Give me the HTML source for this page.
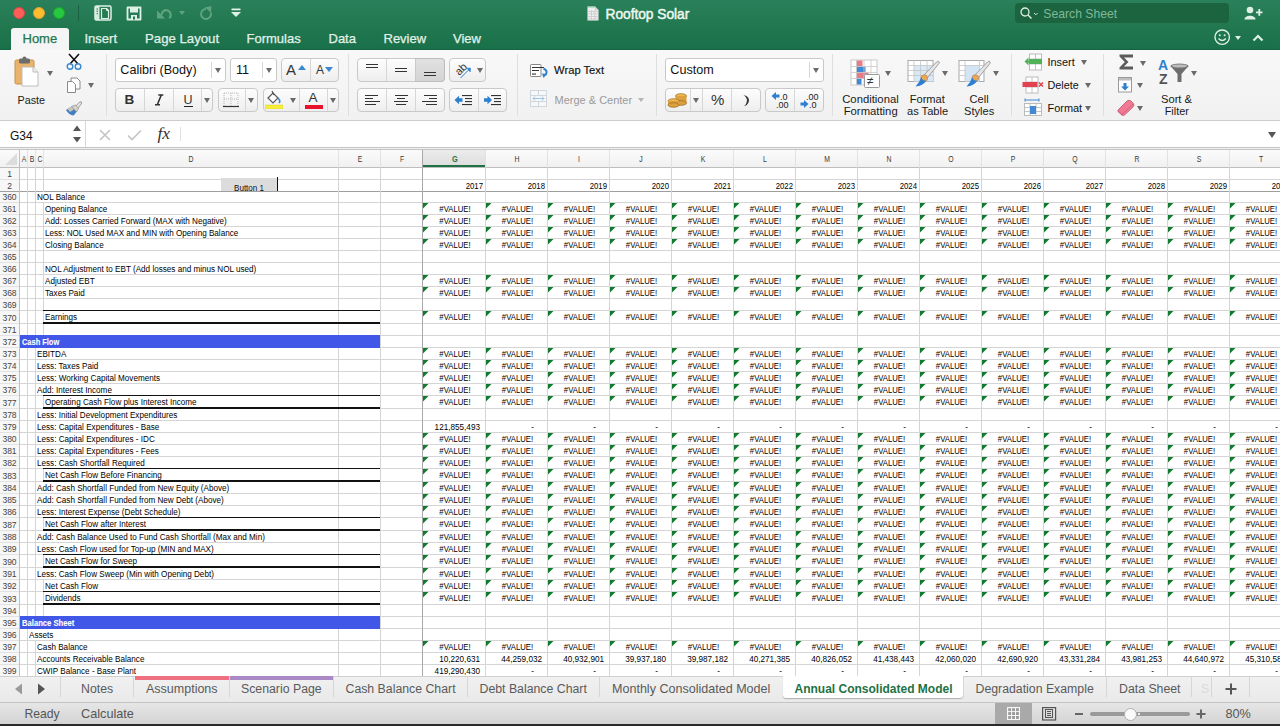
<!DOCTYPE html><html><head><meta charset="utf-8"><style>
html,body{margin:0;padding:0;}body{width:1280px;height:726px;overflow:hidden;position:relative;background:#fff;font-family:"Liberation Sans",sans-serif;}
div,svg{box-sizing:border-box;}
.g{position:absolute;background:#d4d4d4;}
.c{position:absolute;font-size:8.5px;line-height:12px;white-space:pre;color:#000;}
.grp{position:absolute;border:1px solid #c9c9c9;border-radius:4px;background:linear-gradient(#fdfdfd,#eeeeee);}
.dv{position:absolute;top:1px;bottom:1px;width:1px;background:#d6d6d6;}
.arr{position:absolute;width:0;height:0;border-left:3.5px solid transparent;border-right:3.5px solid transparent;border-top:5px solid #6a6a6a;}
.sep{position:absolute;top:54px;height:62px;width:1px;background:#dedede;}
.rl{position:absolute;font-size:12.5px;color:#1a1a1a;white-space:pre;}
</style></head><body>
<div style="position:absolute;left:0px;top:0px;width:1280px;height:50px;background:linear-gradient(#2a805a,#22784f 50%,#18704a);"></div>
<div style="position:absolute;left:0px;top:49px;width:1280px;height:1px;background:#176444;"></div>
<div style="position:absolute;left:12.5px;top:6.500000000000001px;width:12.6px;height:12.6px;border-radius:50%;background:#fc5f57;border:0.7px solid #df4744;box-sizing:border-box;"></div>
<div style="position:absolute;left:32.6px;top:6.500000000000001px;width:12.6px;height:12.6px;border-radius:50%;background:#fdbb2e;border:0.7px solid #de9f34;box-sizing:border-box;"></div>
<div style="position:absolute;left:52.6px;top:6.500000000000001px;width:12.6px;height:12.6px;border-radius:50%;background:#27c83f;border:0.7px solid #1aab29;box-sizing:border-box;"></div>
<div style="position:absolute;left:78px;top:5px;width:1px;height:16px;background:#1b6040;"></div>
<svg style="position:absolute;left:94px;top:5px;" width="18" height="16" viewBox="0 0 18 16"><rect x="1" y="1" width="16" height="14" rx="1.5" fill="none" stroke="#dff0e5" stroke-width="1.5"/><rect x="1" y="1" width="4.5" height="14" fill="#dff0e5" opacity="0.95"/><circle cx="3.2" cy="4" r="0.7" fill="#22784f"/><circle cx="3.2" cy="6.3" r="0.7" fill="#22784f"/><circle cx="3.2" cy="8.6" r="0.7" fill="#22784f"/><path d="M7.5 3.5h5l2 2v8h-7z" fill="none" stroke="#dff0e5" stroke-width="1.2" stroke-linejoin="round"/><path d="M12.5 3.5v2h2" fill="none" stroke="#dff0e5" stroke-width="1"/></svg>
<svg style="position:absolute;left:126px;top:6px;" width="16" height="15" viewBox="0 0 16 15"><path d="M1.5 1.5h13v12h-13z" fill="none" stroke="#dff0e5" stroke-width="1.8" stroke-linejoin="round"/><rect x="4" y="1.5" width="8" height="5" fill="#dff0e5"/><rect x="5" y="9" width="6" height="4.5" fill="#dff0e5"/><rect x="7" y="10.5" width="2" height="3" fill="#22784c"/></svg>
<svg style="position:absolute;left:156px;top:6px;" width="17" height="15" viewBox="0 0 17 15"><path d="M5.5 9 A4.6 4.6 0 1 1 13.2 12.2" fill="none" stroke="#5ea57e" stroke-width="2.2"/><path d="M1 4.5 L1 12.5 L9 12.5z" fill="#5ea57e"/></svg>
<div class="arr" style="left:179px;top:11px;border-top-color:#5ea57e;border-left-width:3px;border-right-width:3px;border-top-width:4px;"></div>
<svg style="position:absolute;left:199px;top:6px;" width="15" height="15" viewBox="0 0 15 15"><path d="M7 3 A5 5 0 1 0 11.8 6.5" fill="none" stroke="#5ea57e" stroke-width="2"/><path d="M6 1.2 L12.5 0.3 L11.8 6.8z" fill="#5ea57e"/></svg>
<svg style="position:absolute;left:231px;top:8px;" width="11" height="11" viewBox="0 0 11 11"><rect x="0.5" y="0.5" width="9" height="1.8" fill="#dff0e5"/><path d="M0 4h10l-5 5z" fill="#dff0e5"/></svg>
<svg style="position:absolute;left:587px;top:6px;" width="12" height="15" viewBox="0 0 12 15"><path d="M0.5 0.5h7.5l3.5 3.5v10.5h-11z" fill="#eeeeee"/><path d="M0.5 0.5h7.5l1 1h-8.5z" fill="#8fc79f"/><path d="M8 0.5v3.5h3.5z" fill="#cfcfcf"/><g fill="#c9c9c9"><rect x="0.5" y="5" width="11" height="0.8"/><rect x="0.5" y="7.5" width="11" height="0.8"/><rect x="0.5" y="10" width="11" height="0.8"/><rect x="0.5" y="12.5" width="11" height="0.8"/><rect x="4" y="4" width="0.8" height="10.5"/><rect x="7.5" y="4" width="0.8" height="10.5"/></g></svg>
<div style="position:absolute;left:605.5px;top:4.52px;white-space:pre;line-height:20px;font-size:13.8px;color:#eef8f1;-webkit-text-stroke:0.45px #eef8f1;letter-spacing:-0.05px;">Rooftop Solar</div>
<div style="position:absolute;left:1015px;top:3px;width:214px;height:20px;background:#1c6440;border-radius:4px;"></div>
<svg style="position:absolute;left:1020px;top:7px;" width="18" height="12" viewBox="0 0 18 12"><circle cx="5" cy="5" r="4" fill="none" stroke="#dcefe3" stroke-width="1.3"/><line x1="8" y1="8" x2="11.5" y2="11.5" stroke="#dcefe3" stroke-width="1.4"/><path d="M14 6 l1.8 1.8 l1.8 -1.8" fill="none" stroke="#dcefe3" stroke-width="1"/></svg>
<div style="position:absolute;left:1043.3px;top:3.57px;white-space:pre;line-height:20px;font-size:12.2px;color:#80b898;">Search Sheet</div>
<svg style="position:absolute;left:1244px;top:6px;" width="19" height="14" viewBox="0 0 19 14"><circle cx="6" cy="4" r="3.3" fill="#dff0e5"/><path d="M0.5 13.5 C0.5 8.5 11.5 8.5 11.5 13.5z" fill="#dff0e5"/><rect x="12" y="5.5" width="6.5" height="1.8" fill="#dff0e5"/><rect x="14.4" y="3" width="1.8" height="6.8" fill="#dff0e5"/></svg>
<svg style="position:absolute;left:1214px;top:29px;" width="17" height="17" viewBox="0 0 17 17"><circle cx="8.2" cy="8.2" r="7.2" fill="none" stroke="#dff0e5" stroke-width="1.4"/><circle cx="5.8" cy="6.3" r="1" fill="#dff0e5"/><circle cx="10.6" cy="6.3" r="1" fill="#dff0e5"/><path d="M4.5 9.5 Q8.2 13.5 11.9 9.5" fill="none" stroke="#dff0e5" stroke-width="1.3"/></svg>
<div class="arr" style="left:1234.5px;top:36px;border-top-color:#dff0e5;border-left-width:3px;border-right-width:3px;border-top-width:4px;"></div>
<svg style="position:absolute;left:1252px;top:33px;" width="12" height="9" viewBox="0 0 12 9"><path d="M1.5 7.5 L6 3 L10.5 7.5" fill="none" stroke="#dff0e5" stroke-width="2.2"/></svg>
<div style="position:absolute;left:11px;top:28px;width:58px;height:23px;background:#f5f5f5;border-radius:3px 3px 0 0;"></div>
<div style="position:absolute;left:22.5px;top:29.30px;white-space:pre;line-height:20px;font-size:13px;color:#22784c;-webkit-text-stroke:0.25px #22784c;">Home</div>
<div style="position:absolute;left:84.5px;top:29.30px;white-space:pre;line-height:20px;font-size:13px;color:#e2f1e8;-webkit-text-stroke:0.25px #e2f1e8;">Insert</div>
<div style="position:absolute;left:145px;top:29.23px;white-space:pre;line-height:20px;font-size:13.2px;color:#e2f1e8;-webkit-text-stroke:0.25px #e2f1e8;">Page Layout</div>
<div style="position:absolute;left:246.5px;top:29.30px;white-space:pre;line-height:20px;font-size:13px;color:#e2f1e8;-webkit-text-stroke:0.25px #e2f1e8;">Formulas</div>
<div style="position:absolute;left:328.5px;top:29.30px;white-space:pre;line-height:20px;font-size:13px;color:#e2f1e8;-webkit-text-stroke:0.25px #e2f1e8;">Data</div>
<div style="position:absolute;left:383.5px;top:29.30px;white-space:pre;line-height:20px;font-size:13px;color:#e2f1e8;-webkit-text-stroke:0.25px #e2f1e8;">Review</div>
<div style="position:absolute;left:453px;top:29.30px;white-space:pre;line-height:20px;font-size:13px;color:#e2f1e8;-webkit-text-stroke:0.25px #e2f1e8;">View</div>
<div style="position:absolute;left:0px;top:50px;width:1280px;height:70px;background:linear-gradient(#f8f8f8,#f1f1f1);"></div>
<div style="position:absolute;left:0px;top:120px;width:1280px;height:1px;background:#cdcdcd;"></div>
<div class="sep" style="left:106px;"></div>
<div class="sep" style="left:348px;"></div>
<div class="sep" style="left:517px;"></div>
<div class="sep" style="left:656px;"></div>
<div class="sep" style="left:832px;"></div>
<div class="sep" style="left:1011px;"></div>
<div class="sep" style="left:1103px;"></div>
<svg style="position:absolute;left:14px;top:56px;" width="28" height="32" viewBox="0 0 28 32"><rect x="1" y="4" width="19" height="24" rx="1.5" fill="#e9b36d" stroke="#c8914c" stroke-width="1"/><rect x="5" y="2.5" width="11" height="5" rx="1.5" fill="#6d6d6d"/><circle cx="10.5" cy="2.5" r="2" fill="#6d6d6d"/><path d="M8 11h11l5 5v14h-16z" fill="#fff" stroke="#bdbdbd" stroke-width="1"/><path d="M19 11v5h5" fill="#f0f0f0" stroke="#bdbdbd" stroke-width="1"/></svg>
<div class="arr" style="left:47px;top:71px;"></div>
<div style="position:absolute;left:17.5px;top:89.56px;white-space:pre;line-height:20px;font-size:10.8px;color:#1a1a1a;">Paste</div>
<svg style="position:absolute;left:66px;top:53px;" width="16" height="18" viewBox="0 0 16 18"><path d="M3 1 L12 11 M13 1 L4 11" stroke="#111" stroke-width="1.6"/><circle cx="4" cy="13.5" r="2.8" fill="none" stroke="#3a87d0" stroke-width="1.4"/><circle cx="12" cy="13.5" r="2.8" fill="none" stroke="#3a87d0" stroke-width="1.4"/></svg>
<svg style="position:absolute;left:66px;top:77px;" width="16" height="16" viewBox="0 0 16 16"><path d="M5 1h6l3 3v8h-9z" fill="#fff" stroke="#8a8a8a" stroke-width="1"/><path d="M1.5 4.5h5l3 3v8h-8z" fill="#fff" stroke="#8a8a8a" stroke-width="1"/></svg>
<div class="arr" style="left:88px;top:83px;"></div>
<svg style="position:absolute;left:65px;top:100px;" width="18" height="16" viewBox="0 0 18 16"><path d="M10.5 6.5 L14.5 2 Q16.5 1 16.8 3 L12.8 8.8z" fill="#e6e6e6" stroke="#8a8a8a" stroke-width="0.8"/><path d="M6.5 6.5 L10.5 5 L13.5 8.5 L11.5 12z" fill="#d9d3c8" stroke="#8a8a8a" stroke-width="0.7"/><path d="M1 10 L6.5 6.5 L11.5 12 L8.5 15.5 Q4 15 1 10z" fill="#3f7fc6"/><path d="M2.5 9 L6.5 6.5 L9 9.5 L5 12z" fill="#c9c2b5"/></svg>
<div class="grp" style="left:115px;top:58px;width:111px;height:24px;background:#fff;border-radius:3px;"></div>
<div class="dv" style="left:211px;top:62px;height:16px;"></div>
<div style="position:absolute;left:120.3px;top:60.23px;white-space:pre;line-height:20px;font-size:12.6px;color:#111;">Calibri (Body)</div>
<div class="arr" style="left:215px;top:68px;"></div>
<div class="grp" style="left:230px;top:58px;width:47px;height:24px;background:#fff;border-radius:3px;"></div>
<div class="dv" style="left:262px;top:62px;height:16px;"></div>
<div style="position:absolute;left:236px;top:60.23px;white-space:pre;line-height:20px;font-size:12.6px;color:#111;">11</div>
<div class="arr" style="left:266px;top:68px;"></div>
<div class="grp" style="left:281px;top:58px;width:58px;height:24px;"></div>
<div class="dv" style="left:310px;top:59px;height:22px;"></div>
<div style="position:absolute;left:286px;top:60px;white-space:pre;line-height:20px;font-size:15px;color:#333;">A</div>
<svg style="position:absolute;left:298px;top:65px;" width="8" height="5" viewBox="0 0 8 5"><path d="M0 5 L4 0 L8 5z" fill="#3a87d0"/></svg>
<div style="position:absolute;left:316px;top:62px;white-space:pre;line-height:16px;font-size:12px;color:#333;">A</div>
<svg style="position:absolute;left:325px;top:67px;" width="8" height="5" viewBox="0 0 8 5"><path d="M0 0 L4 5 L8 0z" fill="#3a87d0"/></svg>
<div class="grp" style="left:115px;top:88px;width:98px;height:24px;"></div>
<div class="dv" style="left:144px;top:89px;height:22px;"></div>
<div class="dv" style="left:173px;top:89px;height:22px;"></div>
<div class="dv" style="left:201px;top:89px;height:22px;"></div>
<div style="position:absolute;left:124.5px;top:89.82px;white-space:pre;line-height:20px;font-size:13.5px;font-weight:bold;color:#333;">B</div>
<svg style="position:absolute;left:153px;top:93px;" width="12" height="14" viewBox="0 0 12 14"><path d="M5.3 2 H10.3 M2 11.7 H7 M8.3 2 L4.3 11.7" fill="none" stroke="#333" stroke-width="1.6"/></svg>
<div style="position:absolute;left:183.5px;top:89.67px;white-space:pre;line-height:20px;font-size:12.5px;color:#333;">U</div>
<div style="position:absolute;left:183.5px;top:106px;width:9.5px;height:1.2px;background:#222;"></div>
<div class="arr" style="left:204px;top:98px;"></div>
<div class="grp" style="left:218px;top:88px;width:40px;height:24px;"></div>
<div class="dv" style="left:245px;top:89px;height:22px;"></div>
<svg style="position:absolute;left:223px;top:92px;" width="16" height="16" viewBox="0 0 16 16"><g stroke="#aaa" stroke-width="0.8" stroke-dasharray="1 1"><line x1="1" y1="1" x2="15" y2="1"/><line x1="1" y1="7" x2="15" y2="7"/><line x1="1" y1="1" x2="1" y2="14"/><line x1="8" y1="1" x2="8" y2="14"/><line x1="15" y1="1" x2="15" y2="14"/></g><line x1="0" y1="14.5" x2="16" y2="14.5" stroke="#333" stroke-width="1.2"/></svg>
<div class="arr" style="left:248px;top:98px;"></div>
<div class="grp" style="left:263px;top:88px;width:76px;height:24px;"></div>
<div class="dv" style="left:299px;top:89px;height:22px;"></div>
<div class="dv" style="left:327px;top:89px;height:22px;"></div>
<svg style="position:absolute;left:265px;top:90px;" width="18" height="19" viewBox="0 0 18 19"><path d="M3 8 L8 3 L13 8 L8 13z" fill="#fff" stroke="#555" stroke-width="1.2"/><path d="M7 1 L9 5" stroke="#555" stroke-width="1.2"/><path d="M13 8 Q16 11 14 13" fill="none" stroke="#3a87d0" stroke-width="1.6"/><rect x="0" y="15" width="18" height="4" fill="#f6ee3a" stroke="#d9cc2a" stroke-width="0.5"/></svg>
<div class="arr" style="left:290px;top:98px;"></div>
<div style="position:absolute;left:308.5px;top:87.82px;white-space:pre;line-height:20px;font-size:13.5px;color:#333;">A</div>
<div style="position:absolute;left:305px;top:105px;width:18px;height:4px;background:#e8132b;"></div>
<div class="arr" style="left:330px;top:98px;"></div>
<div class="grp" style="left:357px;top:58px;width:88px;height:24px;"></div>
<div style="position:absolute;left:415px;top:58px;width:30px;height:24px;border:1px solid #bdbdbd;border-left:none;border-radius:0 4px 4px 0;background:linear-gradient(#e1e1e1,#d4d4d4);box-sizing:border-box;"></div>
<div class="dv" style="left:386px;top:59px;height:22px;"></div>
<div style="position:absolute;left:415px;top:59px;width:1px;height:22px;background:#c9c9c9;"></div>
<div style="position:absolute;left:366px;top:64px;width:12px;height:1.3px;background:#333;"></div>
<div style="position:absolute;left:366px;top:67px;width:12px;height:1.3px;background:#333;"></div>
<div style="position:absolute;left:395px;top:68px;width:12px;height:1.3px;background:#333;"></div>
<div style="position:absolute;left:395px;top:71px;width:12px;height:1.3px;background:#333;"></div>
<div style="position:absolute;left:424px;top:72px;width:12px;height:1.3px;background:#333;"></div>
<div style="position:absolute;left:424px;top:75px;width:12px;height:1.3px;background:#333;"></div>
<div class="grp" style="left:449px;top:58px;width:37px;height:24px;"></div>
<svg style="position:absolute;left:453px;top:60px;" width="22" height="20" viewBox="0 0 22 20"><g transform="rotate(-45 9 9)"><text x="2" y="12" font-size="11" fill="#333" font-family="Liberation Sans">ab</text></g><path d="M7.5 18 L17 8.5" stroke="#2f7fd0" stroke-width="1"/><path d="M13.5 8.3 L17.3 8.2 L17.2 12" fill="#2f7fd0" stroke="#2f7fd0" stroke-width="0.8"/></svg>
<div class="arr" style="left:477px;top:68px;"></div>
<div class="grp" style="left:357px;top:88px;width:88px;height:24px;"></div>
<div class="dv" style="left:386px;top:89px;height:22px;"></div>
<div class="dv" style="left:415px;top:89px;height:22px;"></div>
<div style="position:absolute;left:365px;top:95px;width:13px;height:1.3px;background:#333;"></div><div style="position:absolute;left:365px;top:98px;width:8px;height:1.3px;background:#333;"></div><div style="position:absolute;left:365px;top:101px;width:15px;height:1.3px;background:#333;"></div><div style="position:absolute;left:365px;top:104px;width:11px;height:1.3px;background:#333;"></div>
<div style="position:absolute;left:394.5px;top:95px;width:13px;height:1.3px;background:#333;"></div><div style="position:absolute;left:397.0px;top:98px;width:8px;height:1.3px;background:#333;"></div><div style="position:absolute;left:394.0px;top:101px;width:14px;height:1.3px;background:#333;"></div><div style="position:absolute;left:396.0px;top:104px;width:10px;height:1.3px;background:#333;"></div>
<div style="position:absolute;left:424px;top:95px;width:13px;height:1.3px;background:#333;"></div><div style="position:absolute;left:429px;top:98px;width:8px;height:1.3px;background:#333;"></div><div style="position:absolute;left:422px;top:101px;width:15px;height:1.3px;background:#333;"></div><div style="position:absolute;left:426px;top:104px;width:11px;height:1.3px;background:#333;"></div>
<div class="grp" style="left:449px;top:88px;width:58px;height:24px;"></div>
<div class="dv" style="left:478px;top:89px;height:22px;"></div>
<svg style="position:absolute;left:454px;top:93px;" width="20" height="14" viewBox="0 0 20 14"><path d="M0.5 7 L5 2.8 L5 5.3 L8.5 5.3 L8.5 8.7 L5 8.7 L5 11.2z" fill="#2f7fd0"/><g fill="#333"><rect x="8" y="2" width="10" height="1.1"/><rect x="11" y="5" width="7" height="1.1"/><rect x="11" y="8" width="7" height="1.1"/><rect x="8" y="11" width="10" height="1.1"/></g></svg>
<svg style="position:absolute;left:483px;top:93px;" width="20" height="14" viewBox="0 0 20 14"><path d="M9 7 L4.5 2.8 L4.5 5.3 L1 5.3 L1 8.7 L4.5 8.7 L4.5 11.2z" fill="#2f7fd0"/><g fill="#333"><rect x="8" y="2" width="10" height="1.1"/><rect x="11" y="5" width="7" height="1.1"/><rect x="11" y="8" width="7" height="1.1"/><rect x="8" y="11" width="10" height="1.1"/></g></svg>
<svg style="position:absolute;left:529px;top:63px;" width="22" height="16" viewBox="0 0 22 16"><rect x="1.5" y="1.5" width="10.5" height="12" rx="0.8" fill="#fff" stroke="#888" stroke-width="1"/><g fill="#333"><rect x="3" y="4" width="12" height="1"/><rect x="3" y="7" width="7" height="1"/><rect x="3" y="10.5" width="4" height="1.1"/></g><path d="M14.5 5.5 Q19.5 7.5 16.5 12" fill="none" stroke="#2f7fd0" stroke-width="2"/><path d="M13 10.5 L18 11 L14.5 15z" fill="#2f7fd0"/></svg>
<div style="position:absolute;left:554.1px;top:60.12px;white-space:pre;line-height:20px;font-size:11.2px;color:#111;-webkit-text-stroke:0.15px #111;">Wrap Text</div>
<svg style="position:absolute;left:530px;top:90px;" width="18" height="18" viewBox="0 0 18 18"><rect x="0.5" y="0.5" width="16" height="16" fill="#f7f7f7" stroke="#cfd6dc" stroke-width="1"/><g stroke="#cfd6dc" stroke-width="1"><line x1="0.5" y1="5.5" x2="16.5" y2="5.5"/><line x1="0.5" y1="11.5" x2="16.5" y2="11.5"/><line x1="8.5" y1="0.5" x2="8.5" y2="5.5"/><line x1="8.5" y1="11.5" x2="8.5" y2="16.5"/></g><path d="M3 8.5h11M3 8.5l2-2M3 8.5l2 2M14 8.5l-2-2M14 8.5l-2 2" fill="none" stroke="#9cc6e8" stroke-width="1"/></svg>
<div style="position:absolute;left:554.5px;top:90.09px;white-space:pre;line-height:20px;font-size:11px;color:#9a9a9a;">Merge &amp; Center</div>
<div class="arr" style="left:638px;top:98px;border-top-color:#b5b5b5;border-left-width:3px;border-right-width:3px;border-top-width:4px;"></div>
<div class="grp" style="left:665px;top:58px;width:159px;height:24px;background:#fff;border-radius:3px;"></div>
<div class="dv" style="left:809px;top:62px;height:16px;"></div>
<div style="position:absolute;left:670.3px;top:59.73px;white-space:pre;line-height:20px;font-size:12.6px;color:#111;">Custom</div>
<div class="arr" style="left:813px;top:68px;"></div>
<div class="grp" style="left:665px;top:88px;width:96px;height:24px;"></div>
<div class="dv" style="left:690px;top:89px;height:22px;"></div>
<div class="dv" style="left:702px;top:89px;height:22px;"></div>
<div class="dv" style="left:731px;top:89px;height:22px;"></div>
<svg style="position:absolute;left:667px;top:93px;" width="21" height="15" viewBox="0 0 21 15"><g stroke="#9b6a1c" stroke-width="0.7"><ellipse cx="14" cy="3" rx="5.5" ry="2.3" fill="#f0b94e"/><rect x="8.5" y="3" width="11" height="7" fill="#dca040" stroke="none"/><ellipse cx="14" cy="10" rx="5.5" ry="2.3" fill="#dca040"/><ellipse cx="6.5" cy="8" rx="5.5" ry="2.3" fill="#f0b94e"/><rect x="1" y="8" width="11" height="4" fill="#dca040" stroke="none"/><ellipse cx="6.5" cy="12" rx="5.5" ry="2.3" fill="#dca040"/></g></svg>
<div class="arr" style="left:693px;top:98px;"></div>
<div style="position:absolute;left:711px;top:90.30px;white-space:pre;line-height:20px;font-size:15px;color:#333;">%</div>
<svg style="position:absolute;left:741px;top:94px;" width="10" height="13" viewBox="0 0 10 13"><path d="M2.5 1 Q9.5 2.5 7.5 8.5 Q6.5 11.5 3 12.2 Q5.8 10 6 6.5 Q6 3.5 2.5 1z" fill="#333"/></svg>
<div class="grp" style="left:765px;top:88px;width:59px;height:24px;"></div>
<div class="dv" style="left:794px;top:89px;height:22px;"></div>
<svg style="position:absolute;left:771px;top:91px;" width="22" height="18" viewBox="0 0 22 18"><path d="M0.5 5 L5 1 L5 3.5 L8.5 3.5 L8.5 6.5 L5 6.5 L5 9z" fill="#2f7fd0"/><text x="9" y="9" font-size="9" fill="#222" font-family="Liberation Sans">.0</text><text x="5" y="16.5" font-size="9" fill="#222" font-family="Liberation Sans">.00</text></svg>
<svg style="position:absolute;left:799px;top:91px;" width="22" height="18" viewBox="0 0 22 18"><text x="7" y="9" font-size="9" fill="#222" font-family="Liberation Sans">.00</text><path d="M9.5 13 L5 9 L5 11.5 L1.5 11.5 L1.5 14.5 L5 14.5 L5 17z" fill="#2f7fd0"/><text x="10" y="16.5" font-size="9" fill="#222" font-family="Liberation Sans">.0</text></svg>
<svg style="position:absolute;left:850px;top:59px;" width="32" height="30" viewBox="0 0 32 30"><g stroke="#c9c9c9" stroke-width="1" fill="#fff"><rect x="1" y="1" width="26" height="25"/></g><rect x="6.5" y="1.5" width="6" height="6" fill="#e77b86"/><rect x="6.5" y="7.5" width="9" height="6" fill="#3f8ad6"/><rect x="6.5" y="13.5" width="12" height="6" fill="#e77b86"/><rect x="6.5" y="19.5" width="5" height="6" fill="#3f8ad6"/><g stroke="#c9c9c9" stroke-width="0.8"><line x1="1" y1="7.5" x2="27" y2="7.5"/><line x1="1" y1="13.5" x2="27" y2="13.5"/><line x1="1" y1="19.5" x2="27" y2="19.5"/><line x1="6.5" y1="1" x2="6.5" y2="26"/><line x1="14" y1="1" x2="14" y2="26"/><line x1="21" y1="1" x2="21" y2="26"/></g><rect x="14.5" y="15.5" width="15" height="13" rx="1" fill="#fff" stroke="#9a9a9a" stroke-width="1"/><text x="17" y="26" font-size="12" fill="#333" font-family="Liberation Sans">≠</text></svg>
<div class="arr" style="left:885px;top:71px;"></div>
<div style="position:absolute;left:842.2px;top:89.28px;white-space:pre;line-height:20px;font-size:11.3px;color:#1a1a1a;">Conditional</div>
<div style="position:absolute;left:843.7px;top:100.88px;white-space:pre;line-height:20px;font-size:11.3px;color:#1a1a1a;">Formatting</div>
<svg style="position:absolute;left:907px;top:59px;" width="34" height="30" viewBox="0 0 34 30"><rect x="1" y="1.5" width="25" height="21" fill="#fff" stroke="#a9a9a9" stroke-width="1"/><rect x="7" y="6.5" width="19" height="16" fill="#d9e8f7"/><g stroke="#c4c4c4" stroke-width="0.8"><line x1="1" y1="6.5" x2="26" y2="6.5"/><line x1="1" y1="11.5" x2="26" y2="11.5"/><line x1="1" y1="16.5" x2="26" y2="16.5"/><line x1="7" y1="1.5" x2="7" y2="22.5"/><line x1="13.5" y1="1.5" x2="13.5" y2="22.5"/><line x1="20" y1="1.5" x2="20" y2="22.5"/></g><path d="M16.5 16.5 L29.5 3 Q32.5 1.2 32.2 4.2 L19.8 19.5z" fill="#e4e4e4" stroke="#8f8f8f" stroke-width="0.8"/><circle cx="17.3" cy="19" r="3.3" fill="#e7a85c" stroke="#b9813e" stroke-width="0.6"/><path d="M14.2 18.2 Q16 22.5 19.5 21.5 Q16 27 8.5 27.5 Q12.5 23.5 14.2 18.2z" fill="#2f7fd0"/></svg>
<div class="arr" style="left:942px;top:71px;"></div>
<div style="position:absolute;left:909.7px;top:89.35px;white-space:pre;line-height:20px;font-size:11.1px;color:#1a1a1a;">Format</div>
<div style="position:absolute;left:907px;top:100.95px;white-space:pre;line-height:20px;font-size:11.1px;color:#1a1a1a;">as Table</div>
<svg style="position:absolute;left:958px;top:59px;" width="34" height="30" viewBox="0 0 34 30"><rect x="1" y="1.5" width="25" height="21" fill="#fff" stroke="#a9a9a9" stroke-width="1"/><rect x="7" y="6.5" width="14.5" height="16" fill="#d3e4f5"/><g stroke="#c4c4c4" stroke-width="0.8"><line x1="1" y1="6.5" x2="26" y2="6.5"/><line x1="1" y1="11.5" x2="7" y2="11.5"/><line x1="1" y1="16.5" x2="7" y2="16.5"/><line x1="7" y1="1.5" x2="7" y2="22.5"/><line x1="21.5" y1="1.5" x2="21.5" y2="22.5"/></g><path d="M16.5 16.5 L29.5 3 Q32.5 1.2 32.2 4.2 L19.8 19.5z" fill="#e4e4e4" stroke="#8f8f8f" stroke-width="0.8"/><circle cx="17.3" cy="19" r="3.3" fill="#e7a85c" stroke="#b9813e" stroke-width="0.6"/><path d="M14.2 18.2 Q16 22.5 19.5 21.5 Q16 27 8.5 27.5 Q12.5 23.5 14.2 18.2z" fill="#2f7fd0"/></svg>
<div class="arr" style="left:993px;top:71px;"></div>
<div style="position:absolute;left:969.5px;top:89.35px;white-space:pre;line-height:20px;font-size:11.1px;color:#1a1a1a;">Cell</div>
<div style="position:absolute;left:964px;top:100.95px;white-space:pre;line-height:20px;font-size:11.1px;color:#1a1a1a;">Styles</div>
<svg style="position:absolute;left:1024px;top:53px;" width="20" height="18" viewBox="0 0 20 18"><g fill="#fff" stroke="#b5b5b5" stroke-width="0.9"><rect x="5.5" y="1" width="12" height="16"/></g><g stroke="#b5b5b5" stroke-width="0.8"><line x1="5.5" y1="6" x2="17.5" y2="6"/><line x1="5.5" y1="11" x2="17.5" y2="11"/><line x1="11.5" y1="1" x2="11.5" y2="17"/></g><rect x="5" y="6" width="13" height="5" fill="#4fb256"/><path d="M0.5 8.5 L4.5 4.5 L4.5 12.5z" fill="#4fb256"/><rect x="3" y="7.5" width="3" height="2" fill="#4fb256"/></svg>
<div style="position:absolute;left:1047.5px;top:52.12px;white-space:pre;line-height:20px;font-size:10.9px;color:#111;">Insert</div>
<div class="arr" style="left:1081px;top:60px;"></div>
<svg style="position:absolute;left:1022px;top:76px;" width="22" height="18" viewBox="0 0 22 18"><g fill="#fff" stroke="#b5b5b5" stroke-width="0.9"><rect x="4" y="1" width="12" height="16"/></g><g stroke="#b5b5b5" stroke-width="0.8"><line x1="4" y1="6" x2="16" y2="6"/><line x1="4" y1="11" x2="16" y2="11"/><line x1="10" y1="1" x2="10" y2="17"/></g><rect x="0.5" y="6" width="15" height="5" fill="#e0434d"/><path d="M17 6.5 L21 10.5 M21 6.5 L17 10.5" stroke="#e0434d" stroke-width="1.5"/></svg>
<div style="position:absolute;left:1047.5px;top:74.86px;white-space:pre;line-height:20px;font-size:10.8px;color:#111;">Delete</div>
<div class="arr" style="left:1085px;top:83px;"></div>
<svg style="position:absolute;left:1024px;top:98px;" width="19" height="19" viewBox="0 0 19 19"><g stroke="#2f7fd0" stroke-width="0.9"><line x1="1" y1="2" x2="15" y2="2"/><line x1="1" y1="0.5" x2="1" y2="3.5"/><line x1="15" y1="0.5" x2="15" y2="3.5"/></g><rect x="0.5" y="5.5" width="17" height="12" fill="#fff" stroke="#b5b5b5" stroke-width="0.9"/><g stroke="#b5b5b5" stroke-width="0.8"><line x1="0.5" y1="9.5" x2="17.5" y2="9.5"/><line x1="0.5" y1="13.5" x2="17.5" y2="13.5"/><line x1="6" y1="5.5" x2="6" y2="17.5"/><line x1="12" y1="5.5" x2="12" y2="17.5"/></g><rect x="6" y="8" width="6" height="8" fill="#3f8ad6"/></svg>
<div style="position:absolute;left:1047.5px;top:98.21px;white-space:pre;line-height:20px;font-size:10.95px;color:#111;">Format</div>
<div class="arr" style="left:1085px;top:106px;"></div>
<svg style="position:absolute;left:1119px;top:54px;" width="15" height="16" viewBox="0 0 15 16"><path d="M0.5 0.5 H14 V3.5 H5 L9.5 8 L5 12.5 H14 V15.5 H0.5 V13.5 L5.8 8 L0.5 2.5z" fill="#5c5c5c"/></svg>
<div class="arr" style="left:1140px;top:61px;"></div>
<svg style="position:absolute;left:1118px;top:77px;" width="15" height="16" viewBox="0 0 15 16"><rect x="0.5" y="0.5" width="13" height="14.5" fill="#fff" stroke="#9a9a9a" stroke-width="1"/><rect x="1" y="1" width="12" height="2.5" fill="#bdbdbd"/><path d="M5.5 6h3v3.5h2.5l-4 4l-4-4h2.5z" fill="#2f7fd0"/></svg>
<div class="arr" style="left:1137px;top:83px;"></div>
<svg style="position:absolute;left:1117px;top:99px;" width="18" height="17" viewBox="0 0 18 17"><path d="M1 11 L10 2 Q12 0.5 14 2 L16.5 4.5 Q17.5 6.5 16 8 L7.5 16 Q5.5 17 4 15.5 L1.5 13 Q0.5 12 1 11z" fill="#f07a94" stroke="#c0566c" stroke-width="0.8"/><path d="M1.5 12 L5 15.5 L16 5" fill="none" stroke="#c0566c" stroke-width="0.6"/></svg>
<div class="arr" style="left:1137px;top:106px;"></div>
<div style="position:absolute;left:1158px;top:58px;white-space:pre;line-height:14px;font-size:14px;font-weight:bold;color:#2f7fd0;">A</div>
<div style="position:absolute;left:1159px;top:72px;white-space:pre;line-height:14px;font-size:14px;font-weight:bold;color:#555;">Z</div>
<svg style="position:absolute;left:1170px;top:63px;" width="20" height="20" viewBox="0 0 20 20"><ellipse cx="9.5" cy="3" rx="9" ry="2.5" fill="#7b7b7b"/><path d="M0.5 3 L7.5 11 L7.5 19 L11.5 19 L11.5 11 L18.5 3z" fill="#6e6e6e"/><ellipse cx="9.5" cy="3" rx="7.5" ry="1.6" fill="#bdbdbd"/></svg>
<div class="arr" style="left:1191px;top:71px;"></div>
<div style="position:absolute;left:1161px;top:89.34px;white-space:pre;line-height:20px;font-size:11.15px;color:#1a1a1a;">Sort &amp;</div>
<div style="position:absolute;left:1164.7px;top:101.02px;white-space:pre;line-height:20px;font-size:10.9px;color:#1a1a1a;">Filter</div>
<div style="position:absolute;left:0px;top:121px;width:1280px;height:26px;background:#fff;"></div>
<div style="position:absolute;left:85px;top:121px;width:1px;height:26px;background:#d8d8d8;"></div>
<div style="position:absolute;left:10px;top:126.14px;white-space:pre;line-height:20px;font-size:12px;color:#111;">G34</div>
<svg style="position:absolute;left:72px;top:125px;" width="10" height="19" viewBox="0 0 10 19"><path d="M1 6 L5 0.5 L9 6z M1 12 L5 17.5 L9 12z" fill="#555"/></svg>
<svg style="position:absolute;left:99px;top:129px;" width="13" height="12" viewBox="0 0 13 12"><path d="M1 1 L11 11 M11 1 L1 11" stroke="#c4c4c4" stroke-width="1.6"/></svg>
<svg style="position:absolute;left:127px;top:129px;" width="15" height="12" viewBox="0 0 15 12"><path d="M1 6.5 L5 10.5 L14 1.5" fill="none" stroke="#c4c4c4" stroke-width="1.6"/></svg>
<div style="position:absolute;left:157.5px;top:123px;white-space:pre;line-height:20px;font-size:17.5px;color:#333;font-family:'Liberation Serif';"><i>fx</i></div>
<div style="position:absolute;left:180px;top:127px;width:1px;height:14px;background:#e0e0e0;"></div>
<div class="arr" style="left:1268px;top:132px;border-top-color:#555;border-left-width:4px;border-right-width:4px;border-top-width:6px;"></div>
<div style="position:absolute;left:0px;top:147px;width:1280px;height:1px;background:#c4c4c4;"></div>
<div style="position:absolute;left:0px;top:148px;width:1280px;height:1px;background:#f0f0f0;"></div>
<div style="position:absolute;left:0px;top:149px;width:1280px;height:1px;background:#c4c4c4;"></div>
<div style="position:absolute;left:0px;top:150px;width:1280px;height:17px;background:linear-gradient(#fbfbfb,#f1f1f1);"></div>
<div style="position:absolute;left:0px;top:167px;width:19px;height:509px;background:#f7f7f7;"></div>
<div style="position:absolute;left:423px;top:150px;width:62px;height:17px;background:linear-gradient(#ececec,#dcdcdc);"></div>
<div style="position:absolute;left:423px;top:165px;width:62px;height:2px;background:#1f7244;"></div>
<div style="position:absolute;left:0px;top:179px;width:1280px;height:1px;background:#d5d5d5;"></div>
<div style="position:absolute;left:0px;top:179px;width:19px;height:1px;background:#e2e2e2;"></div>
<div style="position:absolute;left:0px;top:191px;width:1280px;height:1px;background:#9f9f9f;"></div>
<div style="position:absolute;left:0px;top:202px;width:1280px;height:1px;background:#d5d5d5;"></div>
<div style="position:absolute;left:0px;top:202px;width:19px;height:1px;background:#e2e2e2;"></div>
<div style="position:absolute;left:0px;top:214px;width:1280px;height:1px;background:#d5d5d5;"></div>
<div style="position:absolute;left:0px;top:214px;width:19px;height:1px;background:#e2e2e2;"></div>
<div style="position:absolute;left:0px;top:226px;width:1280px;height:1px;background:#d5d5d5;"></div>
<div style="position:absolute;left:0px;top:226px;width:19px;height:1px;background:#e2e2e2;"></div>
<div style="position:absolute;left:0px;top:238px;width:1280px;height:1px;background:#d5d5d5;"></div>
<div style="position:absolute;left:0px;top:238px;width:19px;height:1px;background:#e2e2e2;"></div>
<div style="position:absolute;left:0px;top:250px;width:1280px;height:1px;background:#d5d5d5;"></div>
<div style="position:absolute;left:0px;top:250px;width:19px;height:1px;background:#e2e2e2;"></div>
<div style="position:absolute;left:0px;top:262px;width:1280px;height:1px;background:#d5d5d5;"></div>
<div style="position:absolute;left:0px;top:262px;width:19px;height:1px;background:#e2e2e2;"></div>
<div style="position:absolute;left:0px;top:274px;width:1280px;height:1px;background:#d5d5d5;"></div>
<div style="position:absolute;left:0px;top:274px;width:19px;height:1px;background:#e2e2e2;"></div>
<div style="position:absolute;left:0px;top:286px;width:1280px;height:1px;background:#d5d5d5;"></div>
<div style="position:absolute;left:0px;top:286px;width:19px;height:1px;background:#e2e2e2;"></div>
<div style="position:absolute;left:0px;top:298px;width:1280px;height:1px;background:#d5d5d5;"></div>
<div style="position:absolute;left:0px;top:298px;width:19px;height:1px;background:#e2e2e2;"></div>
<div style="position:absolute;left:0px;top:310px;width:1280px;height:1px;background:#d5d5d5;"></div>
<div style="position:absolute;left:0px;top:310px;width:19px;height:1px;background:#e2e2e2;"></div>
<div style="position:absolute;left:0px;top:323px;width:1280px;height:1px;background:#d5d5d5;"></div>
<div style="position:absolute;left:0px;top:323px;width:19px;height:1px;background:#e2e2e2;"></div>
<div style="position:absolute;left:0px;top:335px;width:1280px;height:1px;background:#d5d5d5;"></div>
<div style="position:absolute;left:0px;top:335px;width:19px;height:1px;background:#e2e2e2;"></div>
<div style="position:absolute;left:0px;top:347px;width:1280px;height:1px;background:#d5d5d5;"></div>
<div style="position:absolute;left:0px;top:347px;width:19px;height:1px;background:#e2e2e2;"></div>
<div style="position:absolute;left:0px;top:359px;width:1280px;height:1px;background:#d5d5d5;"></div>
<div style="position:absolute;left:0px;top:359px;width:19px;height:1px;background:#e2e2e2;"></div>
<div style="position:absolute;left:0px;top:371px;width:1280px;height:1px;background:#d5d5d5;"></div>
<div style="position:absolute;left:0px;top:371px;width:19px;height:1px;background:#e2e2e2;"></div>
<div style="position:absolute;left:0px;top:383px;width:1280px;height:1px;background:#d5d5d5;"></div>
<div style="position:absolute;left:0px;top:383px;width:19px;height:1px;background:#e2e2e2;"></div>
<div style="position:absolute;left:0px;top:395px;width:1280px;height:1px;background:#d5d5d5;"></div>
<div style="position:absolute;left:0px;top:395px;width:19px;height:1px;background:#e2e2e2;"></div>
<div style="position:absolute;left:0px;top:408px;width:1280px;height:1px;background:#d5d5d5;"></div>
<div style="position:absolute;left:0px;top:408px;width:19px;height:1px;background:#e2e2e2;"></div>
<div style="position:absolute;left:0px;top:420px;width:1280px;height:1px;background:#d5d5d5;"></div>
<div style="position:absolute;left:0px;top:420px;width:19px;height:1px;background:#e2e2e2;"></div>
<div style="position:absolute;left:0px;top:432px;width:1280px;height:1px;background:#d5d5d5;"></div>
<div style="position:absolute;left:0px;top:432px;width:19px;height:1px;background:#e2e2e2;"></div>
<div style="position:absolute;left:0px;top:444px;width:1280px;height:1px;background:#d5d5d5;"></div>
<div style="position:absolute;left:0px;top:444px;width:19px;height:1px;background:#e2e2e2;"></div>
<div style="position:absolute;left:0px;top:456px;width:1280px;height:1px;background:#d5d5d5;"></div>
<div style="position:absolute;left:0px;top:456px;width:19px;height:1px;background:#e2e2e2;"></div>
<div style="position:absolute;left:0px;top:468px;width:1280px;height:1px;background:#d5d5d5;"></div>
<div style="position:absolute;left:0px;top:468px;width:19px;height:1px;background:#e2e2e2;"></div>
<div style="position:absolute;left:0px;top:481px;width:1280px;height:1px;background:#d5d5d5;"></div>
<div style="position:absolute;left:0px;top:481px;width:19px;height:1px;background:#e2e2e2;"></div>
<div style="position:absolute;left:0px;top:493px;width:1280px;height:1px;background:#d5d5d5;"></div>
<div style="position:absolute;left:0px;top:493px;width:19px;height:1px;background:#e2e2e2;"></div>
<div style="position:absolute;left:0px;top:505px;width:1280px;height:1px;background:#d5d5d5;"></div>
<div style="position:absolute;left:0px;top:505px;width:19px;height:1px;background:#e2e2e2;"></div>
<div style="position:absolute;left:0px;top:517px;width:1280px;height:1px;background:#d5d5d5;"></div>
<div style="position:absolute;left:0px;top:517px;width:19px;height:1px;background:#e2e2e2;"></div>
<div style="position:absolute;left:0px;top:530px;width:1280px;height:1px;background:#d5d5d5;"></div>
<div style="position:absolute;left:0px;top:530px;width:19px;height:1px;background:#e2e2e2;"></div>
<div style="position:absolute;left:0px;top:542px;width:1280px;height:1px;background:#d5d5d5;"></div>
<div style="position:absolute;left:0px;top:542px;width:19px;height:1px;background:#e2e2e2;"></div>
<div style="position:absolute;left:0px;top:554px;width:1280px;height:1px;background:#d5d5d5;"></div>
<div style="position:absolute;left:0px;top:554px;width:19px;height:1px;background:#e2e2e2;"></div>
<div style="position:absolute;left:0px;top:567px;width:1280px;height:1px;background:#d5d5d5;"></div>
<div style="position:absolute;left:0px;top:567px;width:19px;height:1px;background:#e2e2e2;"></div>
<div style="position:absolute;left:0px;top:579px;width:1280px;height:1px;background:#d5d5d5;"></div>
<div style="position:absolute;left:0px;top:579px;width:19px;height:1px;background:#e2e2e2;"></div>
<div style="position:absolute;left:0px;top:591px;width:1280px;height:1px;background:#d5d5d5;"></div>
<div style="position:absolute;left:0px;top:591px;width:19px;height:1px;background:#e2e2e2;"></div>
<div style="position:absolute;left:0px;top:604px;width:1280px;height:1px;background:#d5d5d5;"></div>
<div style="position:absolute;left:0px;top:604px;width:19px;height:1px;background:#e2e2e2;"></div>
<div style="position:absolute;left:0px;top:616px;width:1280px;height:1px;background:#d5d5d5;"></div>
<div style="position:absolute;left:0px;top:616px;width:19px;height:1px;background:#e2e2e2;"></div>
<div style="position:absolute;left:0px;top:628px;width:1280px;height:1px;background:#d5d5d5;"></div>
<div style="position:absolute;left:0px;top:628px;width:19px;height:1px;background:#e2e2e2;"></div>
<div style="position:absolute;left:0px;top:640px;width:1280px;height:1px;background:#d5d5d5;"></div>
<div style="position:absolute;left:0px;top:640px;width:19px;height:1px;background:#e2e2e2;"></div>
<div style="position:absolute;left:0px;top:652px;width:1280px;height:1px;background:#d5d5d5;"></div>
<div style="position:absolute;left:0px;top:652px;width:19px;height:1px;background:#e2e2e2;"></div>
<div style="position:absolute;left:0px;top:664px;width:1280px;height:1px;background:#d5d5d5;"></div>
<div style="position:absolute;left:0px;top:664px;width:19px;height:1px;background:#e2e2e2;"></div>
<div style="position:absolute;left:0px;top:676px;width:1280px;height:1px;background:#d5d5d5;"></div>
<div style="position:absolute;left:0px;top:676px;width:19px;height:1px;background:#e2e2e2;"></div>
<div style="position:absolute;left:0px;top:167px;width:1280px;height:1px;background:#bdbdbd;"></div>
<div style="position:absolute;left:27px;top:150px;width:1px;height:17px;background:#e2e2e2;"></div>
<div style="position:absolute;left:35px;top:150px;width:1px;height:17px;background:#e2e2e2;"></div>
<div style="position:absolute;left:43px;top:150px;width:1px;height:17px;background:#e2e2e2;"></div>
<div style="position:absolute;left:338px;top:150px;width:1px;height:17px;background:#e2e2e2;"></div>
<div style="position:absolute;left:380px;top:150px;width:1px;height:17px;background:#e2e2e2;"></div>
<div style="position:absolute;left:485px;top:150px;width:1px;height:17px;background:#e2e2e2;"></div>
<div style="position:absolute;left:547px;top:150px;width:1px;height:17px;background:#e2e2e2;"></div>
<div style="position:absolute;left:609px;top:150px;width:1px;height:17px;background:#e2e2e2;"></div>
<div style="position:absolute;left:671px;top:150px;width:1px;height:17px;background:#e2e2e2;"></div>
<div style="position:absolute;left:733px;top:150px;width:1px;height:17px;background:#e2e2e2;"></div>
<div style="position:absolute;left:795px;top:150px;width:1px;height:17px;background:#e2e2e2;"></div>
<div style="position:absolute;left:857px;top:150px;width:1px;height:17px;background:#e2e2e2;"></div>
<div style="position:absolute;left:919px;top:150px;width:1px;height:17px;background:#e2e2e2;"></div>
<div style="position:absolute;left:981px;top:150px;width:1px;height:17px;background:#e2e2e2;"></div>
<div style="position:absolute;left:1043px;top:150px;width:1px;height:17px;background:#e2e2e2;"></div>
<div style="position:absolute;left:1105px;top:150px;width:1px;height:17px;background:#e2e2e2;"></div>
<div style="position:absolute;left:1167px;top:150px;width:1px;height:17px;background:#e2e2e2;"></div>
<div style="position:absolute;left:1229px;top:150px;width:1px;height:17px;background:#e2e2e2;"></div>
<div style="position:absolute;left:1291px;top:150px;width:1px;height:17px;background:#e2e2e2;"></div>
<div style="position:absolute;left:27px;top:167px;width:1px;height:509px;background:#d5d5d5;"></div>
<div style="position:absolute;left:35px;top:167px;width:1px;height:509px;background:#d5d5d5;"></div>
<div style="position:absolute;left:338px;top:167px;width:1px;height:509px;background:#d5d5d5;"></div>
<div style="position:absolute;left:380px;top:167px;width:1px;height:509px;background:#d5d5d5;"></div>
<div style="position:absolute;left:485px;top:167px;width:1px;height:509px;background:#d5d5d5;"></div>
<div style="position:absolute;left:547px;top:167px;width:1px;height:509px;background:#d5d5d5;"></div>
<div style="position:absolute;left:609px;top:167px;width:1px;height:509px;background:#d5d5d5;"></div>
<div style="position:absolute;left:671px;top:167px;width:1px;height:509px;background:#d5d5d5;"></div>
<div style="position:absolute;left:733px;top:167px;width:1px;height:509px;background:#d5d5d5;"></div>
<div style="position:absolute;left:795px;top:167px;width:1px;height:509px;background:#d5d5d5;"></div>
<div style="position:absolute;left:857px;top:167px;width:1px;height:509px;background:#d5d5d5;"></div>
<div style="position:absolute;left:919px;top:167px;width:1px;height:509px;background:#d5d5d5;"></div>
<div style="position:absolute;left:981px;top:167px;width:1px;height:509px;background:#d5d5d5;"></div>
<div style="position:absolute;left:1043px;top:167px;width:1px;height:509px;background:#d5d5d5;"></div>
<div style="position:absolute;left:1105px;top:167px;width:1px;height:509px;background:#d5d5d5;"></div>
<div style="position:absolute;left:1167px;top:167px;width:1px;height:509px;background:#d5d5d5;"></div>
<div style="position:absolute;left:1229px;top:167px;width:1px;height:509px;background:#d5d5d5;"></div>
<div style="position:absolute;left:1291px;top:167px;width:1px;height:509px;background:#d5d5d5;"></div>
<div style="position:absolute;left:43px;top:167px;width:1px;height:509px;background:#d5d5d5;"></div>
<div style="position:absolute;left:19px;top:150px;width:1px;height:526px;background:#c0c0c0;"></div>
<div style="position:absolute;left:422px;top:150px;width:1.3px;height:526px;background:#a8a8a8;"></div>
<svg style="position:absolute;left:4px;top:152px;" width="14" height="14" viewBox="0 0 14 14"><path d="M13 1 L13 13 L1 13z" fill="#dcdcdc"/></svg>
<div style="position:absolute;left:9.3px;top:153px;width:30px;text-align:center;font-size:8.8px;line-height:12px;color:#3a3a3a;transform:scaleX(0.78);">A</div>
<div style="position:absolute;left:17.3px;top:153px;width:30px;text-align:center;font-size:8.8px;line-height:12px;color:#3a3a3a;transform:scaleX(0.78);">B</div>
<div style="position:absolute;left:25.3px;top:153px;width:30px;text-align:center;font-size:8.8px;line-height:12px;color:#3a3a3a;transform:scaleX(0.78);">C</div>
<div style="position:absolute;left:176.3px;top:153px;width:30px;text-align:center;font-size:8.8px;line-height:12px;color:#3a3a3a;transform:scaleX(0.78);">D</div>
<div style="position:absolute;left:345.3px;top:153px;width:30px;text-align:center;font-size:8.8px;line-height:12px;color:#3a3a3a;transform:scaleX(0.78);">E</div>
<div style="position:absolute;left:387.3px;top:153px;width:30px;text-align:center;font-size:8.8px;line-height:12px;color:#3a3a3a;transform:scaleX(0.78);">F</div>
<div style="position:absolute;left:440.3px;top:153px;width:30px;text-align:center;font-size:8.8px;line-height:12px;color:#3a3a3a;transform:scaleX(0.78);font-weight:bold;color:#1f7244;font-size:9.5px;">G</div>
<div style="position:absolute;left:502.3px;top:153px;width:30px;text-align:center;font-size:8.8px;line-height:12px;color:#3a3a3a;transform:scaleX(0.78);">H</div>
<div style="position:absolute;left:564.3px;top:153px;width:30px;text-align:center;font-size:8.8px;line-height:12px;color:#3a3a3a;transform:scaleX(0.78);">I</div>
<div style="position:absolute;left:626.3px;top:153px;width:30px;text-align:center;font-size:8.8px;line-height:12px;color:#3a3a3a;transform:scaleX(0.78);">J</div>
<div style="position:absolute;left:688.3px;top:153px;width:30px;text-align:center;font-size:8.8px;line-height:12px;color:#3a3a3a;transform:scaleX(0.78);">K</div>
<div style="position:absolute;left:750.3px;top:153px;width:30px;text-align:center;font-size:8.8px;line-height:12px;color:#3a3a3a;transform:scaleX(0.78);">L</div>
<div style="position:absolute;left:812.3px;top:153px;width:30px;text-align:center;font-size:8.8px;line-height:12px;color:#3a3a3a;transform:scaleX(0.78);">M</div>
<div style="position:absolute;left:874.3px;top:153px;width:30px;text-align:center;font-size:8.8px;line-height:12px;color:#3a3a3a;transform:scaleX(0.78);">N</div>
<div style="position:absolute;left:936.3px;top:153px;width:30px;text-align:center;font-size:8.8px;line-height:12px;color:#3a3a3a;transform:scaleX(0.78);">O</div>
<div style="position:absolute;left:998.3px;top:153px;width:30px;text-align:center;font-size:8.8px;line-height:12px;color:#3a3a3a;transform:scaleX(0.78);">P</div>
<div style="position:absolute;left:1060.3px;top:153px;width:30px;text-align:center;font-size:8.8px;line-height:12px;color:#3a3a3a;transform:scaleX(0.78);">Q</div>
<div style="position:absolute;left:1122.3px;top:153px;width:30px;text-align:center;font-size:8.8px;line-height:12px;color:#3a3a3a;transform:scaleX(0.78);">R</div>
<div style="position:absolute;left:1184.3px;top:153px;width:30px;text-align:center;font-size:8.8px;line-height:12px;color:#3a3a3a;transform:scaleX(0.78);">S</div>
<div style="position:absolute;left:1246.3px;top:153px;width:30px;text-align:center;font-size:8.8px;line-height:12px;color:#3a3a3a;transform:scaleX(0.78);">T</div>
<div style="position:absolute;left:0px;top:168px;width:19px;text-align:center;font-size:8.5px;line-height:12px;color:#444;">1</div>
<div style="position:absolute;left:0px;top:180px;width:19px;text-align:center;font-size:8.5px;line-height:12px;color:#444;">2</div>
<div style="position:absolute;left:0px;top:191px;width:19px;text-align:center;font-size:8.5px;line-height:12px;color:#444;">360</div>
<div style="position:absolute;left:0px;top:203px;width:19px;text-align:center;font-size:8.5px;line-height:12px;color:#444;">361</div>
<div style="position:absolute;left:0px;top:215px;width:19px;text-align:center;font-size:8.5px;line-height:12px;color:#444;">362</div>
<div style="position:absolute;left:0px;top:227px;width:19px;text-align:center;font-size:8.5px;line-height:12px;color:#444;">363</div>
<div style="position:absolute;left:0px;top:239px;width:19px;text-align:center;font-size:8.5px;line-height:12px;color:#444;">364</div>
<div style="position:absolute;left:0px;top:251px;width:19px;text-align:center;font-size:8.5px;line-height:12px;color:#444;">365</div>
<div style="position:absolute;left:0px;top:263px;width:19px;text-align:center;font-size:8.5px;line-height:12px;color:#444;">366</div>
<div style="position:absolute;left:0px;top:275px;width:19px;text-align:center;font-size:8.5px;line-height:12px;color:#444;">367</div>
<div style="position:absolute;left:0px;top:287px;width:19px;text-align:center;font-size:8.5px;line-height:12px;color:#444;">368</div>
<div style="position:absolute;left:0px;top:299px;width:19px;text-align:center;font-size:8.5px;line-height:12px;color:#444;">369</div>
<div style="position:absolute;left:0px;top:312px;width:19px;text-align:center;font-size:8.5px;line-height:12px;color:#444;">370</div>
<div style="position:absolute;left:0px;top:324px;width:19px;text-align:center;font-size:8.5px;line-height:12px;color:#444;">371</div>
<div style="position:absolute;left:0px;top:336px;width:19px;text-align:center;font-size:8.5px;line-height:12px;color:#444;">372</div>
<div style="position:absolute;left:0px;top:348px;width:19px;text-align:center;font-size:8.5px;line-height:12px;color:#444;">373</div>
<div style="position:absolute;left:0px;top:360px;width:19px;text-align:center;font-size:8.5px;line-height:12px;color:#444;">374</div>
<div style="position:absolute;left:0px;top:372px;width:19px;text-align:center;font-size:8.5px;line-height:12px;color:#444;">375</div>
<div style="position:absolute;left:0px;top:384px;width:19px;text-align:center;font-size:8.5px;line-height:12px;color:#444;">376</div>
<div style="position:absolute;left:0px;top:397px;width:19px;text-align:center;font-size:8.5px;line-height:12px;color:#444;">377</div>
<div style="position:absolute;left:0px;top:409px;width:19px;text-align:center;font-size:8.5px;line-height:12px;color:#444;">378</div>
<div style="position:absolute;left:0px;top:421px;width:19px;text-align:center;font-size:8.5px;line-height:12px;color:#444;">379</div>
<div style="position:absolute;left:0px;top:433px;width:19px;text-align:center;font-size:8.5px;line-height:12px;color:#444;">380</div>
<div style="position:absolute;left:0px;top:445px;width:19px;text-align:center;font-size:8.5px;line-height:12px;color:#444;">381</div>
<div style="position:absolute;left:0px;top:457px;width:19px;text-align:center;font-size:8.5px;line-height:12px;color:#444;">382</div>
<div style="position:absolute;left:0px;top:470px;width:19px;text-align:center;font-size:8.5px;line-height:12px;color:#444;">383</div>
<div style="position:absolute;left:0px;top:482px;width:19px;text-align:center;font-size:8.5px;line-height:12px;color:#444;">384</div>
<div style="position:absolute;left:0px;top:494px;width:19px;text-align:center;font-size:8.5px;line-height:12px;color:#444;">385</div>
<div style="position:absolute;left:0px;top:506px;width:19px;text-align:center;font-size:8.5px;line-height:12px;color:#444;">386</div>
<div style="position:absolute;left:0px;top:519px;width:19px;text-align:center;font-size:8.5px;line-height:12px;color:#444;">387</div>
<div style="position:absolute;left:0px;top:531px;width:19px;text-align:center;font-size:8.5px;line-height:12px;color:#444;">388</div>
<div style="position:absolute;left:0px;top:543px;width:19px;text-align:center;font-size:8.5px;line-height:12px;color:#444;">389</div>
<div style="position:absolute;left:0px;top:556px;width:19px;text-align:center;font-size:8.5px;line-height:12px;color:#444;">390</div>
<div style="position:absolute;left:0px;top:568px;width:19px;text-align:center;font-size:8.5px;line-height:12px;color:#444;">391</div>
<div style="position:absolute;left:0px;top:580px;width:19px;text-align:center;font-size:8.5px;line-height:12px;color:#444;">392</div>
<div style="position:absolute;left:0px;top:593px;width:19px;text-align:center;font-size:8.5px;line-height:12px;color:#444;">393</div>
<div style="position:absolute;left:0px;top:605px;width:19px;text-align:center;font-size:8.5px;line-height:12px;color:#444;">394</div>
<div style="position:absolute;left:0px;top:617px;width:19px;text-align:center;font-size:8.5px;line-height:12px;color:#444;">395</div>
<div style="position:absolute;left:0px;top:629px;width:19px;text-align:center;font-size:8.5px;line-height:12px;color:#444;">396</div>
<div style="position:absolute;left:0px;top:641px;width:19px;text-align:center;font-size:8.5px;line-height:12px;color:#444;">397</div>
<div style="position:absolute;left:0px;top:653px;width:19px;text-align:center;font-size:8.5px;line-height:12px;color:#444;">398</div>
<div style="position:absolute;left:0px;top:665px;width:19px;text-align:center;font-size:8.5px;line-height:12px;color:#444;">399</div>
<div style="position:absolute;left:43px;top:192px;width:1px;height:10px;background:#fff;"></div>
<div class="c" style="left:37px;top:190.5px;transform:scaleX(0.955);transform-origin:0 50%;">NOL Balance</div>
<div class="c" style="left:45px;top:202.5px;transform:scaleX(0.955);transform-origin:0 50%;">Opening Balance</div>
<div class="c" style="left:45px;top:214.5px;transform:scaleX(0.955);transform-origin:0 50%;">Add: Losses Carried Forward (MAX with Negative)</div>
<div class="c" style="left:45px;top:226.5px;transform:scaleX(0.955);transform-origin:0 50%;">Less: NOL Used MAX and MIN with Opening Balance</div>
<div class="c" style="left:45px;top:238.5px;transform:scaleX(0.955);transform-origin:0 50%;">Closing Balance</div>
<div class="c" style="left:45px;top:262.5px;transform:scaleX(0.955);transform-origin:0 50%;">NOL Adjustment to EBT (Add losses and minus NOL used)</div>
<div class="c" style="left:45px;top:274.5px;transform:scaleX(0.955);transform-origin:0 50%;">Adjusted EBT</div>
<div class="c" style="left:45px;top:286.5px;transform:scaleX(0.955);transform-origin:0 50%;">Taxes Paid</div>
<div class="c" style="left:45px;top:310.5px;transform:scaleX(0.955);transform-origin:0 50%;">Earnings</div>
<div style="position:absolute;left:20px;top:335px;width:360px;height:13px;background:#4157e8;"></div>
<div class="c" style="left:21.5px;top:335.7px;color:#fff;font-weight:bold;-webkit-text-stroke:0.1px #fff;transform:scaleX(0.875);transform-origin:0 50%;">Cash Flow</div>
<div style="position:absolute;left:43px;top:348px;width:1px;height:11px;background:#fff;"></div>
<div class="c" style="left:37px;top:347.5px;transform:scaleX(0.955);transform-origin:0 50%;">EBITDA</div>
<div style="position:absolute;left:43px;top:360px;width:1px;height:11px;background:#fff;"></div>
<div class="c" style="left:37px;top:359.5px;transform:scaleX(0.955);transform-origin:0 50%;">Less: Taxes Paid</div>
<div style="position:absolute;left:43px;top:372px;width:1px;height:11px;background:#fff;"></div>
<div class="c" style="left:37px;top:371.5px;transform:scaleX(0.955);transform-origin:0 50%;">Less: Working Capital Movements</div>
<div style="position:absolute;left:43px;top:384px;width:1px;height:11px;background:#fff;"></div>
<div class="c" style="left:37px;top:383.5px;transform:scaleX(0.955);transform-origin:0 50%;">Add: Interest Income</div>
<div class="c" style="left:45px;top:395.5px;transform:scaleX(0.955);transform-origin:0 50%;">Operating Cash Flow plus Interest Income</div>
<div style="position:absolute;left:43px;top:409px;width:1px;height:11px;background:#fff;"></div>
<div class="c" style="left:37px;top:408.5px;transform:scaleX(0.955);transform-origin:0 50%;">Less: Initial Development Expenditures</div>
<div style="position:absolute;left:43px;top:421px;width:1px;height:11px;background:#fff;"></div>
<div class="c" style="left:37px;top:420.5px;transform:scaleX(0.955);transform-origin:0 50%;">Less: Capital Expenditures - Base</div>
<div style="position:absolute;left:43px;top:433px;width:1px;height:11px;background:#fff;"></div>
<div class="c" style="left:37px;top:432.5px;transform:scaleX(0.955);transform-origin:0 50%;">Less: Capital Expenditures - IDC</div>
<div style="position:absolute;left:43px;top:445px;width:1px;height:11px;background:#fff;"></div>
<div class="c" style="left:37px;top:444.5px;transform:scaleX(0.955);transform-origin:0 50%;">Less: Capital Expenditures - Fees</div>
<div style="position:absolute;left:43px;top:457px;width:1px;height:11px;background:#fff;"></div>
<div class="c" style="left:37px;top:456.5px;transform:scaleX(0.955);transform-origin:0 50%;">Less: Cash Shortfall Required</div>
<div class="c" style="left:45px;top:468.5px;transform:scaleX(0.955);transform-origin:0 50%;">Net Cash Flow Before Financing</div>
<div style="position:absolute;left:43px;top:482px;width:1px;height:11px;background:#fff;"></div>
<div class="c" style="left:37px;top:481.5px;transform:scaleX(0.955);transform-origin:0 50%;">Add: Cash Shortfall Funded from New Equity (Above)</div>
<div style="position:absolute;left:43px;top:494px;width:1px;height:11px;background:#fff;"></div>
<div class="c" style="left:37px;top:493.5px;transform:scaleX(0.955);transform-origin:0 50%;">Add: Cash Shortfall Funded from New Debt (Above)</div>
<div style="position:absolute;left:43px;top:506px;width:1px;height:11px;background:#fff;"></div>
<div class="c" style="left:37px;top:505.5px;transform:scaleX(0.955);transform-origin:0 50%;">Less: Interest Expense (Debt Schedule)</div>
<div class="c" style="left:45px;top:517.5px;transform:scaleX(0.955);transform-origin:0 50%;">Net Cash Flow after Interest</div>
<div style="position:absolute;left:43px;top:531px;width:1px;height:11px;background:#fff;"></div>
<div class="c" style="left:37px;top:530.5px;transform:scaleX(0.955);transform-origin:0 50%;">Add: Cash Balance Used to Fund Cash Shortfall (Max and Min)</div>
<div style="position:absolute;left:43px;top:543px;width:1px;height:11px;background:#fff;"></div>
<div class="c" style="left:37px;top:542.5px;transform:scaleX(0.955);transform-origin:0 50%;">Less: Cash Flow used for Top-up (MIN and MAX)</div>
<div class="c" style="left:45px;top:554.5px;transform:scaleX(0.955);transform-origin:0 50%;">Net Cash Flow for Sweep</div>
<div style="position:absolute;left:43px;top:568px;width:1px;height:11px;background:#fff;"></div>
<div class="c" style="left:37px;top:567.5px;transform:scaleX(0.955);transform-origin:0 50%;">Less: Cash Flow Sweep (Min with Opening Debt)</div>
<div class="c" style="left:45px;top:579.5px;transform:scaleX(0.955);transform-origin:0 50%;">Net Cash Flow</div>
<div class="c" style="left:45px;top:591.5px;transform:scaleX(0.955);transform-origin:0 50%;">Dividends</div>
<div style="position:absolute;left:20px;top:616px;width:360px;height:13px;background:#4157e8;"></div>
<div class="c" style="left:21.5px;top:616.7px;color:#fff;font-weight:bold;-webkit-text-stroke:0.1px #fff;transform:scaleX(0.9);transform-origin:0 50%;">Balance Sheet</div>
<div style="position:absolute;left:35px;top:629px;width:1px;height:11px;background:#fff;"></div>
<div style="position:absolute;left:43px;top:629px;width:1px;height:11px;background:#fff;"></div>
<div class="c" style="left:29px;top:628.5px;transform:scaleX(0.955);transform-origin:0 50%;">Assets</div>
<div style="position:absolute;left:43px;top:641px;width:1px;height:11px;background:#fff;"></div>
<div class="c" style="left:37px;top:640.5px;transform:scaleX(0.955);transform-origin:0 50%;">Cash Balance</div>
<div style="position:absolute;left:43px;top:653px;width:1px;height:11px;background:#fff;"></div>
<div class="c" style="left:37px;top:652.5px;transform:scaleX(0.955);transform-origin:0 50%;">Accounts Receivable Balance</div>
<div style="position:absolute;left:43px;top:665px;width:1px;height:11px;background:#fff;"></div>
<div class="c" style="left:37px;top:664.5px;transform:scaleX(0.955);transform-origin:0 50%;">CWIP Balance - Base Plant</div>
<div style="position:absolute;left:43px;top:310px;width:337px;height:1px;background:#111;"></div>
<div style="position:absolute;left:43px;top:322px;width:337px;height:2px;background:#111;"></div>
<div style="position:absolute;left:43px;top:395px;width:337px;height:1px;background:#111;"></div>
<div style="position:absolute;left:43px;top:407px;width:337px;height:2px;background:#111;"></div>
<div style="position:absolute;left:43px;top:468px;width:337px;height:1px;background:#111;"></div>
<div style="position:absolute;left:43px;top:480px;width:337px;height:2px;background:#111;"></div>
<div style="position:absolute;left:43px;top:517px;width:337px;height:1px;background:#111;"></div>
<div style="position:absolute;left:43px;top:529px;width:337px;height:2px;background:#111;"></div>
<div style="position:absolute;left:43px;top:554px;width:337px;height:1px;background:#111;"></div>
<div style="position:absolute;left:43px;top:566px;width:337px;height:2px;background:#111;"></div>
<div style="position:absolute;left:43px;top:591px;width:337px;height:1px;background:#111;"></div>
<div style="position:absolute;left:43px;top:603px;width:337px;height:2px;background:#111;"></div>
<div style="position:absolute;left:221px;top:178px;width:56px;height:13px;background:#dcdcdc;"></div>
<div style="position:absolute;left:221px;top:178px;width:56px;height:13px;overflow:hidden;"><div class="c" style="left:12.5px;top:4.3px;color:#111;transform:scaleX(0.95);transform-origin:0 50%;">Button 1</div></div>
<div style="position:absolute;left:276.5px;top:177px;width:1.6px;height:14px;background:#111;"></div>
<div class="c" style="left:402.5px;width:80px;text-align:right;top:179.5px;transform:scaleX(0.915);transform-origin:100% 50%;">2017</div>
<div class="c" style="left:464.5px;width:80px;text-align:right;top:179.5px;transform:scaleX(0.915);transform-origin:100% 50%;">2018</div>
<div class="c" style="left:526.5px;width:80px;text-align:right;top:179.5px;transform:scaleX(0.915);transform-origin:100% 50%;">2019</div>
<div class="c" style="left:588.5px;width:80px;text-align:right;top:179.5px;transform:scaleX(0.915);transform-origin:100% 50%;">2020</div>
<div class="c" style="left:650.5px;width:80px;text-align:right;top:179.5px;transform:scaleX(0.915);transform-origin:100% 50%;">2021</div>
<div class="c" style="left:712.5px;width:80px;text-align:right;top:179.5px;transform:scaleX(0.915);transform-origin:100% 50%;">2022</div>
<div class="c" style="left:774.5px;width:80px;text-align:right;top:179.5px;transform:scaleX(0.915);transform-origin:100% 50%;">2023</div>
<div class="c" style="left:836.5px;width:80px;text-align:right;top:179.5px;transform:scaleX(0.915);transform-origin:100% 50%;">2024</div>
<div class="c" style="left:898.5px;width:80px;text-align:right;top:179.5px;transform:scaleX(0.915);transform-origin:100% 50%;">2025</div>
<div class="c" style="left:960.5px;width:80px;text-align:right;top:179.5px;transform:scaleX(0.915);transform-origin:100% 50%;">2026</div>
<div class="c" style="left:1022.5px;width:80px;text-align:right;top:179.5px;transform:scaleX(0.915);transform-origin:100% 50%;">2027</div>
<div class="c" style="left:1084.5px;width:80px;text-align:right;top:179.5px;transform:scaleX(0.915);transform-origin:100% 50%;">2028</div>
<div class="c" style="left:1146.5px;width:80px;text-align:right;top:179.5px;transform:scaleX(0.915);transform-origin:100% 50%;">2029</div>
<div class="c" style="left:1208.5px;width:80px;text-align:right;top:179.5px;transform:scaleX(0.915);transform-origin:100% 50%;">2030</div>
<svg style="position:absolute;left:423px;top:203px;" width="6" height="6" viewBox="0 0 6 6"><path d="M0 0 L5.5 0 L0 5.5z" fill="#127a2e"/></svg>
<div class="c" style="left:423.8px;width:62px;text-align:center;top:202.5px;transform:scaleX(0.91);">#VALUE!</div>
<svg style="position:absolute;left:486px;top:203px;" width="6" height="6" viewBox="0 0 6 6"><path d="M0 0 L5.5 0 L0 5.5z" fill="#127a2e"/></svg>
<div class="c" style="left:486.8px;width:61px;text-align:center;top:202.5px;transform:scaleX(0.91);">#VALUE!</div>
<svg style="position:absolute;left:548px;top:203px;" width="6" height="6" viewBox="0 0 6 6"><path d="M0 0 L5.5 0 L0 5.5z" fill="#127a2e"/></svg>
<div class="c" style="left:548.8px;width:61px;text-align:center;top:202.5px;transform:scaleX(0.91);">#VALUE!</div>
<svg style="position:absolute;left:610px;top:203px;" width="6" height="6" viewBox="0 0 6 6"><path d="M0 0 L5.5 0 L0 5.5z" fill="#127a2e"/></svg>
<div class="c" style="left:610.8px;width:61px;text-align:center;top:202.5px;transform:scaleX(0.91);">#VALUE!</div>
<svg style="position:absolute;left:672px;top:203px;" width="6" height="6" viewBox="0 0 6 6"><path d="M0 0 L5.5 0 L0 5.5z" fill="#127a2e"/></svg>
<div class="c" style="left:672.8px;width:61px;text-align:center;top:202.5px;transform:scaleX(0.91);">#VALUE!</div>
<svg style="position:absolute;left:734px;top:203px;" width="6" height="6" viewBox="0 0 6 6"><path d="M0 0 L5.5 0 L0 5.5z" fill="#127a2e"/></svg>
<div class="c" style="left:734.8px;width:61px;text-align:center;top:202.5px;transform:scaleX(0.91);">#VALUE!</div>
<svg style="position:absolute;left:796px;top:203px;" width="6" height="6" viewBox="0 0 6 6"><path d="M0 0 L5.5 0 L0 5.5z" fill="#127a2e"/></svg>
<div class="c" style="left:796.8px;width:61px;text-align:center;top:202.5px;transform:scaleX(0.91);">#VALUE!</div>
<svg style="position:absolute;left:858px;top:203px;" width="6" height="6" viewBox="0 0 6 6"><path d="M0 0 L5.5 0 L0 5.5z" fill="#127a2e"/></svg>
<div class="c" style="left:858.8px;width:61px;text-align:center;top:202.5px;transform:scaleX(0.91);">#VALUE!</div>
<svg style="position:absolute;left:920px;top:203px;" width="6" height="6" viewBox="0 0 6 6"><path d="M0 0 L5.5 0 L0 5.5z" fill="#127a2e"/></svg>
<div class="c" style="left:920.8px;width:61px;text-align:center;top:202.5px;transform:scaleX(0.91);">#VALUE!</div>
<svg style="position:absolute;left:982px;top:203px;" width="6" height="6" viewBox="0 0 6 6"><path d="M0 0 L5.5 0 L0 5.5z" fill="#127a2e"/></svg>
<div class="c" style="left:982.8px;width:61px;text-align:center;top:202.5px;transform:scaleX(0.91);">#VALUE!</div>
<svg style="position:absolute;left:1044px;top:203px;" width="6" height="6" viewBox="0 0 6 6"><path d="M0 0 L5.5 0 L0 5.5z" fill="#127a2e"/></svg>
<div class="c" style="left:1044.8px;width:61px;text-align:center;top:202.5px;transform:scaleX(0.91);">#VALUE!</div>
<svg style="position:absolute;left:1106px;top:203px;" width="6" height="6" viewBox="0 0 6 6"><path d="M0 0 L5.5 0 L0 5.5z" fill="#127a2e"/></svg>
<div class="c" style="left:1106.8px;width:61px;text-align:center;top:202.5px;transform:scaleX(0.91);">#VALUE!</div>
<svg style="position:absolute;left:1168px;top:203px;" width="6" height="6" viewBox="0 0 6 6"><path d="M0 0 L5.5 0 L0 5.5z" fill="#127a2e"/></svg>
<div class="c" style="left:1168.8px;width:61px;text-align:center;top:202.5px;transform:scaleX(0.91);">#VALUE!</div>
<svg style="position:absolute;left:1230px;top:203px;" width="6" height="6" viewBox="0 0 6 6"><path d="M0 0 L5.5 0 L0 5.5z" fill="#127a2e"/></svg>
<div class="c" style="left:1230.8px;width:61px;text-align:center;top:202.5px;transform:scaleX(0.91);">#VALUE!</div>
<svg style="position:absolute;left:423px;top:215px;" width="6" height="6" viewBox="0 0 6 6"><path d="M0 0 L5.5 0 L0 5.5z" fill="#127a2e"/></svg>
<div class="c" style="left:423.8px;width:62px;text-align:center;top:214.5px;transform:scaleX(0.91);">#VALUE!</div>
<svg style="position:absolute;left:486px;top:215px;" width="6" height="6" viewBox="0 0 6 6"><path d="M0 0 L5.5 0 L0 5.5z" fill="#127a2e"/></svg>
<div class="c" style="left:486.8px;width:61px;text-align:center;top:214.5px;transform:scaleX(0.91);">#VALUE!</div>
<svg style="position:absolute;left:548px;top:215px;" width="6" height="6" viewBox="0 0 6 6"><path d="M0 0 L5.5 0 L0 5.5z" fill="#127a2e"/></svg>
<div class="c" style="left:548.8px;width:61px;text-align:center;top:214.5px;transform:scaleX(0.91);">#VALUE!</div>
<svg style="position:absolute;left:610px;top:215px;" width="6" height="6" viewBox="0 0 6 6"><path d="M0 0 L5.5 0 L0 5.5z" fill="#127a2e"/></svg>
<div class="c" style="left:610.8px;width:61px;text-align:center;top:214.5px;transform:scaleX(0.91);">#VALUE!</div>
<svg style="position:absolute;left:672px;top:215px;" width="6" height="6" viewBox="0 0 6 6"><path d="M0 0 L5.5 0 L0 5.5z" fill="#127a2e"/></svg>
<div class="c" style="left:672.8px;width:61px;text-align:center;top:214.5px;transform:scaleX(0.91);">#VALUE!</div>
<svg style="position:absolute;left:734px;top:215px;" width="6" height="6" viewBox="0 0 6 6"><path d="M0 0 L5.5 0 L0 5.5z" fill="#127a2e"/></svg>
<div class="c" style="left:734.8px;width:61px;text-align:center;top:214.5px;transform:scaleX(0.91);">#VALUE!</div>
<svg style="position:absolute;left:796px;top:215px;" width="6" height="6" viewBox="0 0 6 6"><path d="M0 0 L5.5 0 L0 5.5z" fill="#127a2e"/></svg>
<div class="c" style="left:796.8px;width:61px;text-align:center;top:214.5px;transform:scaleX(0.91);">#VALUE!</div>
<svg style="position:absolute;left:858px;top:215px;" width="6" height="6" viewBox="0 0 6 6"><path d="M0 0 L5.5 0 L0 5.5z" fill="#127a2e"/></svg>
<div class="c" style="left:858.8px;width:61px;text-align:center;top:214.5px;transform:scaleX(0.91);">#VALUE!</div>
<svg style="position:absolute;left:920px;top:215px;" width="6" height="6" viewBox="0 0 6 6"><path d="M0 0 L5.5 0 L0 5.5z" fill="#127a2e"/></svg>
<div class="c" style="left:920.8px;width:61px;text-align:center;top:214.5px;transform:scaleX(0.91);">#VALUE!</div>
<svg style="position:absolute;left:982px;top:215px;" width="6" height="6" viewBox="0 0 6 6"><path d="M0 0 L5.5 0 L0 5.5z" fill="#127a2e"/></svg>
<div class="c" style="left:982.8px;width:61px;text-align:center;top:214.5px;transform:scaleX(0.91);">#VALUE!</div>
<svg style="position:absolute;left:1044px;top:215px;" width="6" height="6" viewBox="0 0 6 6"><path d="M0 0 L5.5 0 L0 5.5z" fill="#127a2e"/></svg>
<div class="c" style="left:1044.8px;width:61px;text-align:center;top:214.5px;transform:scaleX(0.91);">#VALUE!</div>
<svg style="position:absolute;left:1106px;top:215px;" width="6" height="6" viewBox="0 0 6 6"><path d="M0 0 L5.5 0 L0 5.5z" fill="#127a2e"/></svg>
<div class="c" style="left:1106.8px;width:61px;text-align:center;top:214.5px;transform:scaleX(0.91);">#VALUE!</div>
<svg style="position:absolute;left:1168px;top:215px;" width="6" height="6" viewBox="0 0 6 6"><path d="M0 0 L5.5 0 L0 5.5z" fill="#127a2e"/></svg>
<div class="c" style="left:1168.8px;width:61px;text-align:center;top:214.5px;transform:scaleX(0.91);">#VALUE!</div>
<svg style="position:absolute;left:1230px;top:215px;" width="6" height="6" viewBox="0 0 6 6"><path d="M0 0 L5.5 0 L0 5.5z" fill="#127a2e"/></svg>
<div class="c" style="left:1230.8px;width:61px;text-align:center;top:214.5px;transform:scaleX(0.91);">#VALUE!</div>
<svg style="position:absolute;left:423px;top:227px;" width="6" height="6" viewBox="0 0 6 6"><path d="M0 0 L5.5 0 L0 5.5z" fill="#127a2e"/></svg>
<div class="c" style="left:423.8px;width:62px;text-align:center;top:226.5px;transform:scaleX(0.91);">#VALUE!</div>
<svg style="position:absolute;left:486px;top:227px;" width="6" height="6" viewBox="0 0 6 6"><path d="M0 0 L5.5 0 L0 5.5z" fill="#127a2e"/></svg>
<div class="c" style="left:486.8px;width:61px;text-align:center;top:226.5px;transform:scaleX(0.91);">#VALUE!</div>
<svg style="position:absolute;left:548px;top:227px;" width="6" height="6" viewBox="0 0 6 6"><path d="M0 0 L5.5 0 L0 5.5z" fill="#127a2e"/></svg>
<div class="c" style="left:548.8px;width:61px;text-align:center;top:226.5px;transform:scaleX(0.91);">#VALUE!</div>
<svg style="position:absolute;left:610px;top:227px;" width="6" height="6" viewBox="0 0 6 6"><path d="M0 0 L5.5 0 L0 5.5z" fill="#127a2e"/></svg>
<div class="c" style="left:610.8px;width:61px;text-align:center;top:226.5px;transform:scaleX(0.91);">#VALUE!</div>
<svg style="position:absolute;left:672px;top:227px;" width="6" height="6" viewBox="0 0 6 6"><path d="M0 0 L5.5 0 L0 5.5z" fill="#127a2e"/></svg>
<div class="c" style="left:672.8px;width:61px;text-align:center;top:226.5px;transform:scaleX(0.91);">#VALUE!</div>
<svg style="position:absolute;left:734px;top:227px;" width="6" height="6" viewBox="0 0 6 6"><path d="M0 0 L5.5 0 L0 5.5z" fill="#127a2e"/></svg>
<div class="c" style="left:734.8px;width:61px;text-align:center;top:226.5px;transform:scaleX(0.91);">#VALUE!</div>
<svg style="position:absolute;left:796px;top:227px;" width="6" height="6" viewBox="0 0 6 6"><path d="M0 0 L5.5 0 L0 5.5z" fill="#127a2e"/></svg>
<div class="c" style="left:796.8px;width:61px;text-align:center;top:226.5px;transform:scaleX(0.91);">#VALUE!</div>
<svg style="position:absolute;left:858px;top:227px;" width="6" height="6" viewBox="0 0 6 6"><path d="M0 0 L5.5 0 L0 5.5z" fill="#127a2e"/></svg>
<div class="c" style="left:858.8px;width:61px;text-align:center;top:226.5px;transform:scaleX(0.91);">#VALUE!</div>
<svg style="position:absolute;left:920px;top:227px;" width="6" height="6" viewBox="0 0 6 6"><path d="M0 0 L5.5 0 L0 5.5z" fill="#127a2e"/></svg>
<div class="c" style="left:920.8px;width:61px;text-align:center;top:226.5px;transform:scaleX(0.91);">#VALUE!</div>
<svg style="position:absolute;left:982px;top:227px;" width="6" height="6" viewBox="0 0 6 6"><path d="M0 0 L5.5 0 L0 5.5z" fill="#127a2e"/></svg>
<div class="c" style="left:982.8px;width:61px;text-align:center;top:226.5px;transform:scaleX(0.91);">#VALUE!</div>
<svg style="position:absolute;left:1044px;top:227px;" width="6" height="6" viewBox="0 0 6 6"><path d="M0 0 L5.5 0 L0 5.5z" fill="#127a2e"/></svg>
<div class="c" style="left:1044.8px;width:61px;text-align:center;top:226.5px;transform:scaleX(0.91);">#VALUE!</div>
<svg style="position:absolute;left:1106px;top:227px;" width="6" height="6" viewBox="0 0 6 6"><path d="M0 0 L5.5 0 L0 5.5z" fill="#127a2e"/></svg>
<div class="c" style="left:1106.8px;width:61px;text-align:center;top:226.5px;transform:scaleX(0.91);">#VALUE!</div>
<svg style="position:absolute;left:1168px;top:227px;" width="6" height="6" viewBox="0 0 6 6"><path d="M0 0 L5.5 0 L0 5.5z" fill="#127a2e"/></svg>
<div class="c" style="left:1168.8px;width:61px;text-align:center;top:226.5px;transform:scaleX(0.91);">#VALUE!</div>
<svg style="position:absolute;left:1230px;top:227px;" width="6" height="6" viewBox="0 0 6 6"><path d="M0 0 L5.5 0 L0 5.5z" fill="#127a2e"/></svg>
<div class="c" style="left:1230.8px;width:61px;text-align:center;top:226.5px;transform:scaleX(0.91);">#VALUE!</div>
<svg style="position:absolute;left:423px;top:239px;" width="6" height="6" viewBox="0 0 6 6"><path d="M0 0 L5.5 0 L0 5.5z" fill="#127a2e"/></svg>
<div class="c" style="left:423.8px;width:62px;text-align:center;top:238.5px;transform:scaleX(0.91);">#VALUE!</div>
<svg style="position:absolute;left:486px;top:239px;" width="6" height="6" viewBox="0 0 6 6"><path d="M0 0 L5.5 0 L0 5.5z" fill="#127a2e"/></svg>
<div class="c" style="left:486.8px;width:61px;text-align:center;top:238.5px;transform:scaleX(0.91);">#VALUE!</div>
<svg style="position:absolute;left:548px;top:239px;" width="6" height="6" viewBox="0 0 6 6"><path d="M0 0 L5.5 0 L0 5.5z" fill="#127a2e"/></svg>
<div class="c" style="left:548.8px;width:61px;text-align:center;top:238.5px;transform:scaleX(0.91);">#VALUE!</div>
<svg style="position:absolute;left:610px;top:239px;" width="6" height="6" viewBox="0 0 6 6"><path d="M0 0 L5.5 0 L0 5.5z" fill="#127a2e"/></svg>
<div class="c" style="left:610.8px;width:61px;text-align:center;top:238.5px;transform:scaleX(0.91);">#VALUE!</div>
<svg style="position:absolute;left:672px;top:239px;" width="6" height="6" viewBox="0 0 6 6"><path d="M0 0 L5.5 0 L0 5.5z" fill="#127a2e"/></svg>
<div class="c" style="left:672.8px;width:61px;text-align:center;top:238.5px;transform:scaleX(0.91);">#VALUE!</div>
<svg style="position:absolute;left:734px;top:239px;" width="6" height="6" viewBox="0 0 6 6"><path d="M0 0 L5.5 0 L0 5.5z" fill="#127a2e"/></svg>
<div class="c" style="left:734.8px;width:61px;text-align:center;top:238.5px;transform:scaleX(0.91);">#VALUE!</div>
<svg style="position:absolute;left:796px;top:239px;" width="6" height="6" viewBox="0 0 6 6"><path d="M0 0 L5.5 0 L0 5.5z" fill="#127a2e"/></svg>
<div class="c" style="left:796.8px;width:61px;text-align:center;top:238.5px;transform:scaleX(0.91);">#VALUE!</div>
<svg style="position:absolute;left:858px;top:239px;" width="6" height="6" viewBox="0 0 6 6"><path d="M0 0 L5.5 0 L0 5.5z" fill="#127a2e"/></svg>
<div class="c" style="left:858.8px;width:61px;text-align:center;top:238.5px;transform:scaleX(0.91);">#VALUE!</div>
<svg style="position:absolute;left:920px;top:239px;" width="6" height="6" viewBox="0 0 6 6"><path d="M0 0 L5.5 0 L0 5.5z" fill="#127a2e"/></svg>
<div class="c" style="left:920.8px;width:61px;text-align:center;top:238.5px;transform:scaleX(0.91);">#VALUE!</div>
<svg style="position:absolute;left:982px;top:239px;" width="6" height="6" viewBox="0 0 6 6"><path d="M0 0 L5.5 0 L0 5.5z" fill="#127a2e"/></svg>
<div class="c" style="left:982.8px;width:61px;text-align:center;top:238.5px;transform:scaleX(0.91);">#VALUE!</div>
<svg style="position:absolute;left:1044px;top:239px;" width="6" height="6" viewBox="0 0 6 6"><path d="M0 0 L5.5 0 L0 5.5z" fill="#127a2e"/></svg>
<div class="c" style="left:1044.8px;width:61px;text-align:center;top:238.5px;transform:scaleX(0.91);">#VALUE!</div>
<svg style="position:absolute;left:1106px;top:239px;" width="6" height="6" viewBox="0 0 6 6"><path d="M0 0 L5.5 0 L0 5.5z" fill="#127a2e"/></svg>
<div class="c" style="left:1106.8px;width:61px;text-align:center;top:238.5px;transform:scaleX(0.91);">#VALUE!</div>
<svg style="position:absolute;left:1168px;top:239px;" width="6" height="6" viewBox="0 0 6 6"><path d="M0 0 L5.5 0 L0 5.5z" fill="#127a2e"/></svg>
<div class="c" style="left:1168.8px;width:61px;text-align:center;top:238.5px;transform:scaleX(0.91);">#VALUE!</div>
<svg style="position:absolute;left:1230px;top:239px;" width="6" height="6" viewBox="0 0 6 6"><path d="M0 0 L5.5 0 L0 5.5z" fill="#127a2e"/></svg>
<div class="c" style="left:1230.8px;width:61px;text-align:center;top:238.5px;transform:scaleX(0.91);">#VALUE!</div>
<svg style="position:absolute;left:423px;top:275px;" width="6" height="6" viewBox="0 0 6 6"><path d="M0 0 L5.5 0 L0 5.5z" fill="#127a2e"/></svg>
<div class="c" style="left:423.8px;width:62px;text-align:center;top:274.5px;transform:scaleX(0.91);">#VALUE!</div>
<svg style="position:absolute;left:486px;top:275px;" width="6" height="6" viewBox="0 0 6 6"><path d="M0 0 L5.5 0 L0 5.5z" fill="#127a2e"/></svg>
<div class="c" style="left:486.8px;width:61px;text-align:center;top:274.5px;transform:scaleX(0.91);">#VALUE!</div>
<svg style="position:absolute;left:548px;top:275px;" width="6" height="6" viewBox="0 0 6 6"><path d="M0 0 L5.5 0 L0 5.5z" fill="#127a2e"/></svg>
<div class="c" style="left:548.8px;width:61px;text-align:center;top:274.5px;transform:scaleX(0.91);">#VALUE!</div>
<svg style="position:absolute;left:610px;top:275px;" width="6" height="6" viewBox="0 0 6 6"><path d="M0 0 L5.5 0 L0 5.5z" fill="#127a2e"/></svg>
<div class="c" style="left:610.8px;width:61px;text-align:center;top:274.5px;transform:scaleX(0.91);">#VALUE!</div>
<svg style="position:absolute;left:672px;top:275px;" width="6" height="6" viewBox="0 0 6 6"><path d="M0 0 L5.5 0 L0 5.5z" fill="#127a2e"/></svg>
<div class="c" style="left:672.8px;width:61px;text-align:center;top:274.5px;transform:scaleX(0.91);">#VALUE!</div>
<svg style="position:absolute;left:734px;top:275px;" width="6" height="6" viewBox="0 0 6 6"><path d="M0 0 L5.5 0 L0 5.5z" fill="#127a2e"/></svg>
<div class="c" style="left:734.8px;width:61px;text-align:center;top:274.5px;transform:scaleX(0.91);">#VALUE!</div>
<svg style="position:absolute;left:796px;top:275px;" width="6" height="6" viewBox="0 0 6 6"><path d="M0 0 L5.5 0 L0 5.5z" fill="#127a2e"/></svg>
<div class="c" style="left:796.8px;width:61px;text-align:center;top:274.5px;transform:scaleX(0.91);">#VALUE!</div>
<svg style="position:absolute;left:858px;top:275px;" width="6" height="6" viewBox="0 0 6 6"><path d="M0 0 L5.5 0 L0 5.5z" fill="#127a2e"/></svg>
<div class="c" style="left:858.8px;width:61px;text-align:center;top:274.5px;transform:scaleX(0.91);">#VALUE!</div>
<svg style="position:absolute;left:920px;top:275px;" width="6" height="6" viewBox="0 0 6 6"><path d="M0 0 L5.5 0 L0 5.5z" fill="#127a2e"/></svg>
<div class="c" style="left:920.8px;width:61px;text-align:center;top:274.5px;transform:scaleX(0.91);">#VALUE!</div>
<svg style="position:absolute;left:982px;top:275px;" width="6" height="6" viewBox="0 0 6 6"><path d="M0 0 L5.5 0 L0 5.5z" fill="#127a2e"/></svg>
<div class="c" style="left:982.8px;width:61px;text-align:center;top:274.5px;transform:scaleX(0.91);">#VALUE!</div>
<svg style="position:absolute;left:1044px;top:275px;" width="6" height="6" viewBox="0 0 6 6"><path d="M0 0 L5.5 0 L0 5.5z" fill="#127a2e"/></svg>
<div class="c" style="left:1044.8px;width:61px;text-align:center;top:274.5px;transform:scaleX(0.91);">#VALUE!</div>
<svg style="position:absolute;left:1106px;top:275px;" width="6" height="6" viewBox="0 0 6 6"><path d="M0 0 L5.5 0 L0 5.5z" fill="#127a2e"/></svg>
<div class="c" style="left:1106.8px;width:61px;text-align:center;top:274.5px;transform:scaleX(0.91);">#VALUE!</div>
<svg style="position:absolute;left:1168px;top:275px;" width="6" height="6" viewBox="0 0 6 6"><path d="M0 0 L5.5 0 L0 5.5z" fill="#127a2e"/></svg>
<div class="c" style="left:1168.8px;width:61px;text-align:center;top:274.5px;transform:scaleX(0.91);">#VALUE!</div>
<svg style="position:absolute;left:1230px;top:275px;" width="6" height="6" viewBox="0 0 6 6"><path d="M0 0 L5.5 0 L0 5.5z" fill="#127a2e"/></svg>
<div class="c" style="left:1230.8px;width:61px;text-align:center;top:274.5px;transform:scaleX(0.91);">#VALUE!</div>
<svg style="position:absolute;left:423px;top:287px;" width="6" height="6" viewBox="0 0 6 6"><path d="M0 0 L5.5 0 L0 5.5z" fill="#127a2e"/></svg>
<div class="c" style="left:423.8px;width:62px;text-align:center;top:286.5px;transform:scaleX(0.91);">#VALUE!</div>
<svg style="position:absolute;left:486px;top:287px;" width="6" height="6" viewBox="0 0 6 6"><path d="M0 0 L5.5 0 L0 5.5z" fill="#127a2e"/></svg>
<div class="c" style="left:486.8px;width:61px;text-align:center;top:286.5px;transform:scaleX(0.91);">#VALUE!</div>
<svg style="position:absolute;left:548px;top:287px;" width="6" height="6" viewBox="0 0 6 6"><path d="M0 0 L5.5 0 L0 5.5z" fill="#127a2e"/></svg>
<div class="c" style="left:548.8px;width:61px;text-align:center;top:286.5px;transform:scaleX(0.91);">#VALUE!</div>
<svg style="position:absolute;left:610px;top:287px;" width="6" height="6" viewBox="0 0 6 6"><path d="M0 0 L5.5 0 L0 5.5z" fill="#127a2e"/></svg>
<div class="c" style="left:610.8px;width:61px;text-align:center;top:286.5px;transform:scaleX(0.91);">#VALUE!</div>
<svg style="position:absolute;left:672px;top:287px;" width="6" height="6" viewBox="0 0 6 6"><path d="M0 0 L5.5 0 L0 5.5z" fill="#127a2e"/></svg>
<div class="c" style="left:672.8px;width:61px;text-align:center;top:286.5px;transform:scaleX(0.91);">#VALUE!</div>
<svg style="position:absolute;left:734px;top:287px;" width="6" height="6" viewBox="0 0 6 6"><path d="M0 0 L5.5 0 L0 5.5z" fill="#127a2e"/></svg>
<div class="c" style="left:734.8px;width:61px;text-align:center;top:286.5px;transform:scaleX(0.91);">#VALUE!</div>
<svg style="position:absolute;left:796px;top:287px;" width="6" height="6" viewBox="0 0 6 6"><path d="M0 0 L5.5 0 L0 5.5z" fill="#127a2e"/></svg>
<div class="c" style="left:796.8px;width:61px;text-align:center;top:286.5px;transform:scaleX(0.91);">#VALUE!</div>
<svg style="position:absolute;left:858px;top:287px;" width="6" height="6" viewBox="0 0 6 6"><path d="M0 0 L5.5 0 L0 5.5z" fill="#127a2e"/></svg>
<div class="c" style="left:858.8px;width:61px;text-align:center;top:286.5px;transform:scaleX(0.91);">#VALUE!</div>
<svg style="position:absolute;left:920px;top:287px;" width="6" height="6" viewBox="0 0 6 6"><path d="M0 0 L5.5 0 L0 5.5z" fill="#127a2e"/></svg>
<div class="c" style="left:920.8px;width:61px;text-align:center;top:286.5px;transform:scaleX(0.91);">#VALUE!</div>
<svg style="position:absolute;left:982px;top:287px;" width="6" height="6" viewBox="0 0 6 6"><path d="M0 0 L5.5 0 L0 5.5z" fill="#127a2e"/></svg>
<div class="c" style="left:982.8px;width:61px;text-align:center;top:286.5px;transform:scaleX(0.91);">#VALUE!</div>
<svg style="position:absolute;left:1044px;top:287px;" width="6" height="6" viewBox="0 0 6 6"><path d="M0 0 L5.5 0 L0 5.5z" fill="#127a2e"/></svg>
<div class="c" style="left:1044.8px;width:61px;text-align:center;top:286.5px;transform:scaleX(0.91);">#VALUE!</div>
<svg style="position:absolute;left:1106px;top:287px;" width="6" height="6" viewBox="0 0 6 6"><path d="M0 0 L5.5 0 L0 5.5z" fill="#127a2e"/></svg>
<div class="c" style="left:1106.8px;width:61px;text-align:center;top:286.5px;transform:scaleX(0.91);">#VALUE!</div>
<svg style="position:absolute;left:1168px;top:287px;" width="6" height="6" viewBox="0 0 6 6"><path d="M0 0 L5.5 0 L0 5.5z" fill="#127a2e"/></svg>
<div class="c" style="left:1168.8px;width:61px;text-align:center;top:286.5px;transform:scaleX(0.91);">#VALUE!</div>
<svg style="position:absolute;left:1230px;top:287px;" width="6" height="6" viewBox="0 0 6 6"><path d="M0 0 L5.5 0 L0 5.5z" fill="#127a2e"/></svg>
<div class="c" style="left:1230.8px;width:61px;text-align:center;top:286.5px;transform:scaleX(0.91);">#VALUE!</div>
<svg style="position:absolute;left:423px;top:311px;" width="6" height="6" viewBox="0 0 6 6"><path d="M0 0 L5.5 0 L0 5.5z" fill="#127a2e"/></svg>
<div class="c" style="left:423.8px;width:62px;text-align:center;top:310.5px;transform:scaleX(0.91);">#VALUE!</div>
<svg style="position:absolute;left:486px;top:311px;" width="6" height="6" viewBox="0 0 6 6"><path d="M0 0 L5.5 0 L0 5.5z" fill="#127a2e"/></svg>
<div class="c" style="left:486.8px;width:61px;text-align:center;top:310.5px;transform:scaleX(0.91);">#VALUE!</div>
<svg style="position:absolute;left:548px;top:311px;" width="6" height="6" viewBox="0 0 6 6"><path d="M0 0 L5.5 0 L0 5.5z" fill="#127a2e"/></svg>
<div class="c" style="left:548.8px;width:61px;text-align:center;top:310.5px;transform:scaleX(0.91);">#VALUE!</div>
<svg style="position:absolute;left:610px;top:311px;" width="6" height="6" viewBox="0 0 6 6"><path d="M0 0 L5.5 0 L0 5.5z" fill="#127a2e"/></svg>
<div class="c" style="left:610.8px;width:61px;text-align:center;top:310.5px;transform:scaleX(0.91);">#VALUE!</div>
<svg style="position:absolute;left:672px;top:311px;" width="6" height="6" viewBox="0 0 6 6"><path d="M0 0 L5.5 0 L0 5.5z" fill="#127a2e"/></svg>
<div class="c" style="left:672.8px;width:61px;text-align:center;top:310.5px;transform:scaleX(0.91);">#VALUE!</div>
<svg style="position:absolute;left:734px;top:311px;" width="6" height="6" viewBox="0 0 6 6"><path d="M0 0 L5.5 0 L0 5.5z" fill="#127a2e"/></svg>
<div class="c" style="left:734.8px;width:61px;text-align:center;top:310.5px;transform:scaleX(0.91);">#VALUE!</div>
<svg style="position:absolute;left:796px;top:311px;" width="6" height="6" viewBox="0 0 6 6"><path d="M0 0 L5.5 0 L0 5.5z" fill="#127a2e"/></svg>
<div class="c" style="left:796.8px;width:61px;text-align:center;top:310.5px;transform:scaleX(0.91);">#VALUE!</div>
<svg style="position:absolute;left:858px;top:311px;" width="6" height="6" viewBox="0 0 6 6"><path d="M0 0 L5.5 0 L0 5.5z" fill="#127a2e"/></svg>
<div class="c" style="left:858.8px;width:61px;text-align:center;top:310.5px;transform:scaleX(0.91);">#VALUE!</div>
<svg style="position:absolute;left:920px;top:311px;" width="6" height="6" viewBox="0 0 6 6"><path d="M0 0 L5.5 0 L0 5.5z" fill="#127a2e"/></svg>
<div class="c" style="left:920.8px;width:61px;text-align:center;top:310.5px;transform:scaleX(0.91);">#VALUE!</div>
<svg style="position:absolute;left:982px;top:311px;" width="6" height="6" viewBox="0 0 6 6"><path d="M0 0 L5.5 0 L0 5.5z" fill="#127a2e"/></svg>
<div class="c" style="left:982.8px;width:61px;text-align:center;top:310.5px;transform:scaleX(0.91);">#VALUE!</div>
<svg style="position:absolute;left:1044px;top:311px;" width="6" height="6" viewBox="0 0 6 6"><path d="M0 0 L5.5 0 L0 5.5z" fill="#127a2e"/></svg>
<div class="c" style="left:1044.8px;width:61px;text-align:center;top:310.5px;transform:scaleX(0.91);">#VALUE!</div>
<svg style="position:absolute;left:1106px;top:311px;" width="6" height="6" viewBox="0 0 6 6"><path d="M0 0 L5.5 0 L0 5.5z" fill="#127a2e"/></svg>
<div class="c" style="left:1106.8px;width:61px;text-align:center;top:310.5px;transform:scaleX(0.91);">#VALUE!</div>
<svg style="position:absolute;left:1168px;top:311px;" width="6" height="6" viewBox="0 0 6 6"><path d="M0 0 L5.5 0 L0 5.5z" fill="#127a2e"/></svg>
<div class="c" style="left:1168.8px;width:61px;text-align:center;top:310.5px;transform:scaleX(0.91);">#VALUE!</div>
<svg style="position:absolute;left:1230px;top:311px;" width="6" height="6" viewBox="0 0 6 6"><path d="M0 0 L5.5 0 L0 5.5z" fill="#127a2e"/></svg>
<div class="c" style="left:1230.8px;width:61px;text-align:center;top:310.5px;transform:scaleX(0.91);">#VALUE!</div>
<svg style="position:absolute;left:423px;top:348px;" width="6" height="6" viewBox="0 0 6 6"><path d="M0 0 L5.5 0 L0 5.5z" fill="#127a2e"/></svg>
<div class="c" style="left:423.8px;width:62px;text-align:center;top:347.5px;transform:scaleX(0.91);">#VALUE!</div>
<svg style="position:absolute;left:486px;top:348px;" width="6" height="6" viewBox="0 0 6 6"><path d="M0 0 L5.5 0 L0 5.5z" fill="#127a2e"/></svg>
<div class="c" style="left:486.8px;width:61px;text-align:center;top:347.5px;transform:scaleX(0.91);">#VALUE!</div>
<svg style="position:absolute;left:548px;top:348px;" width="6" height="6" viewBox="0 0 6 6"><path d="M0 0 L5.5 0 L0 5.5z" fill="#127a2e"/></svg>
<div class="c" style="left:548.8px;width:61px;text-align:center;top:347.5px;transform:scaleX(0.91);">#VALUE!</div>
<svg style="position:absolute;left:610px;top:348px;" width="6" height="6" viewBox="0 0 6 6"><path d="M0 0 L5.5 0 L0 5.5z" fill="#127a2e"/></svg>
<div class="c" style="left:610.8px;width:61px;text-align:center;top:347.5px;transform:scaleX(0.91);">#VALUE!</div>
<svg style="position:absolute;left:672px;top:348px;" width="6" height="6" viewBox="0 0 6 6"><path d="M0 0 L5.5 0 L0 5.5z" fill="#127a2e"/></svg>
<div class="c" style="left:672.8px;width:61px;text-align:center;top:347.5px;transform:scaleX(0.91);">#VALUE!</div>
<svg style="position:absolute;left:734px;top:348px;" width="6" height="6" viewBox="0 0 6 6"><path d="M0 0 L5.5 0 L0 5.5z" fill="#127a2e"/></svg>
<div class="c" style="left:734.8px;width:61px;text-align:center;top:347.5px;transform:scaleX(0.91);">#VALUE!</div>
<svg style="position:absolute;left:796px;top:348px;" width="6" height="6" viewBox="0 0 6 6"><path d="M0 0 L5.5 0 L0 5.5z" fill="#127a2e"/></svg>
<div class="c" style="left:796.8px;width:61px;text-align:center;top:347.5px;transform:scaleX(0.91);">#VALUE!</div>
<svg style="position:absolute;left:858px;top:348px;" width="6" height="6" viewBox="0 0 6 6"><path d="M0 0 L5.5 0 L0 5.5z" fill="#127a2e"/></svg>
<div class="c" style="left:858.8px;width:61px;text-align:center;top:347.5px;transform:scaleX(0.91);">#VALUE!</div>
<svg style="position:absolute;left:920px;top:348px;" width="6" height="6" viewBox="0 0 6 6"><path d="M0 0 L5.5 0 L0 5.5z" fill="#127a2e"/></svg>
<div class="c" style="left:920.8px;width:61px;text-align:center;top:347.5px;transform:scaleX(0.91);">#VALUE!</div>
<svg style="position:absolute;left:982px;top:348px;" width="6" height="6" viewBox="0 0 6 6"><path d="M0 0 L5.5 0 L0 5.5z" fill="#127a2e"/></svg>
<div class="c" style="left:982.8px;width:61px;text-align:center;top:347.5px;transform:scaleX(0.91);">#VALUE!</div>
<svg style="position:absolute;left:1044px;top:348px;" width="6" height="6" viewBox="0 0 6 6"><path d="M0 0 L5.5 0 L0 5.5z" fill="#127a2e"/></svg>
<div class="c" style="left:1044.8px;width:61px;text-align:center;top:347.5px;transform:scaleX(0.91);">#VALUE!</div>
<svg style="position:absolute;left:1106px;top:348px;" width="6" height="6" viewBox="0 0 6 6"><path d="M0 0 L5.5 0 L0 5.5z" fill="#127a2e"/></svg>
<div class="c" style="left:1106.8px;width:61px;text-align:center;top:347.5px;transform:scaleX(0.91);">#VALUE!</div>
<svg style="position:absolute;left:1168px;top:348px;" width="6" height="6" viewBox="0 0 6 6"><path d="M0 0 L5.5 0 L0 5.5z" fill="#127a2e"/></svg>
<div class="c" style="left:1168.8px;width:61px;text-align:center;top:347.5px;transform:scaleX(0.91);">#VALUE!</div>
<svg style="position:absolute;left:1230px;top:348px;" width="6" height="6" viewBox="0 0 6 6"><path d="M0 0 L5.5 0 L0 5.5z" fill="#127a2e"/></svg>
<div class="c" style="left:1230.8px;width:61px;text-align:center;top:347.5px;transform:scaleX(0.91);">#VALUE!</div>
<svg style="position:absolute;left:423px;top:360px;" width="6" height="6" viewBox="0 0 6 6"><path d="M0 0 L5.5 0 L0 5.5z" fill="#127a2e"/></svg>
<div class="c" style="left:423.8px;width:62px;text-align:center;top:359.5px;transform:scaleX(0.91);">#VALUE!</div>
<svg style="position:absolute;left:486px;top:360px;" width="6" height="6" viewBox="0 0 6 6"><path d="M0 0 L5.5 0 L0 5.5z" fill="#127a2e"/></svg>
<div class="c" style="left:486.8px;width:61px;text-align:center;top:359.5px;transform:scaleX(0.91);">#VALUE!</div>
<svg style="position:absolute;left:548px;top:360px;" width="6" height="6" viewBox="0 0 6 6"><path d="M0 0 L5.5 0 L0 5.5z" fill="#127a2e"/></svg>
<div class="c" style="left:548.8px;width:61px;text-align:center;top:359.5px;transform:scaleX(0.91);">#VALUE!</div>
<svg style="position:absolute;left:610px;top:360px;" width="6" height="6" viewBox="0 0 6 6"><path d="M0 0 L5.5 0 L0 5.5z" fill="#127a2e"/></svg>
<div class="c" style="left:610.8px;width:61px;text-align:center;top:359.5px;transform:scaleX(0.91);">#VALUE!</div>
<svg style="position:absolute;left:672px;top:360px;" width="6" height="6" viewBox="0 0 6 6"><path d="M0 0 L5.5 0 L0 5.5z" fill="#127a2e"/></svg>
<div class="c" style="left:672.8px;width:61px;text-align:center;top:359.5px;transform:scaleX(0.91);">#VALUE!</div>
<svg style="position:absolute;left:734px;top:360px;" width="6" height="6" viewBox="0 0 6 6"><path d="M0 0 L5.5 0 L0 5.5z" fill="#127a2e"/></svg>
<div class="c" style="left:734.8px;width:61px;text-align:center;top:359.5px;transform:scaleX(0.91);">#VALUE!</div>
<svg style="position:absolute;left:796px;top:360px;" width="6" height="6" viewBox="0 0 6 6"><path d="M0 0 L5.5 0 L0 5.5z" fill="#127a2e"/></svg>
<div class="c" style="left:796.8px;width:61px;text-align:center;top:359.5px;transform:scaleX(0.91);">#VALUE!</div>
<svg style="position:absolute;left:858px;top:360px;" width="6" height="6" viewBox="0 0 6 6"><path d="M0 0 L5.5 0 L0 5.5z" fill="#127a2e"/></svg>
<div class="c" style="left:858.8px;width:61px;text-align:center;top:359.5px;transform:scaleX(0.91);">#VALUE!</div>
<svg style="position:absolute;left:920px;top:360px;" width="6" height="6" viewBox="0 0 6 6"><path d="M0 0 L5.5 0 L0 5.5z" fill="#127a2e"/></svg>
<div class="c" style="left:920.8px;width:61px;text-align:center;top:359.5px;transform:scaleX(0.91);">#VALUE!</div>
<svg style="position:absolute;left:982px;top:360px;" width="6" height="6" viewBox="0 0 6 6"><path d="M0 0 L5.5 0 L0 5.5z" fill="#127a2e"/></svg>
<div class="c" style="left:982.8px;width:61px;text-align:center;top:359.5px;transform:scaleX(0.91);">#VALUE!</div>
<svg style="position:absolute;left:1044px;top:360px;" width="6" height="6" viewBox="0 0 6 6"><path d="M0 0 L5.5 0 L0 5.5z" fill="#127a2e"/></svg>
<div class="c" style="left:1044.8px;width:61px;text-align:center;top:359.5px;transform:scaleX(0.91);">#VALUE!</div>
<svg style="position:absolute;left:1106px;top:360px;" width="6" height="6" viewBox="0 0 6 6"><path d="M0 0 L5.5 0 L0 5.5z" fill="#127a2e"/></svg>
<div class="c" style="left:1106.8px;width:61px;text-align:center;top:359.5px;transform:scaleX(0.91);">#VALUE!</div>
<svg style="position:absolute;left:1168px;top:360px;" width="6" height="6" viewBox="0 0 6 6"><path d="M0 0 L5.5 0 L0 5.5z" fill="#127a2e"/></svg>
<div class="c" style="left:1168.8px;width:61px;text-align:center;top:359.5px;transform:scaleX(0.91);">#VALUE!</div>
<svg style="position:absolute;left:1230px;top:360px;" width="6" height="6" viewBox="0 0 6 6"><path d="M0 0 L5.5 0 L0 5.5z" fill="#127a2e"/></svg>
<div class="c" style="left:1230.8px;width:61px;text-align:center;top:359.5px;transform:scaleX(0.91);">#VALUE!</div>
<svg style="position:absolute;left:423px;top:372px;" width="6" height="6" viewBox="0 0 6 6"><path d="M0 0 L5.5 0 L0 5.5z" fill="#127a2e"/></svg>
<div class="c" style="left:423.8px;width:62px;text-align:center;top:371.5px;transform:scaleX(0.91);">#VALUE!</div>
<svg style="position:absolute;left:486px;top:372px;" width="6" height="6" viewBox="0 0 6 6"><path d="M0 0 L5.5 0 L0 5.5z" fill="#127a2e"/></svg>
<div class="c" style="left:486.8px;width:61px;text-align:center;top:371.5px;transform:scaleX(0.91);">#VALUE!</div>
<svg style="position:absolute;left:548px;top:372px;" width="6" height="6" viewBox="0 0 6 6"><path d="M0 0 L5.5 0 L0 5.5z" fill="#127a2e"/></svg>
<div class="c" style="left:548.8px;width:61px;text-align:center;top:371.5px;transform:scaleX(0.91);">#VALUE!</div>
<svg style="position:absolute;left:610px;top:372px;" width="6" height="6" viewBox="0 0 6 6"><path d="M0 0 L5.5 0 L0 5.5z" fill="#127a2e"/></svg>
<div class="c" style="left:610.8px;width:61px;text-align:center;top:371.5px;transform:scaleX(0.91);">#VALUE!</div>
<svg style="position:absolute;left:672px;top:372px;" width="6" height="6" viewBox="0 0 6 6"><path d="M0 0 L5.5 0 L0 5.5z" fill="#127a2e"/></svg>
<div class="c" style="left:672.8px;width:61px;text-align:center;top:371.5px;transform:scaleX(0.91);">#VALUE!</div>
<svg style="position:absolute;left:734px;top:372px;" width="6" height="6" viewBox="0 0 6 6"><path d="M0 0 L5.5 0 L0 5.5z" fill="#127a2e"/></svg>
<div class="c" style="left:734.8px;width:61px;text-align:center;top:371.5px;transform:scaleX(0.91);">#VALUE!</div>
<svg style="position:absolute;left:796px;top:372px;" width="6" height="6" viewBox="0 0 6 6"><path d="M0 0 L5.5 0 L0 5.5z" fill="#127a2e"/></svg>
<div class="c" style="left:796.8px;width:61px;text-align:center;top:371.5px;transform:scaleX(0.91);">#VALUE!</div>
<svg style="position:absolute;left:858px;top:372px;" width="6" height="6" viewBox="0 0 6 6"><path d="M0 0 L5.5 0 L0 5.5z" fill="#127a2e"/></svg>
<div class="c" style="left:858.8px;width:61px;text-align:center;top:371.5px;transform:scaleX(0.91);">#VALUE!</div>
<svg style="position:absolute;left:920px;top:372px;" width="6" height="6" viewBox="0 0 6 6"><path d="M0 0 L5.5 0 L0 5.5z" fill="#127a2e"/></svg>
<div class="c" style="left:920.8px;width:61px;text-align:center;top:371.5px;transform:scaleX(0.91);">#VALUE!</div>
<svg style="position:absolute;left:982px;top:372px;" width="6" height="6" viewBox="0 0 6 6"><path d="M0 0 L5.5 0 L0 5.5z" fill="#127a2e"/></svg>
<div class="c" style="left:982.8px;width:61px;text-align:center;top:371.5px;transform:scaleX(0.91);">#VALUE!</div>
<svg style="position:absolute;left:1044px;top:372px;" width="6" height="6" viewBox="0 0 6 6"><path d="M0 0 L5.5 0 L0 5.5z" fill="#127a2e"/></svg>
<div class="c" style="left:1044.8px;width:61px;text-align:center;top:371.5px;transform:scaleX(0.91);">#VALUE!</div>
<svg style="position:absolute;left:1106px;top:372px;" width="6" height="6" viewBox="0 0 6 6"><path d="M0 0 L5.5 0 L0 5.5z" fill="#127a2e"/></svg>
<div class="c" style="left:1106.8px;width:61px;text-align:center;top:371.5px;transform:scaleX(0.91);">#VALUE!</div>
<svg style="position:absolute;left:1168px;top:372px;" width="6" height="6" viewBox="0 0 6 6"><path d="M0 0 L5.5 0 L0 5.5z" fill="#127a2e"/></svg>
<div class="c" style="left:1168.8px;width:61px;text-align:center;top:371.5px;transform:scaleX(0.91);">#VALUE!</div>
<svg style="position:absolute;left:1230px;top:372px;" width="6" height="6" viewBox="0 0 6 6"><path d="M0 0 L5.5 0 L0 5.5z" fill="#127a2e"/></svg>
<div class="c" style="left:1230.8px;width:61px;text-align:center;top:371.5px;transform:scaleX(0.91);">#VALUE!</div>
<svg style="position:absolute;left:423px;top:384px;" width="6" height="6" viewBox="0 0 6 6"><path d="M0 0 L5.5 0 L0 5.5z" fill="#127a2e"/></svg>
<div class="c" style="left:423.8px;width:62px;text-align:center;top:383.5px;transform:scaleX(0.91);">#VALUE!</div>
<svg style="position:absolute;left:486px;top:384px;" width="6" height="6" viewBox="0 0 6 6"><path d="M0 0 L5.5 0 L0 5.5z" fill="#127a2e"/></svg>
<div class="c" style="left:486.8px;width:61px;text-align:center;top:383.5px;transform:scaleX(0.91);">#VALUE!</div>
<svg style="position:absolute;left:548px;top:384px;" width="6" height="6" viewBox="0 0 6 6"><path d="M0 0 L5.5 0 L0 5.5z" fill="#127a2e"/></svg>
<div class="c" style="left:548.8px;width:61px;text-align:center;top:383.5px;transform:scaleX(0.91);">#VALUE!</div>
<svg style="position:absolute;left:610px;top:384px;" width="6" height="6" viewBox="0 0 6 6"><path d="M0 0 L5.5 0 L0 5.5z" fill="#127a2e"/></svg>
<div class="c" style="left:610.8px;width:61px;text-align:center;top:383.5px;transform:scaleX(0.91);">#VALUE!</div>
<svg style="position:absolute;left:672px;top:384px;" width="6" height="6" viewBox="0 0 6 6"><path d="M0 0 L5.5 0 L0 5.5z" fill="#127a2e"/></svg>
<div class="c" style="left:672.8px;width:61px;text-align:center;top:383.5px;transform:scaleX(0.91);">#VALUE!</div>
<svg style="position:absolute;left:734px;top:384px;" width="6" height="6" viewBox="0 0 6 6"><path d="M0 0 L5.5 0 L0 5.5z" fill="#127a2e"/></svg>
<div class="c" style="left:734.8px;width:61px;text-align:center;top:383.5px;transform:scaleX(0.91);">#VALUE!</div>
<svg style="position:absolute;left:796px;top:384px;" width="6" height="6" viewBox="0 0 6 6"><path d="M0 0 L5.5 0 L0 5.5z" fill="#127a2e"/></svg>
<div class="c" style="left:796.8px;width:61px;text-align:center;top:383.5px;transform:scaleX(0.91);">#VALUE!</div>
<svg style="position:absolute;left:858px;top:384px;" width="6" height="6" viewBox="0 0 6 6"><path d="M0 0 L5.5 0 L0 5.5z" fill="#127a2e"/></svg>
<div class="c" style="left:858.8px;width:61px;text-align:center;top:383.5px;transform:scaleX(0.91);">#VALUE!</div>
<svg style="position:absolute;left:920px;top:384px;" width="6" height="6" viewBox="0 0 6 6"><path d="M0 0 L5.5 0 L0 5.5z" fill="#127a2e"/></svg>
<div class="c" style="left:920.8px;width:61px;text-align:center;top:383.5px;transform:scaleX(0.91);">#VALUE!</div>
<svg style="position:absolute;left:982px;top:384px;" width="6" height="6" viewBox="0 0 6 6"><path d="M0 0 L5.5 0 L0 5.5z" fill="#127a2e"/></svg>
<div class="c" style="left:982.8px;width:61px;text-align:center;top:383.5px;transform:scaleX(0.91);">#VALUE!</div>
<svg style="position:absolute;left:1044px;top:384px;" width="6" height="6" viewBox="0 0 6 6"><path d="M0 0 L5.5 0 L0 5.5z" fill="#127a2e"/></svg>
<div class="c" style="left:1044.8px;width:61px;text-align:center;top:383.5px;transform:scaleX(0.91);">#VALUE!</div>
<svg style="position:absolute;left:1106px;top:384px;" width="6" height="6" viewBox="0 0 6 6"><path d="M0 0 L5.5 0 L0 5.5z" fill="#127a2e"/></svg>
<div class="c" style="left:1106.8px;width:61px;text-align:center;top:383.5px;transform:scaleX(0.91);">#VALUE!</div>
<svg style="position:absolute;left:1168px;top:384px;" width="6" height="6" viewBox="0 0 6 6"><path d="M0 0 L5.5 0 L0 5.5z" fill="#127a2e"/></svg>
<div class="c" style="left:1168.8px;width:61px;text-align:center;top:383.5px;transform:scaleX(0.91);">#VALUE!</div>
<svg style="position:absolute;left:1230px;top:384px;" width="6" height="6" viewBox="0 0 6 6"><path d="M0 0 L5.5 0 L0 5.5z" fill="#127a2e"/></svg>
<div class="c" style="left:1230.8px;width:61px;text-align:center;top:383.5px;transform:scaleX(0.91);">#VALUE!</div>
<svg style="position:absolute;left:423px;top:396px;" width="6" height="6" viewBox="0 0 6 6"><path d="M0 0 L5.5 0 L0 5.5z" fill="#127a2e"/></svg>
<div class="c" style="left:423.8px;width:62px;text-align:center;top:395.5px;transform:scaleX(0.91);">#VALUE!</div>
<svg style="position:absolute;left:486px;top:396px;" width="6" height="6" viewBox="0 0 6 6"><path d="M0 0 L5.5 0 L0 5.5z" fill="#127a2e"/></svg>
<div class="c" style="left:486.8px;width:61px;text-align:center;top:395.5px;transform:scaleX(0.91);">#VALUE!</div>
<svg style="position:absolute;left:548px;top:396px;" width="6" height="6" viewBox="0 0 6 6"><path d="M0 0 L5.5 0 L0 5.5z" fill="#127a2e"/></svg>
<div class="c" style="left:548.8px;width:61px;text-align:center;top:395.5px;transform:scaleX(0.91);">#VALUE!</div>
<svg style="position:absolute;left:610px;top:396px;" width="6" height="6" viewBox="0 0 6 6"><path d="M0 0 L5.5 0 L0 5.5z" fill="#127a2e"/></svg>
<div class="c" style="left:610.8px;width:61px;text-align:center;top:395.5px;transform:scaleX(0.91);">#VALUE!</div>
<svg style="position:absolute;left:672px;top:396px;" width="6" height="6" viewBox="0 0 6 6"><path d="M0 0 L5.5 0 L0 5.5z" fill="#127a2e"/></svg>
<div class="c" style="left:672.8px;width:61px;text-align:center;top:395.5px;transform:scaleX(0.91);">#VALUE!</div>
<svg style="position:absolute;left:734px;top:396px;" width="6" height="6" viewBox="0 0 6 6"><path d="M0 0 L5.5 0 L0 5.5z" fill="#127a2e"/></svg>
<div class="c" style="left:734.8px;width:61px;text-align:center;top:395.5px;transform:scaleX(0.91);">#VALUE!</div>
<svg style="position:absolute;left:796px;top:396px;" width="6" height="6" viewBox="0 0 6 6"><path d="M0 0 L5.5 0 L0 5.5z" fill="#127a2e"/></svg>
<div class="c" style="left:796.8px;width:61px;text-align:center;top:395.5px;transform:scaleX(0.91);">#VALUE!</div>
<svg style="position:absolute;left:858px;top:396px;" width="6" height="6" viewBox="0 0 6 6"><path d="M0 0 L5.5 0 L0 5.5z" fill="#127a2e"/></svg>
<div class="c" style="left:858.8px;width:61px;text-align:center;top:395.5px;transform:scaleX(0.91);">#VALUE!</div>
<svg style="position:absolute;left:920px;top:396px;" width="6" height="6" viewBox="0 0 6 6"><path d="M0 0 L5.5 0 L0 5.5z" fill="#127a2e"/></svg>
<div class="c" style="left:920.8px;width:61px;text-align:center;top:395.5px;transform:scaleX(0.91);">#VALUE!</div>
<svg style="position:absolute;left:982px;top:396px;" width="6" height="6" viewBox="0 0 6 6"><path d="M0 0 L5.5 0 L0 5.5z" fill="#127a2e"/></svg>
<div class="c" style="left:982.8px;width:61px;text-align:center;top:395.5px;transform:scaleX(0.91);">#VALUE!</div>
<svg style="position:absolute;left:1044px;top:396px;" width="6" height="6" viewBox="0 0 6 6"><path d="M0 0 L5.5 0 L0 5.5z" fill="#127a2e"/></svg>
<div class="c" style="left:1044.8px;width:61px;text-align:center;top:395.5px;transform:scaleX(0.91);">#VALUE!</div>
<svg style="position:absolute;left:1106px;top:396px;" width="6" height="6" viewBox="0 0 6 6"><path d="M0 0 L5.5 0 L0 5.5z" fill="#127a2e"/></svg>
<div class="c" style="left:1106.8px;width:61px;text-align:center;top:395.5px;transform:scaleX(0.91);">#VALUE!</div>
<svg style="position:absolute;left:1168px;top:396px;" width="6" height="6" viewBox="0 0 6 6"><path d="M0 0 L5.5 0 L0 5.5z" fill="#127a2e"/></svg>
<div class="c" style="left:1168.8px;width:61px;text-align:center;top:395.5px;transform:scaleX(0.91);">#VALUE!</div>
<svg style="position:absolute;left:1230px;top:396px;" width="6" height="6" viewBox="0 0 6 6"><path d="M0 0 L5.5 0 L0 5.5z" fill="#127a2e"/></svg>
<div class="c" style="left:1230.8px;width:61px;text-align:center;top:395.5px;transform:scaleX(0.91);">#VALUE!</div>
<svg style="position:absolute;left:423px;top:433px;" width="6" height="6" viewBox="0 0 6 6"><path d="M0 0 L5.5 0 L0 5.5z" fill="#127a2e"/></svg>
<div class="c" style="left:423.8px;width:62px;text-align:center;top:432.5px;transform:scaleX(0.91);">#VALUE!</div>
<svg style="position:absolute;left:486px;top:433px;" width="6" height="6" viewBox="0 0 6 6"><path d="M0 0 L5.5 0 L0 5.5z" fill="#127a2e"/></svg>
<div class="c" style="left:486.8px;width:61px;text-align:center;top:432.5px;transform:scaleX(0.91);">#VALUE!</div>
<svg style="position:absolute;left:548px;top:433px;" width="6" height="6" viewBox="0 0 6 6"><path d="M0 0 L5.5 0 L0 5.5z" fill="#127a2e"/></svg>
<div class="c" style="left:548.8px;width:61px;text-align:center;top:432.5px;transform:scaleX(0.91);">#VALUE!</div>
<svg style="position:absolute;left:610px;top:433px;" width="6" height="6" viewBox="0 0 6 6"><path d="M0 0 L5.5 0 L0 5.5z" fill="#127a2e"/></svg>
<div class="c" style="left:610.8px;width:61px;text-align:center;top:432.5px;transform:scaleX(0.91);">#VALUE!</div>
<svg style="position:absolute;left:672px;top:433px;" width="6" height="6" viewBox="0 0 6 6"><path d="M0 0 L5.5 0 L0 5.5z" fill="#127a2e"/></svg>
<div class="c" style="left:672.8px;width:61px;text-align:center;top:432.5px;transform:scaleX(0.91);">#VALUE!</div>
<svg style="position:absolute;left:734px;top:433px;" width="6" height="6" viewBox="0 0 6 6"><path d="M0 0 L5.5 0 L0 5.5z" fill="#127a2e"/></svg>
<div class="c" style="left:734.8px;width:61px;text-align:center;top:432.5px;transform:scaleX(0.91);">#VALUE!</div>
<svg style="position:absolute;left:796px;top:433px;" width="6" height="6" viewBox="0 0 6 6"><path d="M0 0 L5.5 0 L0 5.5z" fill="#127a2e"/></svg>
<div class="c" style="left:796.8px;width:61px;text-align:center;top:432.5px;transform:scaleX(0.91);">#VALUE!</div>
<svg style="position:absolute;left:858px;top:433px;" width="6" height="6" viewBox="0 0 6 6"><path d="M0 0 L5.5 0 L0 5.5z" fill="#127a2e"/></svg>
<div class="c" style="left:858.8px;width:61px;text-align:center;top:432.5px;transform:scaleX(0.91);">#VALUE!</div>
<svg style="position:absolute;left:920px;top:433px;" width="6" height="6" viewBox="0 0 6 6"><path d="M0 0 L5.5 0 L0 5.5z" fill="#127a2e"/></svg>
<div class="c" style="left:920.8px;width:61px;text-align:center;top:432.5px;transform:scaleX(0.91);">#VALUE!</div>
<svg style="position:absolute;left:982px;top:433px;" width="6" height="6" viewBox="0 0 6 6"><path d="M0 0 L5.5 0 L0 5.5z" fill="#127a2e"/></svg>
<div class="c" style="left:982.8px;width:61px;text-align:center;top:432.5px;transform:scaleX(0.91);">#VALUE!</div>
<svg style="position:absolute;left:1044px;top:433px;" width="6" height="6" viewBox="0 0 6 6"><path d="M0 0 L5.5 0 L0 5.5z" fill="#127a2e"/></svg>
<div class="c" style="left:1044.8px;width:61px;text-align:center;top:432.5px;transform:scaleX(0.91);">#VALUE!</div>
<svg style="position:absolute;left:1106px;top:433px;" width="6" height="6" viewBox="0 0 6 6"><path d="M0 0 L5.5 0 L0 5.5z" fill="#127a2e"/></svg>
<div class="c" style="left:1106.8px;width:61px;text-align:center;top:432.5px;transform:scaleX(0.91);">#VALUE!</div>
<svg style="position:absolute;left:1168px;top:433px;" width="6" height="6" viewBox="0 0 6 6"><path d="M0 0 L5.5 0 L0 5.5z" fill="#127a2e"/></svg>
<div class="c" style="left:1168.8px;width:61px;text-align:center;top:432.5px;transform:scaleX(0.91);">#VALUE!</div>
<svg style="position:absolute;left:1230px;top:433px;" width="6" height="6" viewBox="0 0 6 6"><path d="M0 0 L5.5 0 L0 5.5z" fill="#127a2e"/></svg>
<div class="c" style="left:1230.8px;width:61px;text-align:center;top:432.5px;transform:scaleX(0.91);">#VALUE!</div>
<svg style="position:absolute;left:423px;top:445px;" width="6" height="6" viewBox="0 0 6 6"><path d="M0 0 L5.5 0 L0 5.5z" fill="#127a2e"/></svg>
<div class="c" style="left:423.8px;width:62px;text-align:center;top:444.5px;transform:scaleX(0.91);">#VALUE!</div>
<svg style="position:absolute;left:486px;top:445px;" width="6" height="6" viewBox="0 0 6 6"><path d="M0 0 L5.5 0 L0 5.5z" fill="#127a2e"/></svg>
<div class="c" style="left:486.8px;width:61px;text-align:center;top:444.5px;transform:scaleX(0.91);">#VALUE!</div>
<svg style="position:absolute;left:548px;top:445px;" width="6" height="6" viewBox="0 0 6 6"><path d="M0 0 L5.5 0 L0 5.5z" fill="#127a2e"/></svg>
<div class="c" style="left:548.8px;width:61px;text-align:center;top:444.5px;transform:scaleX(0.91);">#VALUE!</div>
<svg style="position:absolute;left:610px;top:445px;" width="6" height="6" viewBox="0 0 6 6"><path d="M0 0 L5.5 0 L0 5.5z" fill="#127a2e"/></svg>
<div class="c" style="left:610.8px;width:61px;text-align:center;top:444.5px;transform:scaleX(0.91);">#VALUE!</div>
<svg style="position:absolute;left:672px;top:445px;" width="6" height="6" viewBox="0 0 6 6"><path d="M0 0 L5.5 0 L0 5.5z" fill="#127a2e"/></svg>
<div class="c" style="left:672.8px;width:61px;text-align:center;top:444.5px;transform:scaleX(0.91);">#VALUE!</div>
<svg style="position:absolute;left:734px;top:445px;" width="6" height="6" viewBox="0 0 6 6"><path d="M0 0 L5.5 0 L0 5.5z" fill="#127a2e"/></svg>
<div class="c" style="left:734.8px;width:61px;text-align:center;top:444.5px;transform:scaleX(0.91);">#VALUE!</div>
<svg style="position:absolute;left:796px;top:445px;" width="6" height="6" viewBox="0 0 6 6"><path d="M0 0 L5.5 0 L0 5.5z" fill="#127a2e"/></svg>
<div class="c" style="left:796.8px;width:61px;text-align:center;top:444.5px;transform:scaleX(0.91);">#VALUE!</div>
<svg style="position:absolute;left:858px;top:445px;" width="6" height="6" viewBox="0 0 6 6"><path d="M0 0 L5.5 0 L0 5.5z" fill="#127a2e"/></svg>
<div class="c" style="left:858.8px;width:61px;text-align:center;top:444.5px;transform:scaleX(0.91);">#VALUE!</div>
<svg style="position:absolute;left:920px;top:445px;" width="6" height="6" viewBox="0 0 6 6"><path d="M0 0 L5.5 0 L0 5.5z" fill="#127a2e"/></svg>
<div class="c" style="left:920.8px;width:61px;text-align:center;top:444.5px;transform:scaleX(0.91);">#VALUE!</div>
<svg style="position:absolute;left:982px;top:445px;" width="6" height="6" viewBox="0 0 6 6"><path d="M0 0 L5.5 0 L0 5.5z" fill="#127a2e"/></svg>
<div class="c" style="left:982.8px;width:61px;text-align:center;top:444.5px;transform:scaleX(0.91);">#VALUE!</div>
<svg style="position:absolute;left:1044px;top:445px;" width="6" height="6" viewBox="0 0 6 6"><path d="M0 0 L5.5 0 L0 5.5z" fill="#127a2e"/></svg>
<div class="c" style="left:1044.8px;width:61px;text-align:center;top:444.5px;transform:scaleX(0.91);">#VALUE!</div>
<svg style="position:absolute;left:1106px;top:445px;" width="6" height="6" viewBox="0 0 6 6"><path d="M0 0 L5.5 0 L0 5.5z" fill="#127a2e"/></svg>
<div class="c" style="left:1106.8px;width:61px;text-align:center;top:444.5px;transform:scaleX(0.91);">#VALUE!</div>
<svg style="position:absolute;left:1168px;top:445px;" width="6" height="6" viewBox="0 0 6 6"><path d="M0 0 L5.5 0 L0 5.5z" fill="#127a2e"/></svg>
<div class="c" style="left:1168.8px;width:61px;text-align:center;top:444.5px;transform:scaleX(0.91);">#VALUE!</div>
<svg style="position:absolute;left:1230px;top:445px;" width="6" height="6" viewBox="0 0 6 6"><path d="M0 0 L5.5 0 L0 5.5z" fill="#127a2e"/></svg>
<div class="c" style="left:1230.8px;width:61px;text-align:center;top:444.5px;transform:scaleX(0.91);">#VALUE!</div>
<svg style="position:absolute;left:423px;top:457px;" width="6" height="6" viewBox="0 0 6 6"><path d="M0 0 L5.5 0 L0 5.5z" fill="#127a2e"/></svg>
<div class="c" style="left:423.8px;width:62px;text-align:center;top:456.5px;transform:scaleX(0.91);">#VALUE!</div>
<svg style="position:absolute;left:486px;top:457px;" width="6" height="6" viewBox="0 0 6 6"><path d="M0 0 L5.5 0 L0 5.5z" fill="#127a2e"/></svg>
<div class="c" style="left:486.8px;width:61px;text-align:center;top:456.5px;transform:scaleX(0.91);">#VALUE!</div>
<svg style="position:absolute;left:548px;top:457px;" width="6" height="6" viewBox="0 0 6 6"><path d="M0 0 L5.5 0 L0 5.5z" fill="#127a2e"/></svg>
<div class="c" style="left:548.8px;width:61px;text-align:center;top:456.5px;transform:scaleX(0.91);">#VALUE!</div>
<svg style="position:absolute;left:610px;top:457px;" width="6" height="6" viewBox="0 0 6 6"><path d="M0 0 L5.5 0 L0 5.5z" fill="#127a2e"/></svg>
<div class="c" style="left:610.8px;width:61px;text-align:center;top:456.5px;transform:scaleX(0.91);">#VALUE!</div>
<svg style="position:absolute;left:672px;top:457px;" width="6" height="6" viewBox="0 0 6 6"><path d="M0 0 L5.5 0 L0 5.5z" fill="#127a2e"/></svg>
<div class="c" style="left:672.8px;width:61px;text-align:center;top:456.5px;transform:scaleX(0.91);">#VALUE!</div>
<svg style="position:absolute;left:734px;top:457px;" width="6" height="6" viewBox="0 0 6 6"><path d="M0 0 L5.5 0 L0 5.5z" fill="#127a2e"/></svg>
<div class="c" style="left:734.8px;width:61px;text-align:center;top:456.5px;transform:scaleX(0.91);">#VALUE!</div>
<svg style="position:absolute;left:796px;top:457px;" width="6" height="6" viewBox="0 0 6 6"><path d="M0 0 L5.5 0 L0 5.5z" fill="#127a2e"/></svg>
<div class="c" style="left:796.8px;width:61px;text-align:center;top:456.5px;transform:scaleX(0.91);">#VALUE!</div>
<svg style="position:absolute;left:858px;top:457px;" width="6" height="6" viewBox="0 0 6 6"><path d="M0 0 L5.5 0 L0 5.5z" fill="#127a2e"/></svg>
<div class="c" style="left:858.8px;width:61px;text-align:center;top:456.5px;transform:scaleX(0.91);">#VALUE!</div>
<svg style="position:absolute;left:920px;top:457px;" width="6" height="6" viewBox="0 0 6 6"><path d="M0 0 L5.5 0 L0 5.5z" fill="#127a2e"/></svg>
<div class="c" style="left:920.8px;width:61px;text-align:center;top:456.5px;transform:scaleX(0.91);">#VALUE!</div>
<svg style="position:absolute;left:982px;top:457px;" width="6" height="6" viewBox="0 0 6 6"><path d="M0 0 L5.5 0 L0 5.5z" fill="#127a2e"/></svg>
<div class="c" style="left:982.8px;width:61px;text-align:center;top:456.5px;transform:scaleX(0.91);">#VALUE!</div>
<svg style="position:absolute;left:1044px;top:457px;" width="6" height="6" viewBox="0 0 6 6"><path d="M0 0 L5.5 0 L0 5.5z" fill="#127a2e"/></svg>
<div class="c" style="left:1044.8px;width:61px;text-align:center;top:456.5px;transform:scaleX(0.91);">#VALUE!</div>
<svg style="position:absolute;left:1106px;top:457px;" width="6" height="6" viewBox="0 0 6 6"><path d="M0 0 L5.5 0 L0 5.5z" fill="#127a2e"/></svg>
<div class="c" style="left:1106.8px;width:61px;text-align:center;top:456.5px;transform:scaleX(0.91);">#VALUE!</div>
<svg style="position:absolute;left:1168px;top:457px;" width="6" height="6" viewBox="0 0 6 6"><path d="M0 0 L5.5 0 L0 5.5z" fill="#127a2e"/></svg>
<div class="c" style="left:1168.8px;width:61px;text-align:center;top:456.5px;transform:scaleX(0.91);">#VALUE!</div>
<svg style="position:absolute;left:1230px;top:457px;" width="6" height="6" viewBox="0 0 6 6"><path d="M0 0 L5.5 0 L0 5.5z" fill="#127a2e"/></svg>
<div class="c" style="left:1230.8px;width:61px;text-align:center;top:456.5px;transform:scaleX(0.91);">#VALUE!</div>
<svg style="position:absolute;left:423px;top:469px;" width="6" height="6" viewBox="0 0 6 6"><path d="M0 0 L5.5 0 L0 5.5z" fill="#127a2e"/></svg>
<div class="c" style="left:423.8px;width:62px;text-align:center;top:468.5px;transform:scaleX(0.91);">#VALUE!</div>
<svg style="position:absolute;left:486px;top:469px;" width="6" height="6" viewBox="0 0 6 6"><path d="M0 0 L5.5 0 L0 5.5z" fill="#127a2e"/></svg>
<div class="c" style="left:486.8px;width:61px;text-align:center;top:468.5px;transform:scaleX(0.91);">#VALUE!</div>
<svg style="position:absolute;left:548px;top:469px;" width="6" height="6" viewBox="0 0 6 6"><path d="M0 0 L5.5 0 L0 5.5z" fill="#127a2e"/></svg>
<div class="c" style="left:548.8px;width:61px;text-align:center;top:468.5px;transform:scaleX(0.91);">#VALUE!</div>
<svg style="position:absolute;left:610px;top:469px;" width="6" height="6" viewBox="0 0 6 6"><path d="M0 0 L5.5 0 L0 5.5z" fill="#127a2e"/></svg>
<div class="c" style="left:610.8px;width:61px;text-align:center;top:468.5px;transform:scaleX(0.91);">#VALUE!</div>
<svg style="position:absolute;left:672px;top:469px;" width="6" height="6" viewBox="0 0 6 6"><path d="M0 0 L5.5 0 L0 5.5z" fill="#127a2e"/></svg>
<div class="c" style="left:672.8px;width:61px;text-align:center;top:468.5px;transform:scaleX(0.91);">#VALUE!</div>
<svg style="position:absolute;left:734px;top:469px;" width="6" height="6" viewBox="0 0 6 6"><path d="M0 0 L5.5 0 L0 5.5z" fill="#127a2e"/></svg>
<div class="c" style="left:734.8px;width:61px;text-align:center;top:468.5px;transform:scaleX(0.91);">#VALUE!</div>
<svg style="position:absolute;left:796px;top:469px;" width="6" height="6" viewBox="0 0 6 6"><path d="M0 0 L5.5 0 L0 5.5z" fill="#127a2e"/></svg>
<div class="c" style="left:796.8px;width:61px;text-align:center;top:468.5px;transform:scaleX(0.91);">#VALUE!</div>
<svg style="position:absolute;left:858px;top:469px;" width="6" height="6" viewBox="0 0 6 6"><path d="M0 0 L5.5 0 L0 5.5z" fill="#127a2e"/></svg>
<div class="c" style="left:858.8px;width:61px;text-align:center;top:468.5px;transform:scaleX(0.91);">#VALUE!</div>
<svg style="position:absolute;left:920px;top:469px;" width="6" height="6" viewBox="0 0 6 6"><path d="M0 0 L5.5 0 L0 5.5z" fill="#127a2e"/></svg>
<div class="c" style="left:920.8px;width:61px;text-align:center;top:468.5px;transform:scaleX(0.91);">#VALUE!</div>
<svg style="position:absolute;left:982px;top:469px;" width="6" height="6" viewBox="0 0 6 6"><path d="M0 0 L5.5 0 L0 5.5z" fill="#127a2e"/></svg>
<div class="c" style="left:982.8px;width:61px;text-align:center;top:468.5px;transform:scaleX(0.91);">#VALUE!</div>
<svg style="position:absolute;left:1044px;top:469px;" width="6" height="6" viewBox="0 0 6 6"><path d="M0 0 L5.5 0 L0 5.5z" fill="#127a2e"/></svg>
<div class="c" style="left:1044.8px;width:61px;text-align:center;top:468.5px;transform:scaleX(0.91);">#VALUE!</div>
<svg style="position:absolute;left:1106px;top:469px;" width="6" height="6" viewBox="0 0 6 6"><path d="M0 0 L5.5 0 L0 5.5z" fill="#127a2e"/></svg>
<div class="c" style="left:1106.8px;width:61px;text-align:center;top:468.5px;transform:scaleX(0.91);">#VALUE!</div>
<svg style="position:absolute;left:1168px;top:469px;" width="6" height="6" viewBox="0 0 6 6"><path d="M0 0 L5.5 0 L0 5.5z" fill="#127a2e"/></svg>
<div class="c" style="left:1168.8px;width:61px;text-align:center;top:468.5px;transform:scaleX(0.91);">#VALUE!</div>
<svg style="position:absolute;left:1230px;top:469px;" width="6" height="6" viewBox="0 0 6 6"><path d="M0 0 L5.5 0 L0 5.5z" fill="#127a2e"/></svg>
<div class="c" style="left:1230.8px;width:61px;text-align:center;top:468.5px;transform:scaleX(0.91);">#VALUE!</div>
<svg style="position:absolute;left:423px;top:482px;" width="6" height="6" viewBox="0 0 6 6"><path d="M0 0 L5.5 0 L0 5.5z" fill="#127a2e"/></svg>
<div class="c" style="left:423.8px;width:62px;text-align:center;top:481.5px;transform:scaleX(0.91);">#VALUE!</div>
<svg style="position:absolute;left:486px;top:482px;" width="6" height="6" viewBox="0 0 6 6"><path d="M0 0 L5.5 0 L0 5.5z" fill="#127a2e"/></svg>
<div class="c" style="left:486.8px;width:61px;text-align:center;top:481.5px;transform:scaleX(0.91);">#VALUE!</div>
<svg style="position:absolute;left:548px;top:482px;" width="6" height="6" viewBox="0 0 6 6"><path d="M0 0 L5.5 0 L0 5.5z" fill="#127a2e"/></svg>
<div class="c" style="left:548.8px;width:61px;text-align:center;top:481.5px;transform:scaleX(0.91);">#VALUE!</div>
<svg style="position:absolute;left:610px;top:482px;" width="6" height="6" viewBox="0 0 6 6"><path d="M0 0 L5.5 0 L0 5.5z" fill="#127a2e"/></svg>
<div class="c" style="left:610.8px;width:61px;text-align:center;top:481.5px;transform:scaleX(0.91);">#VALUE!</div>
<svg style="position:absolute;left:672px;top:482px;" width="6" height="6" viewBox="0 0 6 6"><path d="M0 0 L5.5 0 L0 5.5z" fill="#127a2e"/></svg>
<div class="c" style="left:672.8px;width:61px;text-align:center;top:481.5px;transform:scaleX(0.91);">#VALUE!</div>
<svg style="position:absolute;left:734px;top:482px;" width="6" height="6" viewBox="0 0 6 6"><path d="M0 0 L5.5 0 L0 5.5z" fill="#127a2e"/></svg>
<div class="c" style="left:734.8px;width:61px;text-align:center;top:481.5px;transform:scaleX(0.91);">#VALUE!</div>
<svg style="position:absolute;left:796px;top:482px;" width="6" height="6" viewBox="0 0 6 6"><path d="M0 0 L5.5 0 L0 5.5z" fill="#127a2e"/></svg>
<div class="c" style="left:796.8px;width:61px;text-align:center;top:481.5px;transform:scaleX(0.91);">#VALUE!</div>
<svg style="position:absolute;left:858px;top:482px;" width="6" height="6" viewBox="0 0 6 6"><path d="M0 0 L5.5 0 L0 5.5z" fill="#127a2e"/></svg>
<div class="c" style="left:858.8px;width:61px;text-align:center;top:481.5px;transform:scaleX(0.91);">#VALUE!</div>
<svg style="position:absolute;left:920px;top:482px;" width="6" height="6" viewBox="0 0 6 6"><path d="M0 0 L5.5 0 L0 5.5z" fill="#127a2e"/></svg>
<div class="c" style="left:920.8px;width:61px;text-align:center;top:481.5px;transform:scaleX(0.91);">#VALUE!</div>
<svg style="position:absolute;left:982px;top:482px;" width="6" height="6" viewBox="0 0 6 6"><path d="M0 0 L5.5 0 L0 5.5z" fill="#127a2e"/></svg>
<div class="c" style="left:982.8px;width:61px;text-align:center;top:481.5px;transform:scaleX(0.91);">#VALUE!</div>
<svg style="position:absolute;left:1044px;top:482px;" width="6" height="6" viewBox="0 0 6 6"><path d="M0 0 L5.5 0 L0 5.5z" fill="#127a2e"/></svg>
<div class="c" style="left:1044.8px;width:61px;text-align:center;top:481.5px;transform:scaleX(0.91);">#VALUE!</div>
<svg style="position:absolute;left:1106px;top:482px;" width="6" height="6" viewBox="0 0 6 6"><path d="M0 0 L5.5 0 L0 5.5z" fill="#127a2e"/></svg>
<div class="c" style="left:1106.8px;width:61px;text-align:center;top:481.5px;transform:scaleX(0.91);">#VALUE!</div>
<svg style="position:absolute;left:1168px;top:482px;" width="6" height="6" viewBox="0 0 6 6"><path d="M0 0 L5.5 0 L0 5.5z" fill="#127a2e"/></svg>
<div class="c" style="left:1168.8px;width:61px;text-align:center;top:481.5px;transform:scaleX(0.91);">#VALUE!</div>
<svg style="position:absolute;left:1230px;top:482px;" width="6" height="6" viewBox="0 0 6 6"><path d="M0 0 L5.5 0 L0 5.5z" fill="#127a2e"/></svg>
<div class="c" style="left:1230.8px;width:61px;text-align:center;top:481.5px;transform:scaleX(0.91);">#VALUE!</div>
<svg style="position:absolute;left:423px;top:494px;" width="6" height="6" viewBox="0 0 6 6"><path d="M0 0 L5.5 0 L0 5.5z" fill="#127a2e"/></svg>
<div class="c" style="left:423.8px;width:62px;text-align:center;top:493.5px;transform:scaleX(0.91);">#VALUE!</div>
<svg style="position:absolute;left:486px;top:494px;" width="6" height="6" viewBox="0 0 6 6"><path d="M0 0 L5.5 0 L0 5.5z" fill="#127a2e"/></svg>
<div class="c" style="left:486.8px;width:61px;text-align:center;top:493.5px;transform:scaleX(0.91);">#VALUE!</div>
<svg style="position:absolute;left:548px;top:494px;" width="6" height="6" viewBox="0 0 6 6"><path d="M0 0 L5.5 0 L0 5.5z" fill="#127a2e"/></svg>
<div class="c" style="left:548.8px;width:61px;text-align:center;top:493.5px;transform:scaleX(0.91);">#VALUE!</div>
<svg style="position:absolute;left:610px;top:494px;" width="6" height="6" viewBox="0 0 6 6"><path d="M0 0 L5.5 0 L0 5.5z" fill="#127a2e"/></svg>
<div class="c" style="left:610.8px;width:61px;text-align:center;top:493.5px;transform:scaleX(0.91);">#VALUE!</div>
<svg style="position:absolute;left:672px;top:494px;" width="6" height="6" viewBox="0 0 6 6"><path d="M0 0 L5.5 0 L0 5.5z" fill="#127a2e"/></svg>
<div class="c" style="left:672.8px;width:61px;text-align:center;top:493.5px;transform:scaleX(0.91);">#VALUE!</div>
<svg style="position:absolute;left:734px;top:494px;" width="6" height="6" viewBox="0 0 6 6"><path d="M0 0 L5.5 0 L0 5.5z" fill="#127a2e"/></svg>
<div class="c" style="left:734.8px;width:61px;text-align:center;top:493.5px;transform:scaleX(0.91);">#VALUE!</div>
<svg style="position:absolute;left:796px;top:494px;" width="6" height="6" viewBox="0 0 6 6"><path d="M0 0 L5.5 0 L0 5.5z" fill="#127a2e"/></svg>
<div class="c" style="left:796.8px;width:61px;text-align:center;top:493.5px;transform:scaleX(0.91);">#VALUE!</div>
<svg style="position:absolute;left:858px;top:494px;" width="6" height="6" viewBox="0 0 6 6"><path d="M0 0 L5.5 0 L0 5.5z" fill="#127a2e"/></svg>
<div class="c" style="left:858.8px;width:61px;text-align:center;top:493.5px;transform:scaleX(0.91);">#VALUE!</div>
<svg style="position:absolute;left:920px;top:494px;" width="6" height="6" viewBox="0 0 6 6"><path d="M0 0 L5.5 0 L0 5.5z" fill="#127a2e"/></svg>
<div class="c" style="left:920.8px;width:61px;text-align:center;top:493.5px;transform:scaleX(0.91);">#VALUE!</div>
<svg style="position:absolute;left:982px;top:494px;" width="6" height="6" viewBox="0 0 6 6"><path d="M0 0 L5.5 0 L0 5.5z" fill="#127a2e"/></svg>
<div class="c" style="left:982.8px;width:61px;text-align:center;top:493.5px;transform:scaleX(0.91);">#VALUE!</div>
<svg style="position:absolute;left:1044px;top:494px;" width="6" height="6" viewBox="0 0 6 6"><path d="M0 0 L5.5 0 L0 5.5z" fill="#127a2e"/></svg>
<div class="c" style="left:1044.8px;width:61px;text-align:center;top:493.5px;transform:scaleX(0.91);">#VALUE!</div>
<svg style="position:absolute;left:1106px;top:494px;" width="6" height="6" viewBox="0 0 6 6"><path d="M0 0 L5.5 0 L0 5.5z" fill="#127a2e"/></svg>
<div class="c" style="left:1106.8px;width:61px;text-align:center;top:493.5px;transform:scaleX(0.91);">#VALUE!</div>
<svg style="position:absolute;left:1168px;top:494px;" width="6" height="6" viewBox="0 0 6 6"><path d="M0 0 L5.5 0 L0 5.5z" fill="#127a2e"/></svg>
<div class="c" style="left:1168.8px;width:61px;text-align:center;top:493.5px;transform:scaleX(0.91);">#VALUE!</div>
<svg style="position:absolute;left:1230px;top:494px;" width="6" height="6" viewBox="0 0 6 6"><path d="M0 0 L5.5 0 L0 5.5z" fill="#127a2e"/></svg>
<div class="c" style="left:1230.8px;width:61px;text-align:center;top:493.5px;transform:scaleX(0.91);">#VALUE!</div>
<svg style="position:absolute;left:423px;top:506px;" width="6" height="6" viewBox="0 0 6 6"><path d="M0 0 L5.5 0 L0 5.5z" fill="#127a2e"/></svg>
<div class="c" style="left:423.8px;width:62px;text-align:center;top:505.5px;transform:scaleX(0.91);">#VALUE!</div>
<svg style="position:absolute;left:486px;top:506px;" width="6" height="6" viewBox="0 0 6 6"><path d="M0 0 L5.5 0 L0 5.5z" fill="#127a2e"/></svg>
<div class="c" style="left:486.8px;width:61px;text-align:center;top:505.5px;transform:scaleX(0.91);">#VALUE!</div>
<svg style="position:absolute;left:548px;top:506px;" width="6" height="6" viewBox="0 0 6 6"><path d="M0 0 L5.5 0 L0 5.5z" fill="#127a2e"/></svg>
<div class="c" style="left:548.8px;width:61px;text-align:center;top:505.5px;transform:scaleX(0.91);">#VALUE!</div>
<svg style="position:absolute;left:610px;top:506px;" width="6" height="6" viewBox="0 0 6 6"><path d="M0 0 L5.5 0 L0 5.5z" fill="#127a2e"/></svg>
<div class="c" style="left:610.8px;width:61px;text-align:center;top:505.5px;transform:scaleX(0.91);">#VALUE!</div>
<svg style="position:absolute;left:672px;top:506px;" width="6" height="6" viewBox="0 0 6 6"><path d="M0 0 L5.5 0 L0 5.5z" fill="#127a2e"/></svg>
<div class="c" style="left:672.8px;width:61px;text-align:center;top:505.5px;transform:scaleX(0.91);">#VALUE!</div>
<svg style="position:absolute;left:734px;top:506px;" width="6" height="6" viewBox="0 0 6 6"><path d="M0 0 L5.5 0 L0 5.5z" fill="#127a2e"/></svg>
<div class="c" style="left:734.8px;width:61px;text-align:center;top:505.5px;transform:scaleX(0.91);">#VALUE!</div>
<svg style="position:absolute;left:796px;top:506px;" width="6" height="6" viewBox="0 0 6 6"><path d="M0 0 L5.5 0 L0 5.5z" fill="#127a2e"/></svg>
<div class="c" style="left:796.8px;width:61px;text-align:center;top:505.5px;transform:scaleX(0.91);">#VALUE!</div>
<svg style="position:absolute;left:858px;top:506px;" width="6" height="6" viewBox="0 0 6 6"><path d="M0 0 L5.5 0 L0 5.5z" fill="#127a2e"/></svg>
<div class="c" style="left:858.8px;width:61px;text-align:center;top:505.5px;transform:scaleX(0.91);">#VALUE!</div>
<svg style="position:absolute;left:920px;top:506px;" width="6" height="6" viewBox="0 0 6 6"><path d="M0 0 L5.5 0 L0 5.5z" fill="#127a2e"/></svg>
<div class="c" style="left:920.8px;width:61px;text-align:center;top:505.5px;transform:scaleX(0.91);">#VALUE!</div>
<svg style="position:absolute;left:982px;top:506px;" width="6" height="6" viewBox="0 0 6 6"><path d="M0 0 L5.5 0 L0 5.5z" fill="#127a2e"/></svg>
<div class="c" style="left:982.8px;width:61px;text-align:center;top:505.5px;transform:scaleX(0.91);">#VALUE!</div>
<svg style="position:absolute;left:1044px;top:506px;" width="6" height="6" viewBox="0 0 6 6"><path d="M0 0 L5.5 0 L0 5.5z" fill="#127a2e"/></svg>
<div class="c" style="left:1044.8px;width:61px;text-align:center;top:505.5px;transform:scaleX(0.91);">#VALUE!</div>
<svg style="position:absolute;left:1106px;top:506px;" width="6" height="6" viewBox="0 0 6 6"><path d="M0 0 L5.5 0 L0 5.5z" fill="#127a2e"/></svg>
<div class="c" style="left:1106.8px;width:61px;text-align:center;top:505.5px;transform:scaleX(0.91);">#VALUE!</div>
<svg style="position:absolute;left:1168px;top:506px;" width="6" height="6" viewBox="0 0 6 6"><path d="M0 0 L5.5 0 L0 5.5z" fill="#127a2e"/></svg>
<div class="c" style="left:1168.8px;width:61px;text-align:center;top:505.5px;transform:scaleX(0.91);">#VALUE!</div>
<svg style="position:absolute;left:1230px;top:506px;" width="6" height="6" viewBox="0 0 6 6"><path d="M0 0 L5.5 0 L0 5.5z" fill="#127a2e"/></svg>
<div class="c" style="left:1230.8px;width:61px;text-align:center;top:505.5px;transform:scaleX(0.91);">#VALUE!</div>
<svg style="position:absolute;left:423px;top:518px;" width="6" height="6" viewBox="0 0 6 6"><path d="M0 0 L5.5 0 L0 5.5z" fill="#127a2e"/></svg>
<div class="c" style="left:423.8px;width:62px;text-align:center;top:517.5px;transform:scaleX(0.91);">#VALUE!</div>
<svg style="position:absolute;left:486px;top:518px;" width="6" height="6" viewBox="0 0 6 6"><path d="M0 0 L5.5 0 L0 5.5z" fill="#127a2e"/></svg>
<div class="c" style="left:486.8px;width:61px;text-align:center;top:517.5px;transform:scaleX(0.91);">#VALUE!</div>
<svg style="position:absolute;left:548px;top:518px;" width="6" height="6" viewBox="0 0 6 6"><path d="M0 0 L5.5 0 L0 5.5z" fill="#127a2e"/></svg>
<div class="c" style="left:548.8px;width:61px;text-align:center;top:517.5px;transform:scaleX(0.91);">#VALUE!</div>
<svg style="position:absolute;left:610px;top:518px;" width="6" height="6" viewBox="0 0 6 6"><path d="M0 0 L5.5 0 L0 5.5z" fill="#127a2e"/></svg>
<div class="c" style="left:610.8px;width:61px;text-align:center;top:517.5px;transform:scaleX(0.91);">#VALUE!</div>
<svg style="position:absolute;left:672px;top:518px;" width="6" height="6" viewBox="0 0 6 6"><path d="M0 0 L5.5 0 L0 5.5z" fill="#127a2e"/></svg>
<div class="c" style="left:672.8px;width:61px;text-align:center;top:517.5px;transform:scaleX(0.91);">#VALUE!</div>
<svg style="position:absolute;left:734px;top:518px;" width="6" height="6" viewBox="0 0 6 6"><path d="M0 0 L5.5 0 L0 5.5z" fill="#127a2e"/></svg>
<div class="c" style="left:734.8px;width:61px;text-align:center;top:517.5px;transform:scaleX(0.91);">#VALUE!</div>
<svg style="position:absolute;left:796px;top:518px;" width="6" height="6" viewBox="0 0 6 6"><path d="M0 0 L5.5 0 L0 5.5z" fill="#127a2e"/></svg>
<div class="c" style="left:796.8px;width:61px;text-align:center;top:517.5px;transform:scaleX(0.91);">#VALUE!</div>
<svg style="position:absolute;left:858px;top:518px;" width="6" height="6" viewBox="0 0 6 6"><path d="M0 0 L5.5 0 L0 5.5z" fill="#127a2e"/></svg>
<div class="c" style="left:858.8px;width:61px;text-align:center;top:517.5px;transform:scaleX(0.91);">#VALUE!</div>
<svg style="position:absolute;left:920px;top:518px;" width="6" height="6" viewBox="0 0 6 6"><path d="M0 0 L5.5 0 L0 5.5z" fill="#127a2e"/></svg>
<div class="c" style="left:920.8px;width:61px;text-align:center;top:517.5px;transform:scaleX(0.91);">#VALUE!</div>
<svg style="position:absolute;left:982px;top:518px;" width="6" height="6" viewBox="0 0 6 6"><path d="M0 0 L5.5 0 L0 5.5z" fill="#127a2e"/></svg>
<div class="c" style="left:982.8px;width:61px;text-align:center;top:517.5px;transform:scaleX(0.91);">#VALUE!</div>
<svg style="position:absolute;left:1044px;top:518px;" width="6" height="6" viewBox="0 0 6 6"><path d="M0 0 L5.5 0 L0 5.5z" fill="#127a2e"/></svg>
<div class="c" style="left:1044.8px;width:61px;text-align:center;top:517.5px;transform:scaleX(0.91);">#VALUE!</div>
<svg style="position:absolute;left:1106px;top:518px;" width="6" height="6" viewBox="0 0 6 6"><path d="M0 0 L5.5 0 L0 5.5z" fill="#127a2e"/></svg>
<div class="c" style="left:1106.8px;width:61px;text-align:center;top:517.5px;transform:scaleX(0.91);">#VALUE!</div>
<svg style="position:absolute;left:1168px;top:518px;" width="6" height="6" viewBox="0 0 6 6"><path d="M0 0 L5.5 0 L0 5.5z" fill="#127a2e"/></svg>
<div class="c" style="left:1168.8px;width:61px;text-align:center;top:517.5px;transform:scaleX(0.91);">#VALUE!</div>
<svg style="position:absolute;left:1230px;top:518px;" width="6" height="6" viewBox="0 0 6 6"><path d="M0 0 L5.5 0 L0 5.5z" fill="#127a2e"/></svg>
<div class="c" style="left:1230.8px;width:61px;text-align:center;top:517.5px;transform:scaleX(0.91);">#VALUE!</div>
<svg style="position:absolute;left:423px;top:531px;" width="6" height="6" viewBox="0 0 6 6"><path d="M0 0 L5.5 0 L0 5.5z" fill="#127a2e"/></svg>
<div class="c" style="left:423.8px;width:62px;text-align:center;top:530.5px;transform:scaleX(0.91);">#VALUE!</div>
<svg style="position:absolute;left:486px;top:531px;" width="6" height="6" viewBox="0 0 6 6"><path d="M0 0 L5.5 0 L0 5.5z" fill="#127a2e"/></svg>
<div class="c" style="left:486.8px;width:61px;text-align:center;top:530.5px;transform:scaleX(0.91);">#VALUE!</div>
<svg style="position:absolute;left:548px;top:531px;" width="6" height="6" viewBox="0 0 6 6"><path d="M0 0 L5.5 0 L0 5.5z" fill="#127a2e"/></svg>
<div class="c" style="left:548.8px;width:61px;text-align:center;top:530.5px;transform:scaleX(0.91);">#VALUE!</div>
<svg style="position:absolute;left:610px;top:531px;" width="6" height="6" viewBox="0 0 6 6"><path d="M0 0 L5.5 0 L0 5.5z" fill="#127a2e"/></svg>
<div class="c" style="left:610.8px;width:61px;text-align:center;top:530.5px;transform:scaleX(0.91);">#VALUE!</div>
<svg style="position:absolute;left:672px;top:531px;" width="6" height="6" viewBox="0 0 6 6"><path d="M0 0 L5.5 0 L0 5.5z" fill="#127a2e"/></svg>
<div class="c" style="left:672.8px;width:61px;text-align:center;top:530.5px;transform:scaleX(0.91);">#VALUE!</div>
<svg style="position:absolute;left:734px;top:531px;" width="6" height="6" viewBox="0 0 6 6"><path d="M0 0 L5.5 0 L0 5.5z" fill="#127a2e"/></svg>
<div class="c" style="left:734.8px;width:61px;text-align:center;top:530.5px;transform:scaleX(0.91);">#VALUE!</div>
<svg style="position:absolute;left:796px;top:531px;" width="6" height="6" viewBox="0 0 6 6"><path d="M0 0 L5.5 0 L0 5.5z" fill="#127a2e"/></svg>
<div class="c" style="left:796.8px;width:61px;text-align:center;top:530.5px;transform:scaleX(0.91);">#VALUE!</div>
<svg style="position:absolute;left:858px;top:531px;" width="6" height="6" viewBox="0 0 6 6"><path d="M0 0 L5.5 0 L0 5.5z" fill="#127a2e"/></svg>
<div class="c" style="left:858.8px;width:61px;text-align:center;top:530.5px;transform:scaleX(0.91);">#VALUE!</div>
<svg style="position:absolute;left:920px;top:531px;" width="6" height="6" viewBox="0 0 6 6"><path d="M0 0 L5.5 0 L0 5.5z" fill="#127a2e"/></svg>
<div class="c" style="left:920.8px;width:61px;text-align:center;top:530.5px;transform:scaleX(0.91);">#VALUE!</div>
<svg style="position:absolute;left:982px;top:531px;" width="6" height="6" viewBox="0 0 6 6"><path d="M0 0 L5.5 0 L0 5.5z" fill="#127a2e"/></svg>
<div class="c" style="left:982.8px;width:61px;text-align:center;top:530.5px;transform:scaleX(0.91);">#VALUE!</div>
<svg style="position:absolute;left:1044px;top:531px;" width="6" height="6" viewBox="0 0 6 6"><path d="M0 0 L5.5 0 L0 5.5z" fill="#127a2e"/></svg>
<div class="c" style="left:1044.8px;width:61px;text-align:center;top:530.5px;transform:scaleX(0.91);">#VALUE!</div>
<svg style="position:absolute;left:1106px;top:531px;" width="6" height="6" viewBox="0 0 6 6"><path d="M0 0 L5.5 0 L0 5.5z" fill="#127a2e"/></svg>
<div class="c" style="left:1106.8px;width:61px;text-align:center;top:530.5px;transform:scaleX(0.91);">#VALUE!</div>
<svg style="position:absolute;left:1168px;top:531px;" width="6" height="6" viewBox="0 0 6 6"><path d="M0 0 L5.5 0 L0 5.5z" fill="#127a2e"/></svg>
<div class="c" style="left:1168.8px;width:61px;text-align:center;top:530.5px;transform:scaleX(0.91);">#VALUE!</div>
<svg style="position:absolute;left:1230px;top:531px;" width="6" height="6" viewBox="0 0 6 6"><path d="M0 0 L5.5 0 L0 5.5z" fill="#127a2e"/></svg>
<div class="c" style="left:1230.8px;width:61px;text-align:center;top:530.5px;transform:scaleX(0.91);">#VALUE!</div>
<svg style="position:absolute;left:423px;top:543px;" width="6" height="6" viewBox="0 0 6 6"><path d="M0 0 L5.5 0 L0 5.5z" fill="#127a2e"/></svg>
<div class="c" style="left:423.8px;width:62px;text-align:center;top:542.5px;transform:scaleX(0.91);">#VALUE!</div>
<svg style="position:absolute;left:486px;top:543px;" width="6" height="6" viewBox="0 0 6 6"><path d="M0 0 L5.5 0 L0 5.5z" fill="#127a2e"/></svg>
<div class="c" style="left:486.8px;width:61px;text-align:center;top:542.5px;transform:scaleX(0.91);">#VALUE!</div>
<svg style="position:absolute;left:548px;top:543px;" width="6" height="6" viewBox="0 0 6 6"><path d="M0 0 L5.5 0 L0 5.5z" fill="#127a2e"/></svg>
<div class="c" style="left:548.8px;width:61px;text-align:center;top:542.5px;transform:scaleX(0.91);">#VALUE!</div>
<svg style="position:absolute;left:610px;top:543px;" width="6" height="6" viewBox="0 0 6 6"><path d="M0 0 L5.5 0 L0 5.5z" fill="#127a2e"/></svg>
<div class="c" style="left:610.8px;width:61px;text-align:center;top:542.5px;transform:scaleX(0.91);">#VALUE!</div>
<svg style="position:absolute;left:672px;top:543px;" width="6" height="6" viewBox="0 0 6 6"><path d="M0 0 L5.5 0 L0 5.5z" fill="#127a2e"/></svg>
<div class="c" style="left:672.8px;width:61px;text-align:center;top:542.5px;transform:scaleX(0.91);">#VALUE!</div>
<svg style="position:absolute;left:734px;top:543px;" width="6" height="6" viewBox="0 0 6 6"><path d="M0 0 L5.5 0 L0 5.5z" fill="#127a2e"/></svg>
<div class="c" style="left:734.8px;width:61px;text-align:center;top:542.5px;transform:scaleX(0.91);">#VALUE!</div>
<svg style="position:absolute;left:796px;top:543px;" width="6" height="6" viewBox="0 0 6 6"><path d="M0 0 L5.5 0 L0 5.5z" fill="#127a2e"/></svg>
<div class="c" style="left:796.8px;width:61px;text-align:center;top:542.5px;transform:scaleX(0.91);">#VALUE!</div>
<svg style="position:absolute;left:858px;top:543px;" width="6" height="6" viewBox="0 0 6 6"><path d="M0 0 L5.5 0 L0 5.5z" fill="#127a2e"/></svg>
<div class="c" style="left:858.8px;width:61px;text-align:center;top:542.5px;transform:scaleX(0.91);">#VALUE!</div>
<svg style="position:absolute;left:920px;top:543px;" width="6" height="6" viewBox="0 0 6 6"><path d="M0 0 L5.5 0 L0 5.5z" fill="#127a2e"/></svg>
<div class="c" style="left:920.8px;width:61px;text-align:center;top:542.5px;transform:scaleX(0.91);">#VALUE!</div>
<svg style="position:absolute;left:982px;top:543px;" width="6" height="6" viewBox="0 0 6 6"><path d="M0 0 L5.5 0 L0 5.5z" fill="#127a2e"/></svg>
<div class="c" style="left:982.8px;width:61px;text-align:center;top:542.5px;transform:scaleX(0.91);">#VALUE!</div>
<svg style="position:absolute;left:1044px;top:543px;" width="6" height="6" viewBox="0 0 6 6"><path d="M0 0 L5.5 0 L0 5.5z" fill="#127a2e"/></svg>
<div class="c" style="left:1044.8px;width:61px;text-align:center;top:542.5px;transform:scaleX(0.91);">#VALUE!</div>
<svg style="position:absolute;left:1106px;top:543px;" width="6" height="6" viewBox="0 0 6 6"><path d="M0 0 L5.5 0 L0 5.5z" fill="#127a2e"/></svg>
<div class="c" style="left:1106.8px;width:61px;text-align:center;top:542.5px;transform:scaleX(0.91);">#VALUE!</div>
<svg style="position:absolute;left:1168px;top:543px;" width="6" height="6" viewBox="0 0 6 6"><path d="M0 0 L5.5 0 L0 5.5z" fill="#127a2e"/></svg>
<div class="c" style="left:1168.8px;width:61px;text-align:center;top:542.5px;transform:scaleX(0.91);">#VALUE!</div>
<svg style="position:absolute;left:1230px;top:543px;" width="6" height="6" viewBox="0 0 6 6"><path d="M0 0 L5.5 0 L0 5.5z" fill="#127a2e"/></svg>
<div class="c" style="left:1230.8px;width:61px;text-align:center;top:542.5px;transform:scaleX(0.91);">#VALUE!</div>
<svg style="position:absolute;left:423px;top:555px;" width="6" height="6" viewBox="0 0 6 6"><path d="M0 0 L5.5 0 L0 5.5z" fill="#127a2e"/></svg>
<div class="c" style="left:423.8px;width:62px;text-align:center;top:554.5px;transform:scaleX(0.91);">#VALUE!</div>
<svg style="position:absolute;left:486px;top:555px;" width="6" height="6" viewBox="0 0 6 6"><path d="M0 0 L5.5 0 L0 5.5z" fill="#127a2e"/></svg>
<div class="c" style="left:486.8px;width:61px;text-align:center;top:554.5px;transform:scaleX(0.91);">#VALUE!</div>
<svg style="position:absolute;left:548px;top:555px;" width="6" height="6" viewBox="0 0 6 6"><path d="M0 0 L5.5 0 L0 5.5z" fill="#127a2e"/></svg>
<div class="c" style="left:548.8px;width:61px;text-align:center;top:554.5px;transform:scaleX(0.91);">#VALUE!</div>
<svg style="position:absolute;left:610px;top:555px;" width="6" height="6" viewBox="0 0 6 6"><path d="M0 0 L5.5 0 L0 5.5z" fill="#127a2e"/></svg>
<div class="c" style="left:610.8px;width:61px;text-align:center;top:554.5px;transform:scaleX(0.91);">#VALUE!</div>
<svg style="position:absolute;left:672px;top:555px;" width="6" height="6" viewBox="0 0 6 6"><path d="M0 0 L5.5 0 L0 5.5z" fill="#127a2e"/></svg>
<div class="c" style="left:672.8px;width:61px;text-align:center;top:554.5px;transform:scaleX(0.91);">#VALUE!</div>
<svg style="position:absolute;left:734px;top:555px;" width="6" height="6" viewBox="0 0 6 6"><path d="M0 0 L5.5 0 L0 5.5z" fill="#127a2e"/></svg>
<div class="c" style="left:734.8px;width:61px;text-align:center;top:554.5px;transform:scaleX(0.91);">#VALUE!</div>
<svg style="position:absolute;left:796px;top:555px;" width="6" height="6" viewBox="0 0 6 6"><path d="M0 0 L5.5 0 L0 5.5z" fill="#127a2e"/></svg>
<div class="c" style="left:796.8px;width:61px;text-align:center;top:554.5px;transform:scaleX(0.91);">#VALUE!</div>
<svg style="position:absolute;left:858px;top:555px;" width="6" height="6" viewBox="0 0 6 6"><path d="M0 0 L5.5 0 L0 5.5z" fill="#127a2e"/></svg>
<div class="c" style="left:858.8px;width:61px;text-align:center;top:554.5px;transform:scaleX(0.91);">#VALUE!</div>
<svg style="position:absolute;left:920px;top:555px;" width="6" height="6" viewBox="0 0 6 6"><path d="M0 0 L5.5 0 L0 5.5z" fill="#127a2e"/></svg>
<div class="c" style="left:920.8px;width:61px;text-align:center;top:554.5px;transform:scaleX(0.91);">#VALUE!</div>
<svg style="position:absolute;left:982px;top:555px;" width="6" height="6" viewBox="0 0 6 6"><path d="M0 0 L5.5 0 L0 5.5z" fill="#127a2e"/></svg>
<div class="c" style="left:982.8px;width:61px;text-align:center;top:554.5px;transform:scaleX(0.91);">#VALUE!</div>
<svg style="position:absolute;left:1044px;top:555px;" width="6" height="6" viewBox="0 0 6 6"><path d="M0 0 L5.5 0 L0 5.5z" fill="#127a2e"/></svg>
<div class="c" style="left:1044.8px;width:61px;text-align:center;top:554.5px;transform:scaleX(0.91);">#VALUE!</div>
<svg style="position:absolute;left:1106px;top:555px;" width="6" height="6" viewBox="0 0 6 6"><path d="M0 0 L5.5 0 L0 5.5z" fill="#127a2e"/></svg>
<div class="c" style="left:1106.8px;width:61px;text-align:center;top:554.5px;transform:scaleX(0.91);">#VALUE!</div>
<svg style="position:absolute;left:1168px;top:555px;" width="6" height="6" viewBox="0 0 6 6"><path d="M0 0 L5.5 0 L0 5.5z" fill="#127a2e"/></svg>
<div class="c" style="left:1168.8px;width:61px;text-align:center;top:554.5px;transform:scaleX(0.91);">#VALUE!</div>
<svg style="position:absolute;left:1230px;top:555px;" width="6" height="6" viewBox="0 0 6 6"><path d="M0 0 L5.5 0 L0 5.5z" fill="#127a2e"/></svg>
<div class="c" style="left:1230.8px;width:61px;text-align:center;top:554.5px;transform:scaleX(0.91);">#VALUE!</div>
<svg style="position:absolute;left:423px;top:568px;" width="6" height="6" viewBox="0 0 6 6"><path d="M0 0 L5.5 0 L0 5.5z" fill="#127a2e"/></svg>
<div class="c" style="left:423.8px;width:62px;text-align:center;top:567.5px;transform:scaleX(0.91);">#VALUE!</div>
<svg style="position:absolute;left:486px;top:568px;" width="6" height="6" viewBox="0 0 6 6"><path d="M0 0 L5.5 0 L0 5.5z" fill="#127a2e"/></svg>
<div class="c" style="left:486.8px;width:61px;text-align:center;top:567.5px;transform:scaleX(0.91);">#VALUE!</div>
<svg style="position:absolute;left:548px;top:568px;" width="6" height="6" viewBox="0 0 6 6"><path d="M0 0 L5.5 0 L0 5.5z" fill="#127a2e"/></svg>
<div class="c" style="left:548.8px;width:61px;text-align:center;top:567.5px;transform:scaleX(0.91);">#VALUE!</div>
<svg style="position:absolute;left:610px;top:568px;" width="6" height="6" viewBox="0 0 6 6"><path d="M0 0 L5.5 0 L0 5.5z" fill="#127a2e"/></svg>
<div class="c" style="left:610.8px;width:61px;text-align:center;top:567.5px;transform:scaleX(0.91);">#VALUE!</div>
<svg style="position:absolute;left:672px;top:568px;" width="6" height="6" viewBox="0 0 6 6"><path d="M0 0 L5.5 0 L0 5.5z" fill="#127a2e"/></svg>
<div class="c" style="left:672.8px;width:61px;text-align:center;top:567.5px;transform:scaleX(0.91);">#VALUE!</div>
<svg style="position:absolute;left:734px;top:568px;" width="6" height="6" viewBox="0 0 6 6"><path d="M0 0 L5.5 0 L0 5.5z" fill="#127a2e"/></svg>
<div class="c" style="left:734.8px;width:61px;text-align:center;top:567.5px;transform:scaleX(0.91);">#VALUE!</div>
<svg style="position:absolute;left:796px;top:568px;" width="6" height="6" viewBox="0 0 6 6"><path d="M0 0 L5.5 0 L0 5.5z" fill="#127a2e"/></svg>
<div class="c" style="left:796.8px;width:61px;text-align:center;top:567.5px;transform:scaleX(0.91);">#VALUE!</div>
<svg style="position:absolute;left:858px;top:568px;" width="6" height="6" viewBox="0 0 6 6"><path d="M0 0 L5.5 0 L0 5.5z" fill="#127a2e"/></svg>
<div class="c" style="left:858.8px;width:61px;text-align:center;top:567.5px;transform:scaleX(0.91);">#VALUE!</div>
<svg style="position:absolute;left:920px;top:568px;" width="6" height="6" viewBox="0 0 6 6"><path d="M0 0 L5.5 0 L0 5.5z" fill="#127a2e"/></svg>
<div class="c" style="left:920.8px;width:61px;text-align:center;top:567.5px;transform:scaleX(0.91);">#VALUE!</div>
<svg style="position:absolute;left:982px;top:568px;" width="6" height="6" viewBox="0 0 6 6"><path d="M0 0 L5.5 0 L0 5.5z" fill="#127a2e"/></svg>
<div class="c" style="left:982.8px;width:61px;text-align:center;top:567.5px;transform:scaleX(0.91);">#VALUE!</div>
<svg style="position:absolute;left:1044px;top:568px;" width="6" height="6" viewBox="0 0 6 6"><path d="M0 0 L5.5 0 L0 5.5z" fill="#127a2e"/></svg>
<div class="c" style="left:1044.8px;width:61px;text-align:center;top:567.5px;transform:scaleX(0.91);">#VALUE!</div>
<svg style="position:absolute;left:1106px;top:568px;" width="6" height="6" viewBox="0 0 6 6"><path d="M0 0 L5.5 0 L0 5.5z" fill="#127a2e"/></svg>
<div class="c" style="left:1106.8px;width:61px;text-align:center;top:567.5px;transform:scaleX(0.91);">#VALUE!</div>
<svg style="position:absolute;left:1168px;top:568px;" width="6" height="6" viewBox="0 0 6 6"><path d="M0 0 L5.5 0 L0 5.5z" fill="#127a2e"/></svg>
<div class="c" style="left:1168.8px;width:61px;text-align:center;top:567.5px;transform:scaleX(0.91);">#VALUE!</div>
<svg style="position:absolute;left:1230px;top:568px;" width="6" height="6" viewBox="0 0 6 6"><path d="M0 0 L5.5 0 L0 5.5z" fill="#127a2e"/></svg>
<div class="c" style="left:1230.8px;width:61px;text-align:center;top:567.5px;transform:scaleX(0.91);">#VALUE!</div>
<svg style="position:absolute;left:423px;top:580px;" width="6" height="6" viewBox="0 0 6 6"><path d="M0 0 L5.5 0 L0 5.5z" fill="#127a2e"/></svg>
<div class="c" style="left:423.8px;width:62px;text-align:center;top:579.5px;transform:scaleX(0.91);">#VALUE!</div>
<svg style="position:absolute;left:486px;top:580px;" width="6" height="6" viewBox="0 0 6 6"><path d="M0 0 L5.5 0 L0 5.5z" fill="#127a2e"/></svg>
<div class="c" style="left:486.8px;width:61px;text-align:center;top:579.5px;transform:scaleX(0.91);">#VALUE!</div>
<svg style="position:absolute;left:548px;top:580px;" width="6" height="6" viewBox="0 0 6 6"><path d="M0 0 L5.5 0 L0 5.5z" fill="#127a2e"/></svg>
<div class="c" style="left:548.8px;width:61px;text-align:center;top:579.5px;transform:scaleX(0.91);">#VALUE!</div>
<svg style="position:absolute;left:610px;top:580px;" width="6" height="6" viewBox="0 0 6 6"><path d="M0 0 L5.5 0 L0 5.5z" fill="#127a2e"/></svg>
<div class="c" style="left:610.8px;width:61px;text-align:center;top:579.5px;transform:scaleX(0.91);">#VALUE!</div>
<svg style="position:absolute;left:672px;top:580px;" width="6" height="6" viewBox="0 0 6 6"><path d="M0 0 L5.5 0 L0 5.5z" fill="#127a2e"/></svg>
<div class="c" style="left:672.8px;width:61px;text-align:center;top:579.5px;transform:scaleX(0.91);">#VALUE!</div>
<svg style="position:absolute;left:734px;top:580px;" width="6" height="6" viewBox="0 0 6 6"><path d="M0 0 L5.5 0 L0 5.5z" fill="#127a2e"/></svg>
<div class="c" style="left:734.8px;width:61px;text-align:center;top:579.5px;transform:scaleX(0.91);">#VALUE!</div>
<svg style="position:absolute;left:796px;top:580px;" width="6" height="6" viewBox="0 0 6 6"><path d="M0 0 L5.5 0 L0 5.5z" fill="#127a2e"/></svg>
<div class="c" style="left:796.8px;width:61px;text-align:center;top:579.5px;transform:scaleX(0.91);">#VALUE!</div>
<svg style="position:absolute;left:858px;top:580px;" width="6" height="6" viewBox="0 0 6 6"><path d="M0 0 L5.5 0 L0 5.5z" fill="#127a2e"/></svg>
<div class="c" style="left:858.8px;width:61px;text-align:center;top:579.5px;transform:scaleX(0.91);">#VALUE!</div>
<svg style="position:absolute;left:920px;top:580px;" width="6" height="6" viewBox="0 0 6 6"><path d="M0 0 L5.5 0 L0 5.5z" fill="#127a2e"/></svg>
<div class="c" style="left:920.8px;width:61px;text-align:center;top:579.5px;transform:scaleX(0.91);">#VALUE!</div>
<svg style="position:absolute;left:982px;top:580px;" width="6" height="6" viewBox="0 0 6 6"><path d="M0 0 L5.5 0 L0 5.5z" fill="#127a2e"/></svg>
<div class="c" style="left:982.8px;width:61px;text-align:center;top:579.5px;transform:scaleX(0.91);">#VALUE!</div>
<svg style="position:absolute;left:1044px;top:580px;" width="6" height="6" viewBox="0 0 6 6"><path d="M0 0 L5.5 0 L0 5.5z" fill="#127a2e"/></svg>
<div class="c" style="left:1044.8px;width:61px;text-align:center;top:579.5px;transform:scaleX(0.91);">#VALUE!</div>
<svg style="position:absolute;left:1106px;top:580px;" width="6" height="6" viewBox="0 0 6 6"><path d="M0 0 L5.5 0 L0 5.5z" fill="#127a2e"/></svg>
<div class="c" style="left:1106.8px;width:61px;text-align:center;top:579.5px;transform:scaleX(0.91);">#VALUE!</div>
<svg style="position:absolute;left:1168px;top:580px;" width="6" height="6" viewBox="0 0 6 6"><path d="M0 0 L5.5 0 L0 5.5z" fill="#127a2e"/></svg>
<div class="c" style="left:1168.8px;width:61px;text-align:center;top:579.5px;transform:scaleX(0.91);">#VALUE!</div>
<svg style="position:absolute;left:1230px;top:580px;" width="6" height="6" viewBox="0 0 6 6"><path d="M0 0 L5.5 0 L0 5.5z" fill="#127a2e"/></svg>
<div class="c" style="left:1230.8px;width:61px;text-align:center;top:579.5px;transform:scaleX(0.91);">#VALUE!</div>
<svg style="position:absolute;left:423px;top:592px;" width="6" height="6" viewBox="0 0 6 6"><path d="M0 0 L5.5 0 L0 5.5z" fill="#127a2e"/></svg>
<div class="c" style="left:423.8px;width:62px;text-align:center;top:591.5px;transform:scaleX(0.91);">#VALUE!</div>
<svg style="position:absolute;left:486px;top:592px;" width="6" height="6" viewBox="0 0 6 6"><path d="M0 0 L5.5 0 L0 5.5z" fill="#127a2e"/></svg>
<div class="c" style="left:486.8px;width:61px;text-align:center;top:591.5px;transform:scaleX(0.91);">#VALUE!</div>
<svg style="position:absolute;left:548px;top:592px;" width="6" height="6" viewBox="0 0 6 6"><path d="M0 0 L5.5 0 L0 5.5z" fill="#127a2e"/></svg>
<div class="c" style="left:548.8px;width:61px;text-align:center;top:591.5px;transform:scaleX(0.91);">#VALUE!</div>
<svg style="position:absolute;left:610px;top:592px;" width="6" height="6" viewBox="0 0 6 6"><path d="M0 0 L5.5 0 L0 5.5z" fill="#127a2e"/></svg>
<div class="c" style="left:610.8px;width:61px;text-align:center;top:591.5px;transform:scaleX(0.91);">#VALUE!</div>
<svg style="position:absolute;left:672px;top:592px;" width="6" height="6" viewBox="0 0 6 6"><path d="M0 0 L5.5 0 L0 5.5z" fill="#127a2e"/></svg>
<div class="c" style="left:672.8px;width:61px;text-align:center;top:591.5px;transform:scaleX(0.91);">#VALUE!</div>
<svg style="position:absolute;left:734px;top:592px;" width="6" height="6" viewBox="0 0 6 6"><path d="M0 0 L5.5 0 L0 5.5z" fill="#127a2e"/></svg>
<div class="c" style="left:734.8px;width:61px;text-align:center;top:591.5px;transform:scaleX(0.91);">#VALUE!</div>
<svg style="position:absolute;left:796px;top:592px;" width="6" height="6" viewBox="0 0 6 6"><path d="M0 0 L5.5 0 L0 5.5z" fill="#127a2e"/></svg>
<div class="c" style="left:796.8px;width:61px;text-align:center;top:591.5px;transform:scaleX(0.91);">#VALUE!</div>
<svg style="position:absolute;left:858px;top:592px;" width="6" height="6" viewBox="0 0 6 6"><path d="M0 0 L5.5 0 L0 5.5z" fill="#127a2e"/></svg>
<div class="c" style="left:858.8px;width:61px;text-align:center;top:591.5px;transform:scaleX(0.91);">#VALUE!</div>
<svg style="position:absolute;left:920px;top:592px;" width="6" height="6" viewBox="0 0 6 6"><path d="M0 0 L5.5 0 L0 5.5z" fill="#127a2e"/></svg>
<div class="c" style="left:920.8px;width:61px;text-align:center;top:591.5px;transform:scaleX(0.91);">#VALUE!</div>
<svg style="position:absolute;left:982px;top:592px;" width="6" height="6" viewBox="0 0 6 6"><path d="M0 0 L5.5 0 L0 5.5z" fill="#127a2e"/></svg>
<div class="c" style="left:982.8px;width:61px;text-align:center;top:591.5px;transform:scaleX(0.91);">#VALUE!</div>
<svg style="position:absolute;left:1044px;top:592px;" width="6" height="6" viewBox="0 0 6 6"><path d="M0 0 L5.5 0 L0 5.5z" fill="#127a2e"/></svg>
<div class="c" style="left:1044.8px;width:61px;text-align:center;top:591.5px;transform:scaleX(0.91);">#VALUE!</div>
<svg style="position:absolute;left:1106px;top:592px;" width="6" height="6" viewBox="0 0 6 6"><path d="M0 0 L5.5 0 L0 5.5z" fill="#127a2e"/></svg>
<div class="c" style="left:1106.8px;width:61px;text-align:center;top:591.5px;transform:scaleX(0.91);">#VALUE!</div>
<svg style="position:absolute;left:1168px;top:592px;" width="6" height="6" viewBox="0 0 6 6"><path d="M0 0 L5.5 0 L0 5.5z" fill="#127a2e"/></svg>
<div class="c" style="left:1168.8px;width:61px;text-align:center;top:591.5px;transform:scaleX(0.91);">#VALUE!</div>
<svg style="position:absolute;left:1230px;top:592px;" width="6" height="6" viewBox="0 0 6 6"><path d="M0 0 L5.5 0 L0 5.5z" fill="#127a2e"/></svg>
<div class="c" style="left:1230.8px;width:61px;text-align:center;top:591.5px;transform:scaleX(0.91);">#VALUE!</div>
<svg style="position:absolute;left:423px;top:641px;" width="6" height="6" viewBox="0 0 6 6"><path d="M0 0 L5.5 0 L0 5.5z" fill="#127a2e"/></svg>
<div class="c" style="left:423.8px;width:62px;text-align:center;top:640.5px;transform:scaleX(0.91);">#VALUE!</div>
<svg style="position:absolute;left:486px;top:641px;" width="6" height="6" viewBox="0 0 6 6"><path d="M0 0 L5.5 0 L0 5.5z" fill="#127a2e"/></svg>
<div class="c" style="left:486.8px;width:61px;text-align:center;top:640.5px;transform:scaleX(0.91);">#VALUE!</div>
<svg style="position:absolute;left:548px;top:641px;" width="6" height="6" viewBox="0 0 6 6"><path d="M0 0 L5.5 0 L0 5.5z" fill="#127a2e"/></svg>
<div class="c" style="left:548.8px;width:61px;text-align:center;top:640.5px;transform:scaleX(0.91);">#VALUE!</div>
<svg style="position:absolute;left:610px;top:641px;" width="6" height="6" viewBox="0 0 6 6"><path d="M0 0 L5.5 0 L0 5.5z" fill="#127a2e"/></svg>
<div class="c" style="left:610.8px;width:61px;text-align:center;top:640.5px;transform:scaleX(0.91);">#VALUE!</div>
<svg style="position:absolute;left:672px;top:641px;" width="6" height="6" viewBox="0 0 6 6"><path d="M0 0 L5.5 0 L0 5.5z" fill="#127a2e"/></svg>
<div class="c" style="left:672.8px;width:61px;text-align:center;top:640.5px;transform:scaleX(0.91);">#VALUE!</div>
<svg style="position:absolute;left:734px;top:641px;" width="6" height="6" viewBox="0 0 6 6"><path d="M0 0 L5.5 0 L0 5.5z" fill="#127a2e"/></svg>
<div class="c" style="left:734.8px;width:61px;text-align:center;top:640.5px;transform:scaleX(0.91);">#VALUE!</div>
<svg style="position:absolute;left:796px;top:641px;" width="6" height="6" viewBox="0 0 6 6"><path d="M0 0 L5.5 0 L0 5.5z" fill="#127a2e"/></svg>
<div class="c" style="left:796.8px;width:61px;text-align:center;top:640.5px;transform:scaleX(0.91);">#VALUE!</div>
<svg style="position:absolute;left:858px;top:641px;" width="6" height="6" viewBox="0 0 6 6"><path d="M0 0 L5.5 0 L0 5.5z" fill="#127a2e"/></svg>
<div class="c" style="left:858.8px;width:61px;text-align:center;top:640.5px;transform:scaleX(0.91);">#VALUE!</div>
<svg style="position:absolute;left:920px;top:641px;" width="6" height="6" viewBox="0 0 6 6"><path d="M0 0 L5.5 0 L0 5.5z" fill="#127a2e"/></svg>
<div class="c" style="left:920.8px;width:61px;text-align:center;top:640.5px;transform:scaleX(0.91);">#VALUE!</div>
<svg style="position:absolute;left:982px;top:641px;" width="6" height="6" viewBox="0 0 6 6"><path d="M0 0 L5.5 0 L0 5.5z" fill="#127a2e"/></svg>
<div class="c" style="left:982.8px;width:61px;text-align:center;top:640.5px;transform:scaleX(0.91);">#VALUE!</div>
<svg style="position:absolute;left:1044px;top:641px;" width="6" height="6" viewBox="0 0 6 6"><path d="M0 0 L5.5 0 L0 5.5z" fill="#127a2e"/></svg>
<div class="c" style="left:1044.8px;width:61px;text-align:center;top:640.5px;transform:scaleX(0.91);">#VALUE!</div>
<svg style="position:absolute;left:1106px;top:641px;" width="6" height="6" viewBox="0 0 6 6"><path d="M0 0 L5.5 0 L0 5.5z" fill="#127a2e"/></svg>
<div class="c" style="left:1106.8px;width:61px;text-align:center;top:640.5px;transform:scaleX(0.91);">#VALUE!</div>
<svg style="position:absolute;left:1168px;top:641px;" width="6" height="6" viewBox="0 0 6 6"><path d="M0 0 L5.5 0 L0 5.5z" fill="#127a2e"/></svg>
<div class="c" style="left:1168.8px;width:61px;text-align:center;top:640.5px;transform:scaleX(0.91);">#VALUE!</div>
<svg style="position:absolute;left:1230px;top:641px;" width="6" height="6" viewBox="0 0 6 6"><path d="M0 0 L5.5 0 L0 5.5z" fill="#127a2e"/></svg>
<div class="c" style="left:1230.8px;width:61px;text-align:center;top:640.5px;transform:scaleX(0.91);">#VALUE!</div>
<div class="c" style="left:400.2px;width:80px;text-align:right;top:420.5px;transform:scaleX(0.96);transform-origin:100% 50%;">121,855,493</div>
<div class="c" style="left:400.2px;width:80px;text-align:right;top:664.5px;transform:scaleX(0.96);transform-origin:100% 50%;">419,290,430</div>
<div class="c" style="left:453.5px;width:80px;text-align:right;top:420.5px;transform:scaleX(0.96);transform-origin:100% 50%;">-</div>
<div class="c" style="left:453.5px;width:80px;text-align:right;top:664.5px;transform:scaleX(0.96);transform-origin:100% 50%;">-</div>
<div class="c" style="left:515.5px;width:80px;text-align:right;top:420.5px;transform:scaleX(0.96);transform-origin:100% 50%;">-</div>
<div class="c" style="left:515.5px;width:80px;text-align:right;top:664.5px;transform:scaleX(0.96);transform-origin:100% 50%;">-</div>
<div class="c" style="left:577.5px;width:80px;text-align:right;top:420.5px;transform:scaleX(0.96);transform-origin:100% 50%;">-</div>
<div class="c" style="left:577.5px;width:80px;text-align:right;top:664.5px;transform:scaleX(0.96);transform-origin:100% 50%;">-</div>
<div class="c" style="left:639.5px;width:80px;text-align:right;top:420.5px;transform:scaleX(0.96);transform-origin:100% 50%;">-</div>
<div class="c" style="left:639.5px;width:80px;text-align:right;top:664.5px;transform:scaleX(0.96);transform-origin:100% 50%;">-</div>
<div class="c" style="left:701.5px;width:80px;text-align:right;top:420.5px;transform:scaleX(0.96);transform-origin:100% 50%;">-</div>
<div class="c" style="left:701.5px;width:80px;text-align:right;top:664.5px;transform:scaleX(0.96);transform-origin:100% 50%;">-</div>
<div class="c" style="left:763.5px;width:80px;text-align:right;top:420.5px;transform:scaleX(0.96);transform-origin:100% 50%;">-</div>
<div class="c" style="left:763.5px;width:80px;text-align:right;top:664.5px;transform:scaleX(0.96);transform-origin:100% 50%;">-</div>
<div class="c" style="left:825.5px;width:80px;text-align:right;top:420.5px;transform:scaleX(0.96);transform-origin:100% 50%;">-</div>
<div class="c" style="left:825.5px;width:80px;text-align:right;top:664.5px;transform:scaleX(0.96);transform-origin:100% 50%;">-</div>
<div class="c" style="left:887.5px;width:80px;text-align:right;top:420.5px;transform:scaleX(0.96);transform-origin:100% 50%;">-</div>
<div class="c" style="left:887.5px;width:80px;text-align:right;top:664.5px;transform:scaleX(0.96);transform-origin:100% 50%;">-</div>
<div class="c" style="left:949.5px;width:80px;text-align:right;top:420.5px;transform:scaleX(0.96);transform-origin:100% 50%;">-</div>
<div class="c" style="left:949.5px;width:80px;text-align:right;top:664.5px;transform:scaleX(0.96);transform-origin:100% 50%;">-</div>
<div class="c" style="left:1011.5px;width:80px;text-align:right;top:420.5px;transform:scaleX(0.96);transform-origin:100% 50%;">-</div>
<div class="c" style="left:1011.5px;width:80px;text-align:right;top:664.5px;transform:scaleX(0.96);transform-origin:100% 50%;">-</div>
<div class="c" style="left:1073.5px;width:80px;text-align:right;top:420.5px;transform:scaleX(0.96);transform-origin:100% 50%;">-</div>
<div class="c" style="left:1073.5px;width:80px;text-align:right;top:664.5px;transform:scaleX(0.96);transform-origin:100% 50%;">-</div>
<div class="c" style="left:1135.5px;width:80px;text-align:right;top:420.5px;transform:scaleX(0.96);transform-origin:100% 50%;">-</div>
<div class="c" style="left:1135.5px;width:80px;text-align:right;top:664.5px;transform:scaleX(0.96);transform-origin:100% 50%;">-</div>
<div class="c" style="left:1197.5px;width:80px;text-align:right;top:420.5px;transform:scaleX(0.96);transform-origin:100% 50%;">-</div>
<div class="c" style="left:1197.5px;width:80px;text-align:right;top:664.5px;transform:scaleX(0.96);transform-origin:100% 50%;">-</div>
<div class="c" style="left:400.2px;width:80px;text-align:right;top:652.5px;transform:scaleX(0.96);transform-origin:100% 50%;">10,220,631</div>
<div class="c" style="left:462.20000000000005px;width:80px;text-align:right;top:652.5px;transform:scaleX(0.96);transform-origin:100% 50%;">44,259,032</div>
<div class="c" style="left:524.2px;width:80px;text-align:right;top:652.5px;transform:scaleX(0.96);transform-origin:100% 50%;">40,932,901</div>
<div class="c" style="left:586.2px;width:80px;text-align:right;top:652.5px;transform:scaleX(0.96);transform-origin:100% 50%;">39,937,180</div>
<div class="c" style="left:648.2px;width:80px;text-align:right;top:652.5px;transform:scaleX(0.96);transform-origin:100% 50%;">39,987,182</div>
<div class="c" style="left:710.2px;width:80px;text-align:right;top:652.5px;transform:scaleX(0.96);transform-origin:100% 50%;">40,271,385</div>
<div class="c" style="left:772.2px;width:80px;text-align:right;top:652.5px;transform:scaleX(0.96);transform-origin:100% 50%;">40,826,052</div>
<div class="c" style="left:834.2px;width:80px;text-align:right;top:652.5px;transform:scaleX(0.96);transform-origin:100% 50%;">41,438,443</div>
<div class="c" style="left:896.2px;width:80px;text-align:right;top:652.5px;transform:scaleX(0.96);transform-origin:100% 50%;">42,060,020</div>
<div class="c" style="left:958.2px;width:80px;text-align:right;top:652.5px;transform:scaleX(0.96);transform-origin:100% 50%;">42,690,920</div>
<div class="c" style="left:1020.2px;width:80px;text-align:right;top:652.5px;transform:scaleX(0.96);transform-origin:100% 50%;">43,331,284</div>
<div class="c" style="left:1082.2px;width:80px;text-align:right;top:652.5px;transform:scaleX(0.96);transform-origin:100% 50%;">43,981,253</div>
<div class="c" style="left:1144.2px;width:80px;text-align:right;top:652.5px;transform:scaleX(0.96);transform-origin:100% 50%;">44,640,972</div>
<div class="c" style="left:1206.2px;width:80px;text-align:right;top:652.5px;transform:scaleX(0.96);transform-origin:100% 50%;">45,310,585</div>
<div style="position:absolute;left:0px;top:676px;width:1280px;height:26px;background:linear-gradient(#f1f1f1,#e9e9e9);"></div>
<div style="position:absolute;left:0px;top:676px;width:1280px;height:1px;background:#d0d0d0;"></div>
<div style="position:absolute;left:0px;top:702px;width:1280px;height:1px;background:#c4c4c4;"></div>
<svg style="position:absolute;left:14px;top:683px;" width="9" height="12" viewBox="0 0 9 12"><path d="M8 0.5 L8 11.5 L1 6z" fill="#9a9a9a"/></svg>
<svg style="position:absolute;left:37px;top:683px;" width="9" height="12" viewBox="0 0 9 12"><path d="M1 0.5 L1 11.5 L8 6z" fill="#555"/></svg>
<div style="position:absolute;left:60px;top:677px;width:1px;height:20px;background:#d6d6d6;"></div>
<div style="position:absolute;left:81px;top:678.94px;white-space:pre;line-height:20px;font-size:12.3px;color:#5a5a5a;">Notes</div>
<div style="position:absolute;left:133px;top:677px;width:1px;height:20px;background:#d6d6d6;"></div>
<div style="position:absolute;left:134.5px;top:676px;width:94.5px;height:3.5px;background:#ef7080;"></div>
<div style="position:absolute;left:146px;top:678.87px;white-space:pre;line-height:20px;font-size:12.5px;color:#5a5a5a;">Assumptions</div>
<div style="position:absolute;left:229px;top:677px;width:1px;height:20px;background:#d6d6d6;"></div>
<div style="position:absolute;left:230px;top:676px;width:103px;height:3.5px;background:#a98ac7;"></div>
<div style="position:absolute;left:241px;top:678.94px;white-space:pre;line-height:20px;font-size:12.3px;color:#5a5a5a;">Scenario Page</div>
<div style="position:absolute;left:333px;top:677px;width:1px;height:20px;background:#d6d6d6;"></div>
<div style="position:absolute;left:345.5px;top:678.94px;white-space:pre;line-height:20px;font-size:12.3px;color:#5a5a5a;">Cash Balance Chart</div>
<div style="position:absolute;left:467px;top:677px;width:1px;height:20px;background:#d6d6d6;"></div>
<div style="position:absolute;left:479.5px;top:678.94px;white-space:pre;line-height:20px;font-size:12.3px;color:#5a5a5a;">Debt Balance Chart</div>
<div style="position:absolute;left:599px;top:677px;width:1px;height:20px;background:#d6d6d6;"></div>
<div style="position:absolute;left:612px;top:678.85px;white-space:pre;line-height:20px;font-size:12.55px;color:#5a5a5a;">Monthly Consolidated Model</div>
<div style="position:absolute;left:782.5px;top:676px;width:180.5px;height:22px;background:#fff;border-radius:0 0 3px 3px;box-shadow:0 1px 1px rgba(0,0,0,0.25);"></div>
<div style="position:absolute;left:794.5px;top:679.04px;white-space:pre;line-height:20px;font-size:12px;font-weight:bold;color:#1f7244;">Annual Consolidated Model</div>
<div style="position:absolute;left:963px;top:677px;width:1px;height:20px;background:#d6d6d6;"></div>
<div style="position:absolute;left:975.5px;top:678.94px;white-space:pre;line-height:20px;font-size:12.3px;color:#5a5a5a;">Degradation Example</div>
<div style="position:absolute;left:1106px;top:677px;width:1px;height:20px;background:#d6d6d6;"></div>
<div style="position:absolute;left:1119px;top:678.94px;white-space:pre;line-height:20px;font-size:12.3px;color:#5a5a5a;">Data Sheet</div>
<div style="position:absolute;left:1191px;top:677px;width:1px;height:20px;background:#d6d6d6;"></div>
<div style="position:absolute;left:1201px;top:678.94px;white-space:pre;line-height:20px;font-size:12.3px;color:#dadada;">S</div>
<div style="position:absolute;left:1211px;top:677px;width:1px;height:20px;background:#d6d6d6;"></div>
<svg style="position:absolute;left:1225px;top:683px;" width="12" height="12" viewBox="0 0 12 12"><path d="M6 0.5v11M0.5 6h11" stroke="#555" stroke-width="2"/></svg>
<div style="position:absolute;left:1249px;top:677px;width:1px;height:20px;background:#d6d6d6;"></div>
<div style="position:absolute;left:0px;top:703px;width:1280px;height:23px;background:linear-gradient(#e6e6e6,#d2d2d2);"></div>
<div style="position:absolute;left:24.4px;top:703.77px;white-space:pre;line-height:20px;font-size:12.2px;color:#555;">Ready</div>
<div style="position:absolute;left:81px;top:703.60px;white-space:pre;line-height:20px;font-size:12.7px;color:#555;">Calculate</div>
<div style="position:absolute;left:995px;top:703px;width:37px;height:22px;background:#a9a9a9;"></div>
<svg style="position:absolute;left:1007px;top:707px;" width="14" height="14" viewBox="0 0 14 14"><rect x="0" y="0" width="13" height="13" fill="#f6f6f6"/><g fill="#9a9a9a"><rect x="1.2" y="1.2" width="2.9" height="2.9"/><rect x="5.1" y="1.2" width="2.9" height="2.9"/><rect x="9" y="1.2" width="2.9" height="2.9"/><rect x="1.2" y="5.1" width="2.9" height="2.9"/><rect x="5.1" y="5.1" width="2.9" height="2.9"/><rect x="9" y="5.1" width="2.9" height="2.9"/><rect x="1.2" y="9" width="2.9" height="2.9"/><rect x="5.1" y="9" width="2.9" height="2.9"/><rect x="9" y="9" width="2.9" height="2.9"/></g></svg>
<svg style="position:absolute;left:1042px;top:707px;" width="15" height="14" viewBox="0 0 15 14"><rect x="0.6" y="0.6" width="13" height="12.4" fill="none" stroke="#555" stroke-width="1.2"/><rect x="3.5" y="2.5" width="7" height="8" fill="none" stroke="#555" stroke-width="1"/><g fill="#555"><rect x="5" y="4" width="4" height="1"/><rect x="5" y="6" width="4" height="1"/><rect x="5" y="8" width="4" height="1"/></g></svg>
<div style="position:absolute;left:1075px;top:713px;width:8px;height:2px;background:#666;"></div>
<div style="position:absolute;left:1090px;top:712px;width:100px;height:4px;background:#9a9a9a;border-radius:2px;"></div>
<div style="position:absolute;left:1138px;top:713px;width:1.5px;height:2px;background:#eee;"></div>
<div style="position:absolute;left:1124.0px;top:707.5px;width:13px;height:13px;border-radius:50%;background:#fafafa;border:0.8px solid #b0b0b0;box-sizing:border-box;"></div>
<svg style="position:absolute;left:1196px;top:709px;" width="10" height="10" viewBox="0 0 10 10"><path d="M5 0.5v9M0.5 5h9" stroke="#666" stroke-width="2"/></svg>
<div style="position:absolute;left:1225.5px;top:703.90px;white-space:pre;line-height:20px;font-size:12.7px;color:#555;">80%</div>
<div style="position:absolute;left:0px;top:724px;width:1280px;height:2px;background:#2a2a2a;"></div>
</body></html>
